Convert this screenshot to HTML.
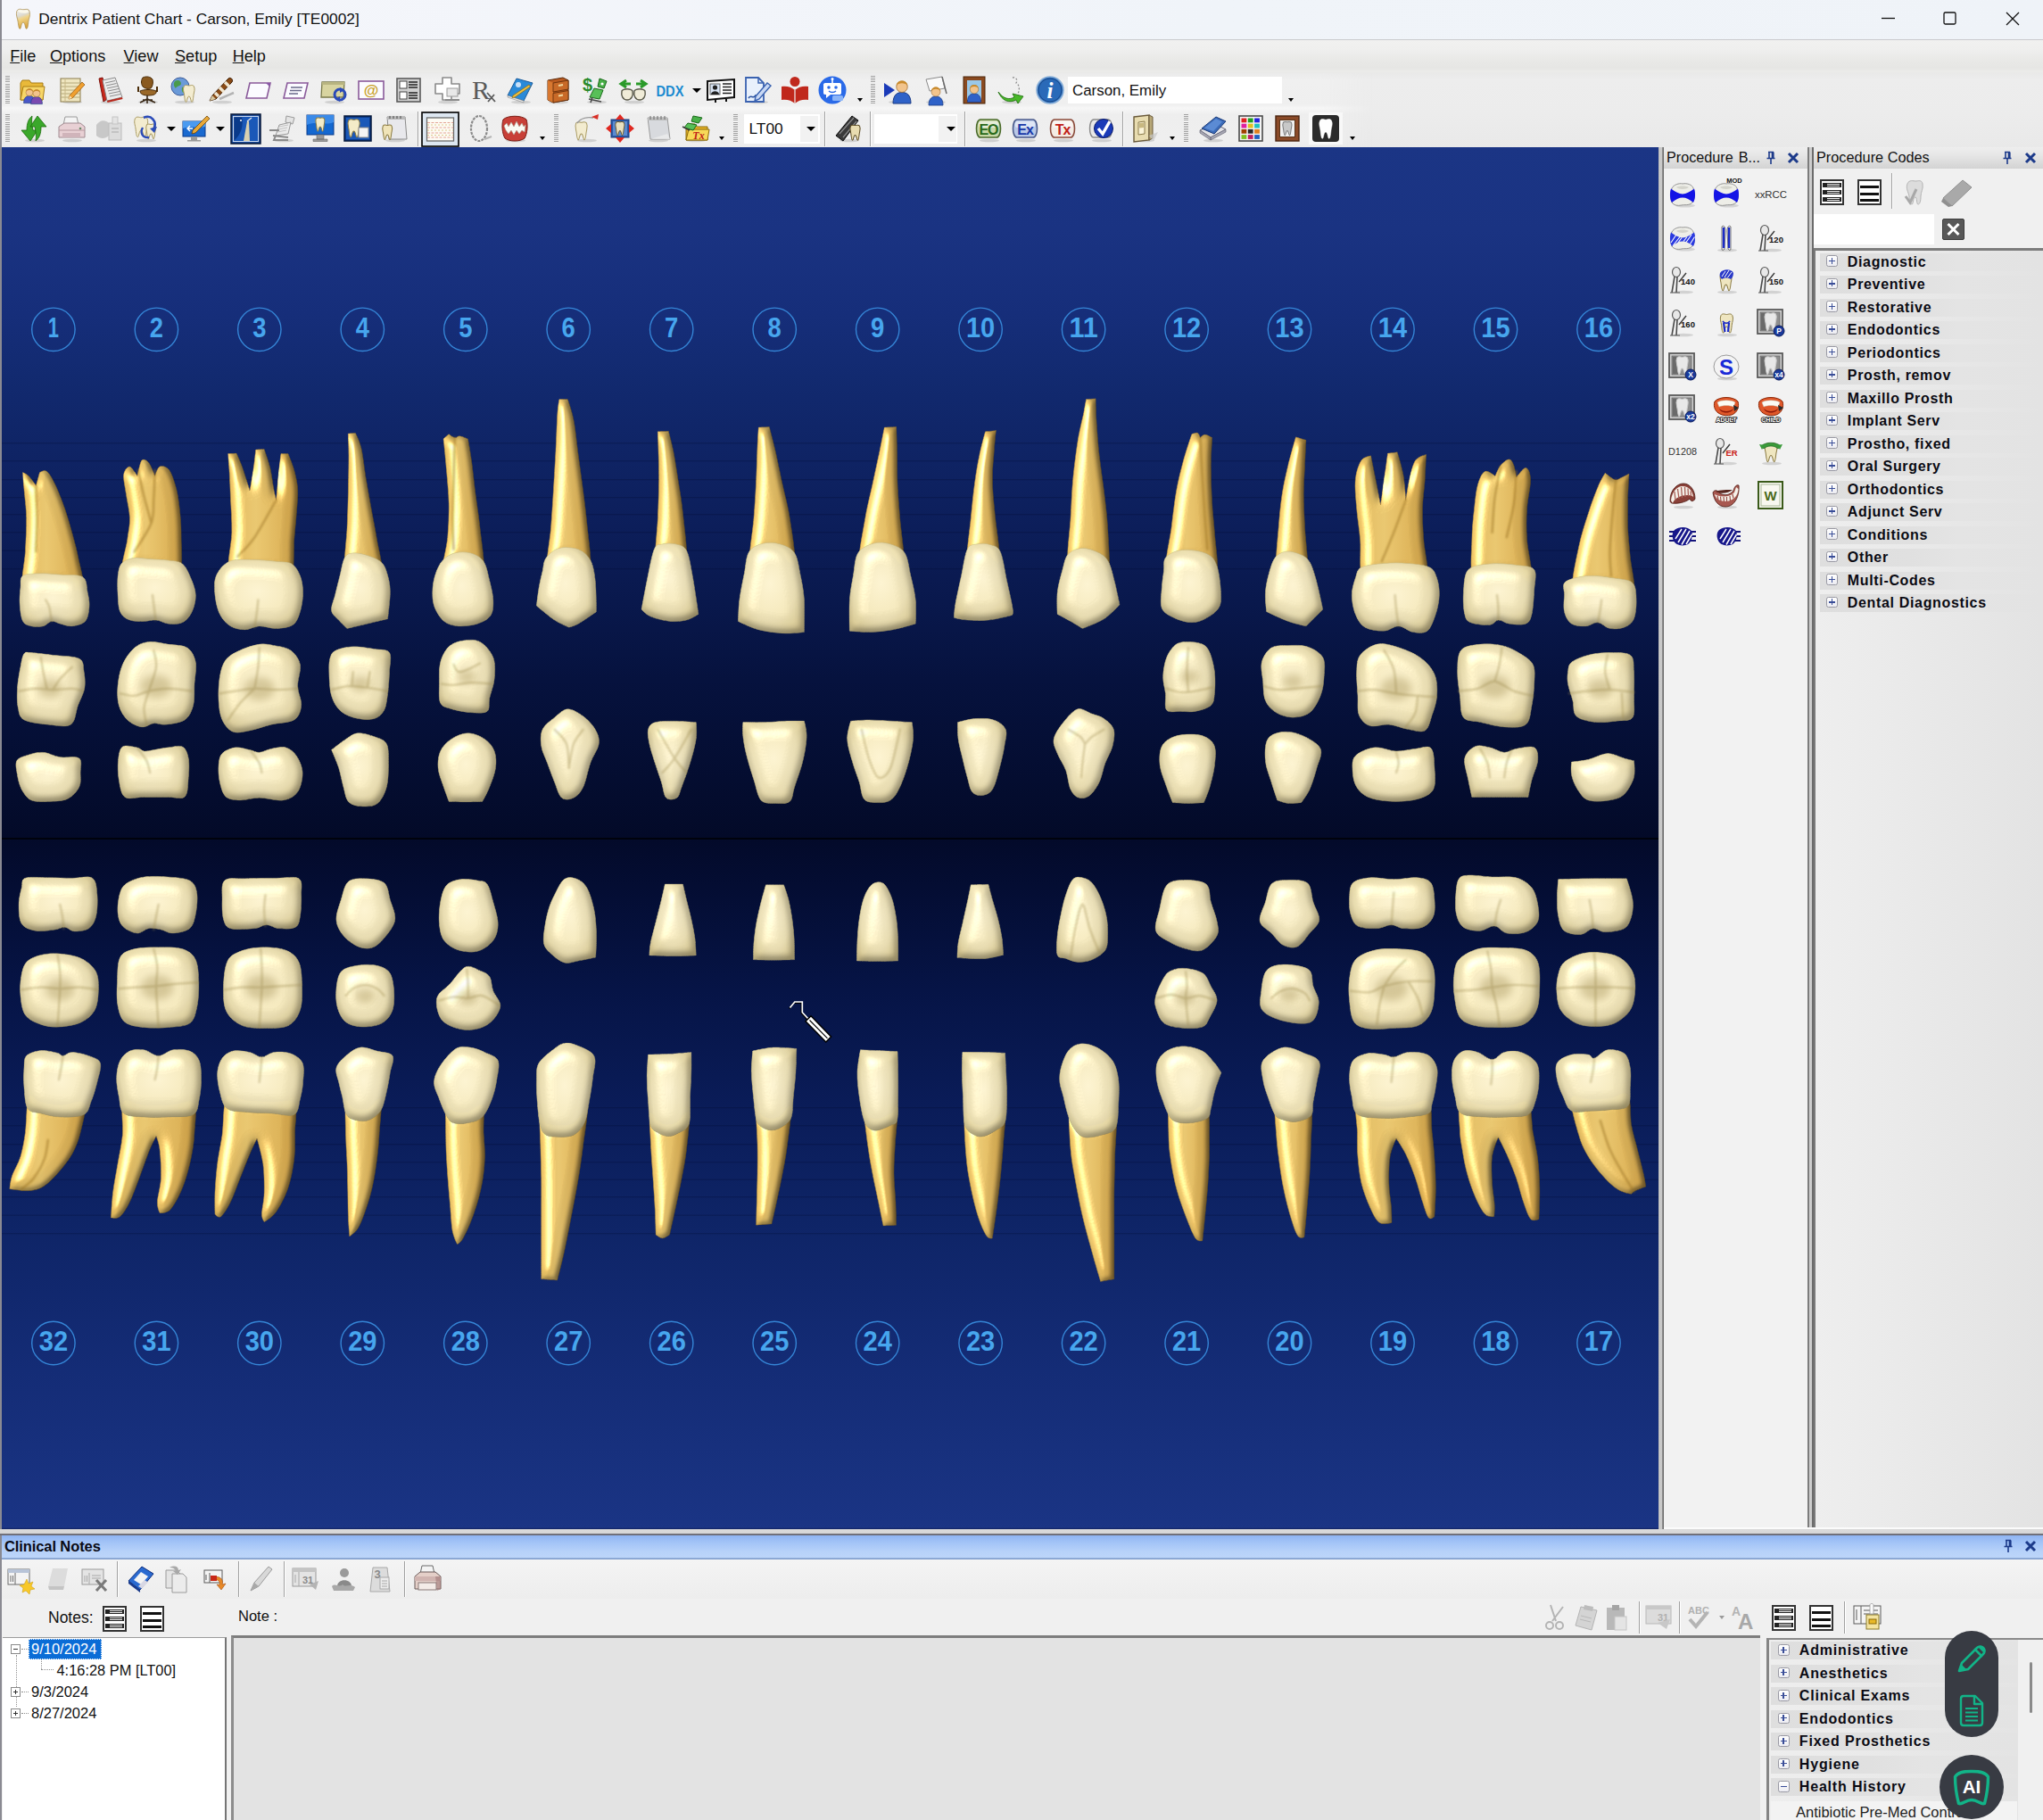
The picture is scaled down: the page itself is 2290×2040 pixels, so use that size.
<!DOCTYPE html><html><head><meta charset="utf-8"><title>Dentrix Patient Chart</title><style>
*{box-sizing:border-box;margin:0;padding:0}
html,body{width:2290px;height:2040px;overflow:hidden;background:#f0f0f0;font-family:"Liberation Sans",sans-serif;color:#000}
.abs{position:absolute}
.t{position:absolute;white-space:pre;line-height:1}
#title{left:0;top:0;width:2290px;height:44.8px;background:linear-gradient(90deg,#f5f6fb,#f0f4f9 60%,#eff3f8);border-bottom:1.2px solid #c9cacd}
#menu{left:0;top:44.8px;width:2290px;height:36.2px;background:linear-gradient(#f1f1f0,#efefee 30%,#e9e9e7 62%,#e6e6e4 86%,#ececea)}
#tb{left:0;top:81px;width:2290px;height:84px;background:linear-gradient(#e9e9e8,#ededed 10%,#ececec 55%,#e9e9e9)}
#chart{left:2px;top:165px;width:1857px;height:1549px;background:linear-gradient(#1b3585 0%,#1a3382 6%,#162e7a 12%,#122a70 16.5%,#0c1e5a 27.5%,#06123e 38.5%,#030a28 50%,#030a2a 50.1%,#061446 61%,#0a1c58 69.3%,#0e2466 77.5%,#142c76 88.5%,#1a3484 99.5%,#1b3585 100%);overflow:hidden}
.u{text-decoration:underline}
.hd{position:absolute;height:23.5px;background:linear-gradient(#eeeeee,#e7e7e7 35%,#d3d3d3);}
.tree b{font-weight:bold}
.pm{position:absolute;width:13.2px;height:12.6px;border:1px solid #9a9aa4;background:linear-gradient(#ffffff,#ececf2);border-radius:2.500px}
.pm:before{content:"";position:absolute;left:2.100px;top:4.600px;width:7px;height:1.300px;background:#3a4e98}
.pm.p:after{content:"";position:absolute;left:4.950px;top:1.800px;width:1.300px;height:7px;background:#3a4e98}
.row{position:absolute;height:24px;left:0;right:0;background:linear-gradient(90deg,#dedede,#e4e4e4)}
.grip{position:absolute;width:5px;height:32px;background:repeating-linear-gradient(#a2a2a2 0,#a2a2a2 1px,#f3f3f3 1.1px,#f3f3f3 2.13px)}
.sep{position:absolute;width:1px;background:#a0a0a0;box-shadow:1px 0 0 #fff}
.dd{position:absolute;width:0;height:0;border-left:5px solid transparent;border-right:5px solid transparent;border-top:5px solid #000}
.dds{position:absolute;width:0;height:0;border-left:3.5px solid transparent;border-right:3.5px solid transparent;border-top:4px solid #000}
</style></head><body><div id="title" class="abs"></div><svg class="abs" style="left:14.5px;top:7.500px" width="22" height="27" viewBox="0 0 24 30"><defs><linearGradient id="tg" x1="0" y1="0" x2=".25" y2="1"><stop offset="0" stop-color="#f2f2f0"/><stop offset=".38" stop-color="#dcdad2"/><stop offset=".55" stop-color="#f0d488"/><stop offset="1" stop-color="#d8a440"/></linearGradient></defs><path d="M4 5 C6 1,10 3,12 3 C15 3,19 1,20 6 C21 11,19 14,18.5 18 C18 23,17.5 27,16 27 C14.5 27,14.5 19,12 19 C9.5 19,9.5 27,8 27 C6.5 27,6 22,5.5 18 C5 14,2.5 10,4 5Z" fill="url(#tg)" stroke="#a98a45" stroke-width=".8"/><path d="M5 5 C7 2.5,10 4,12 4 C15 4,18 2.5,19 6 C17 8,8 8,5 5Z" fill="#fbf8ea"/></svg><div class="t" style="left:43.3px;top:12.5px;font-size:17.35px;color:#111">Dentrix Patient Chart - Carson, Emily [TE0002]</div><svg class="abs" style="left:2090px;top:0" width="200" height="44" viewBox="0 0 200 44"><g stroke="#111" stroke-width="1.3" fill="none"><path d="M19 20.5H34"/><rect x="89" y="14" width="13" height="13" rx="1.5"/><path d="M159 14L173 28M173 14L159 28"/></g></svg><div id="menu" class="abs"></div><div class="t" style="left:11.2px;top:53.6px;font-size:18.1px;width:27px;color:#111"><span class="u">F</span>ile</div><div class="t" style="left:55.9px;top:53.6px;font-size:18.1px;width:63.3px;color:#111"><span class="u">O</span>ptions</div><div class="t" style="left:138.6px;top:53.6px;font-size:18.1px;width:37.3px;color:#111"><span class="u">V</span>iew</div><div class="t" style="left:196px;top:53.6px;font-size:18.1px;width:44px;color:#111"><span class="u">S</span>etup</div><div class="t" style="left:260.7px;top:53.6px;font-size:18.1px;width:37.3px;color:#111"><span class="u">H</span>elp</div><div id="tb" class="abs"></div><div class="abs" style="left:2px;top:82px;width:1538px;height:83px;background:linear-gradient(#ebebeb,#f0f0f0 10%,#efefef 42%,#f6f6f6 47%,#f4f4f4 50%,#eeeeee 56%,#efefef 90%,#ececec);-webkit-mask-image:linear-gradient(90deg,#000 96%,transparent)"></div><div class="grip" style="left:6px;top:85px"></div><div class="grip" style="left:6px;top:128px"></div><svg class="abs" style="left:20.2px;top:85.2px;overflow:visible" width="32" height="32" viewBox="0 0 32 32"><ellipse cx="17" cy="29.5" rx="11" ry="1.8" fill="#000" opacity=".13"/><path d="M3 8L5 5H13L15 8H28V27H3Z" fill="#e9b93a" stroke="#a87c14"/><path d="M3 27L6 12H30L28 27Z" fill="#f7d668" stroke="#a87c14"/><g transform="translate(13,21) scale(0.8)"><path d="M-8 12C-8 4,-4 2,0 2C4 2,8 4,8 12Z" fill="#4a58c8" stroke="#1c3c86" stroke-width=".8"/><circle cx="0" cy="-3" r="5" fill="#f2c48c" stroke="#9a6a30" stroke-width=".6"/><path d="M-5 -4C-5 -10,5 -10,5 -4C3 -7,-3 -7,-5 -4Z" fill="#c98a2a"/></g><g transform="translate(21,22) scale(0.8)"><path d="M-8 12C-8 4,-4 2,0 2C4 2,8 4,8 12Z" fill="#7a4ab0" stroke="#1c3c86" stroke-width=".8"/><circle cx="0" cy="-3" r="5" fill="#f2c48c" stroke="#9a6a30" stroke-width=".6"/><path d="M-5 -4C-5 -10,5 -10,5 -4C3 -7,-3 -7,-5 -4Z" fill="#c98a2a"/></g></svg><svg class="abs" style="left:63.5px;top:85.2px;overflow:visible" width="32" height="32" viewBox="0 0 32 32"><ellipse cx="17" cy="29.5" rx="11" ry="1.8" fill="#000" opacity=".13"/><rect x="4" y="3" width="22" height="26" fill="#efe6c0" stroke="#8a7a4a"/><path d="M4 8H26M4 12H26M4 16H26M4 20H26M4 24H26" stroke="#b4a878" stroke-width="1"/><path d="M9 3V29" stroke="#c8b888"/><path d="M14 22L28 7L31 10L17 25L13 26Z" fill="#f0a030" stroke="#9a5c10" stroke-width=".8"/><path d="M13 26L14 22L17 25Z" fill="#f6e0b0"/></svg><svg class="abs" style="left:107.3px;top:85.2px;overflow:visible" width="32" height="32" viewBox="0 0 32 32"><ellipse cx="17" cy="29.5" rx="11" ry="1.8" fill="#000" opacity=".13"/><path d="M4 3L9 29L13 26L8 2Z" fill="#c8281c" stroke="#7a120c"/><path d="M8 5L22 2L30 24L13 28Z" fill="#ececec" stroke="#8a8a8a"/><path d="M11 8L22 5.5M12 11L23.5 8.5M13 14L25 11.5M14 17L26 14.5M15 20L27 17.5M16 23L28 20.5" stroke="#8c8c8c" stroke-width="1"/><path d="M13 28L30 24L30.5 26L13.5 30Z" fill="#b8281c"/></svg><svg class="abs" style="left:149.0px;top:85.2px;overflow:visible" width="32" height="32" viewBox="0 0 32 32"><ellipse cx="17" cy="29.5" rx="11" ry="1.8" fill="#000" opacity=".13"/><path d="M11 2C15 0,20 1,22 4C23 8,22 12,20 14C16 15,13 14,11 12C9 9,9 5,11 2Z" fill="#8a5a20" stroke="#4a2c08"/><path d="M8 17C12 15,22 15,26 17C27 20,24 22,17 22C11 22,8 20,8 17Z" fill="#9a6828" stroke="#4a2c08"/><path d="M16 22V26M8 30L16 26L25 30M16 26V31M11 27L22 27" stroke="#3a2a18" stroke-width="1.6" fill="none"/><path d="M6 12V18M27 12V18" stroke="#4a2c08" stroke-width="2"/></svg><svg class="abs" style="left:190.0px;top:85.2px;overflow:visible" width="32" height="32" viewBox="0 0 32 32"><ellipse cx="17" cy="29.5" rx="11" ry="1.8" fill="#000" opacity=".13"/><circle cx="12" cy="12" r="10" fill="#6a9ad8" stroke="#3a5a98"/><path d="M6 6C9 4,13 5,13 9C12 12,8 11,7 14C5 12,4 9,6 6ZM14 13C17 12,19 14,18 18C16 20,13 19,14 13Z" fill="#4a9a4a"/><path transform="translate(9,7) scale(0.8)" d="M9 6C11 3,14 5,16 5C18 5,21 3,23 6C25 10,23 14,22.5 18C22 23,21.5 28,20 28C18.5 28,18.5 20,16 20C13.5 20,13.5 28,12 28C10.5 28,10 23,9.5 18C9 14,7 10,9 6Z" fill="#f3ecd0" stroke="#a99a62" stroke-width="1.25"/></svg><svg class="abs" style="left:232.0px;top:85.2px;overflow:visible" width="32" height="32" viewBox="0 0 32 32"><ellipse cx="17" cy="29.5" rx="11" ry="1.8" fill="#000" opacity=".13"/><path d="M3 28L6 22L24 3C26 1,30 4,28 7L10 26Z" fill="#8a4a14" stroke="#3a1c04"/><path d="M9 19L13 23M14 13L19 18M20 7L25 12" stroke="#f0e6d0" stroke-width="3.4"/><path d="M3 28L6 22L10 26Z" fill="#d8c8a0"/><path d="M14 26L30 19" stroke="#9a9a9a" stroke-width="2.5" opacity=".7"/></svg><svg class="abs" style="left:273.5px;top:85.2px;overflow:visible" width="32" height="32" viewBox="0 0 32 32"><path d="M6 8H29L25 25H2Z" fill="#fbfbff" stroke="#8a5a9a" stroke-width="1.6"/><path d="M24 8H29L28 12Z" fill="#8a5aa8"/></svg><svg class="abs" style="left:315.5px;top:85.2px;overflow:visible" width="32" height="32" viewBox="0 0 32 32"><path d="M6 8H29L25 25H2Z" fill="#fbfbff" stroke="#8a5a9a" stroke-width="1.6"/><path d="M10 13H23M9 16.5H22M8 20H18" stroke="#6a6a8a" stroke-width="1.4"/></svg><svg class="abs" style="left:358.0px;top:85.2px;overflow:visible" width="32" height="32" viewBox="0 0 32 32"><ellipse cx="17" cy="29.5" rx="11" ry="1.8" fill="#000" opacity=".13"/><path d="M3 7H28L27 24H2Z" fill="#d8d4a0" stroke="#7a7a4a" stroke-width="1.3"/><path d="M3 7H28V10H3Z" fill="#b8b480"/><circle cx="23" cy="21" r="6" fill="none" stroke="#2a4ab8" stroke-width="3"/><path d="M23 13L28 16L23 19ZM23 29L18 26L23 23Z" fill="#2a4ab8"/></svg><svg class="abs" style="left:400.2px;top:85.2px;overflow:visible" width="32" height="32" viewBox="0 0 32 32"><rect x="2" y="6" width="28" height="20" fill="#fbfbff" stroke="#8a5a9a" stroke-width="1.6"/><text x="16" y="22" font-family="Liberation Sans" font-weight="bold" font-size="17" fill="#c8a028" text-anchor="middle">@</text></svg><svg class="abs" style="left:441.5px;top:85.2px;overflow:visible" width="32" height="32" viewBox="0 0 32 32"><rect x="3" y="3" width="26" height="26" fill="#d0d0d0" stroke="#5a5a5a" stroke-width="1.6"/><rect x="6" y="6" width="8" height="8" fill="#fff" stroke="#444"/><rect x="6" y="18" width="8" height="8" fill="#fff" stroke="#444"/><path d="M16 7H26M16 10H26M16 13H26M16 19H26M16 22H26M16 25H26" stroke="#222" stroke-width="1.5"/></svg><svg class="abs" style="left:484.8px;top:85.2px;overflow:visible" width="32" height="32" viewBox="0 0 32 32"><ellipse cx="17" cy="29.5" rx="11" ry="1.8" fill="#000" opacity=".13"/><path d="M11 2H21V9H30V20H21V27H11V20H3V9H11Z" fill="#fff" stroke="#8a8a8a" stroke-width="1.6" stroke-linejoin="round"/><rect x="16" y="14" width="12" height="9" fill="#e8e8e8" stroke="#9a9a9a"/><path d="M14 27H30" stroke="#8a8a8a" stroke-width="2"/></svg><svg class="abs" style="left:526.6px;top:85.2px;overflow:visible" width="32" height="32" viewBox="0 0 32 32"><text x="2" y="26" font-family="Liberation Serif" font-size="30" fill="#5a5a5a">R</text><path d="M19 19L28 29M27 21L20 29" stroke="#5a5a5a" stroke-width="1.8"/></svg><svg class="abs" style="left:567.3px;top:85.2px;overflow:visible" width="32" height="32" viewBox="0 0 32 32"><ellipse cx="17" cy="29.5" rx="11" ry="1.8" fill="#000" opacity=".13"/><path d="M12 3L30 8L20 28L2 22Z" fill="#2a8ad8" stroke="#1a5a9a"/><path d="M2 22L20 28L20 30L2 24Z" fill="#e8e8e8" stroke="#8a8a8a" stroke-width=".6"/><path d="M8 22L26 10L27.5 12L10 24L7 24.5Z" fill="#f0c040" stroke="#8a6a10" stroke-width=".7"/><circle cx="14" cy="10" r="3" fill="#c8e0f8"/></svg><svg class="abs" style="left:608.7px;top:85.2px;overflow:visible" width="32" height="32" viewBox="0 0 32 32"><ellipse cx="17" cy="29.5" rx="11" ry="1.8" fill="#000" opacity=".13"/><path d="M5 5L22 2L28 5V27L11 30L5 27Z" fill="#b85a20" stroke="#5a2808"/><path d="M5 5L11 8V30L5 27Z" fill="#d87830"/><path d="M11 8L28 5V15L11 18ZM11 19.5L28 16.5V27L11 30Z" fill="#c86a28" stroke="#5a2808" stroke-width=".8"/><path d="M17 11L22 10M17 22.5L22 21.5" stroke="#f0d8a0" stroke-width="2"/></svg><svg class="abs" style="left:652.0px;top:85.2px;overflow:visible" width="32" height="32" viewBox="0 0 32 32"><ellipse cx="17" cy="29.5" rx="11" ry="1.8" fill="#000" opacity=".13"/><text x="1" y="17" font-family="Liberation Sans" font-weight="bold" font-size="20" fill="#2a8a2a">$</text><path d="M20 3L28 6L25 14L18 12Z" fill="#48b048" stroke="#1a6a1a"/><path d="M14 14L24 16L20 26L9 24Z" fill="#58c058" stroke="#1a6a1a"/><path d="M8 26L22 29M12 24L10 30" stroke="#4a4a4a" stroke-width="1.6"/><circle cx="23" cy="9" r="1.6" fill="#fff"/></svg><svg class="abs" style="left:694.0px;top:85.2px;overflow:visible" width="32" height="32" viewBox="0 0 32 32"><ellipse cx="17" cy="29.5" rx="11" ry="1.8" fill="#000" opacity=".13"/><path d="M2 9H13M8 5L2 9L8 13M30 9H19M24 5L30 9L24 13" stroke="#2a9a2a" stroke-width="3" fill="none"/><path d="M3 17C5 14,13 14,15 17C16 22,14 27,9 27C4 27,2 22,3 17ZM17 17C19 14,27 14,29 17C30 22,28 27,23 27C18 27,16 22,17 17Z" fill="#f0ecd8" stroke="#5a5a4a" stroke-width="1.4"/></svg><svg class="abs" style="left:735.3px;top:85.2px;overflow:visible" width="32" height="32" viewBox="0 0 32 32"><text x="16" y="23" font-family="Liberation Sans" font-weight="bold" font-size="16.5" fill="#1a8ad0" text-anchor="middle" textLength="31" lengthAdjust="spacingAndGlyphs">DDX</text></svg><svg class="abs" style="left:792.0px;top:85.2px;overflow:visible" width="32" height="32" viewBox="0 0 32 32"><path d="M1 6L31 4V24L1 27Z" fill="#fff" stroke="#111" stroke-width="2"/><rect x="4" y="9" width="11" height="12" fill="#d8e4f4" stroke="#444" stroke-width=".8"/><circle cx="9.5" cy="13" r="2.6" fill="#222"/><path d="M5 21C5 16,14 16,14 21Z" fill="#222"/><path d="M18 9H28M18 12.5H28M18 16H28M18 19.5H28" stroke="#222" stroke-width="1.7"/><path d="M10 27V30M22 26V29" stroke="#111" stroke-width="2"/></svg><svg class="abs" style="left:833.0px;top:85.2px;overflow:visible" width="32" height="32" viewBox="0 0 32 32"><ellipse cx="17" cy="29.5" rx="11" ry="1.8" fill="#000" opacity=".13"/><path d="M3 2H17L23 8V29H3Z" fill="#e8f0fc" stroke="#3a62b0" stroke-width="1.8"/><path d="M17 2V8H23" fill="none" stroke="#3a62b0" stroke-width="1.5"/><path d="M6 25C9 20,11 27,14 22L17 24" stroke="#2a52a0" stroke-width="1.6" fill="none"/><path d="M14 23L27 8L31 11L18 26L13 28Z" fill="#c8d8f4" stroke="#3a62b0" stroke-width="1.4"/></svg><svg class="abs" style="left:875.0px;top:85.2px;overflow:visible" width="32" height="32" viewBox="0 0 32 32"><circle cx="16" cy="6.5" r="5.5" fill="#c0281c"/><path d="M1 12C6 11,12 12,16 16C20 12,26 11,31 12V27C26 26,20 27,16 31C12 27,6 26,1 27Z" fill="#c0281c"/><path d="M16 16V31" stroke="#f0f0f0" stroke-width="1.2"/></svg><svg class="abs" style="left:917.0px;top:85.2px;overflow:visible" width="32" height="32" viewBox="0 0 32 32"><circle cx="16" cy="16" r="15.5" fill="#2a6ae8"/><path d="M8 8H24C25.5 8,26 9,26 10V19C26 20.5,25 21,24 21H14L9 25V21H8C6.5 21,6 20,6 19V10C6 9,6.5 8,8 8Z" fill="#fff"/><circle cx="12" cy="13" r="1.8" fill="#2a6ae8"/><circle cx="20" cy="13" r="1.8" fill="#2a6ae8"/><path d="M12 17C14 19,18 19,20 17" stroke="#2a6ae8" stroke-width="1.4" fill="none"/><path d="M16 8V4" stroke="#fff" stroke-width="1.6"/><circle cx="16" cy="3.6" r="1.5" fill="#fff"/><rect x="16" y="22" width="12" height="6" rx="1.5" fill="#8ab4f8"/></svg><svg class="abs" style="left:989.5px;top:85.2px;overflow:visible" width="32" height="32" viewBox="0 0 32 32"><ellipse cx="17" cy="29.5" rx="11" ry="1.8" fill="#000" opacity=".13"/><path d="M1 8L13 16L1 24Z" fill="#1a3ab8"/><g transform="translate(21,16) scale(1.25)"><path d="M-8 12C-8 4,-4 2,0 2C4 2,8 4,8 12Z" fill="#2f62c8" stroke="#1c3c86" stroke-width=".8"/><circle cx="0" cy="-3" r="5" fill="#f2c48c" stroke="#9a6a30" stroke-width=".6"/><path d="M-5 -4C-5 -10,5 -10,5 -4C3 -7,-3 -7,-5 -4Z" fill="#c98a2a"/></g></svg><svg class="abs" style="left:1032.0px;top:85.2px;overflow:visible" width="32" height="32" viewBox="0 0 32 32"><ellipse cx="17" cy="29.5" rx="11" ry="1.8" fill="#000" opacity=".13"/><path d="M6 4L24 1L27 14L10 17Z" fill="#fafafa" stroke="#8a8a8a"/><path d="M24 1L29 20" stroke="#6a6a6a" stroke-width="1.5"/><g transform="translate(17,21) scale(1.0)"><path d="M-8 12C-8 4,-4 2,0 2C4 2,8 4,8 12Z" fill="#2f62c8" stroke="#1c3c86" stroke-width=".8"/><circle cx="0" cy="-3" r="5" fill="#f2c48c" stroke="#9a6a30" stroke-width=".6"/><path d="M-5 -4C-5 -10,5 -10,5 -4C3 -7,-3 -7,-5 -4Z" fill="#c98a2a"/></g></svg><svg class="abs" style="left:1076.0px;top:85.2px;overflow:visible" width="32" height="32" viewBox="0 0 32 32"><ellipse cx="17" cy="29.5" rx="11" ry="1.8" fill="#000" opacity=".13"/><rect x="4" y="1" width="24" height="30" fill="#8a4a20" stroke="#4a2408"/><rect x="8" y="5" width="16" height="22" fill="#9ac8e8"/><g transform="translate(16,18) scale(0.95)"><path d="M-8 12C-8 4,-4 2,0 2C4 2,8 4,8 12Z" fill="#2f62c8" stroke="#1c3c86" stroke-width=".8"/><circle cx="0" cy="-3" r="5" fill="#f2c48c" stroke="#9a6a30" stroke-width=".6"/><path d="M-5 -4C-5 -10,5 -10,5 -4C3 -7,-3 -7,-5 -4Z" fill="#c98a2a"/></g></svg><svg class="abs" style="left:1117.0px;top:85.2px;overflow:visible" width="32" height="32" viewBox="0 0 32 32"><ellipse cx="17" cy="29.5" rx="11" ry="1.8" fill="#000" opacity=".13"/><path d="M18 2C22 1,24 5,22 8C26 10,26 16,24 20C26 24,22 28,18 25" fill="none" stroke="#8a8a8a" stroke-width="1.3" stroke-dasharray="2 2"/><path d="M2 18C8 26,14 27,20 24L18 20L30 23L24 31L22 27C14 31,6 28,2 18Z" fill="#48b828" stroke="#1a6a0a" stroke-width=".8"/></svg><svg class="abs" style="left:1160.6px;top:85.2px;overflow:visible" width="32" height="32" viewBox="0 0 32 32"><circle cx="16" cy="16" r="15" fill="#2a6ab8" stroke="#8ab0d8" stroke-width="1.6"/><circle cx="16" cy="16" r="13" fill="none" stroke="#1a4a8a" stroke-width="1"/><text x="16" y="25" font-family="Liberation Serif" font-style="italic" font-weight="bold" font-size="25" fill="#fff" text-anchor="middle">i</text></svg><div class="dd" style="left:775.5px;top:99px"></div><div class="dds" style="left:960.5px;top:110px"></div><div class="grip" style="left:976px;top:85px"></div><div class="abs" style="left:1197px;top:86px;width:240px;height:30px;background:#fff"></div><div class="t" style="left:1202px;top:93.500px;font-size:16.9px;color:#111">Carson, Emily</div><div class="dds" style="left:1443.5px;top:110px"></div><svg class="abs" style="left:21.5px;top:128.3px;overflow:visible" width="32" height="32" viewBox="0 0 32 32"><ellipse cx="17" cy="29.5" rx="11" ry="1.8" fill="#000" opacity=".13"/><path d="M12 30L2 18H8C8 10,10 5,14 2C13 8,14 12,15 18H20Z" fill="#3aa82a" stroke="#1a6a0a" stroke-width=".8"/><path d="M20 2L30 14H24C24 22,22 27,18 30C19 24,18 20,17 14H12Z" fill="#3aa82a" stroke="#1a6a0a" stroke-width=".8"/></svg><svg class="abs" style="left:64.0px;top:128.3px;overflow:visible" width="32" height="32" viewBox="0 0 32 32"><ellipse cx="17" cy="29.5" rx="11" ry="1.8" fill="#000" opacity=".13"/><path d="M9 3H22L24 12H7Z" fill="#f4f4f4" stroke="#9a9a9a"/><path d="M2 14L8 10H26L31 14V26H2Z" fill="#e8d0d4" stroke="#a08a90"/><path d="M2 18H31" stroke="#b89aa0"/><rect x="6" y="21" width="20" height="5" fill="#d0b4ba"/><circle cx="26" cy="16" r="1.3" fill="#6a8a6a"/></svg><svg class="abs" style="left:106.0px;top:128.3px;overflow:visible" width="32" height="32" viewBox="0 0 32 32"><path d="M2 12C6 6,12 6,16 10V24C12 28,6 28,2 24Z" fill="#c8c8c8"/><rect x="16" y="10" width="14" height="19" fill="#dcdcdc" stroke="#bcbcbc"/><rect x="20" y="3" width="6" height="8" fill="#e4e4e4" stroke="#c4c4c4"/><path d="M19 16H27M19 20H27" stroke="#bababa" stroke-width="1.5"/></svg><svg class="abs" style="left:147.0px;top:128.3px;overflow:visible" width="32" height="32" viewBox="0 0 32 32"><ellipse cx="17" cy="29.5" rx="11" ry="1.8" fill="#000" opacity=".13"/><path transform="translate(-4,-1) scale(0.95)" d="M9 6C11 3,14 5,16 5C18 5,21 3,23 6C25 10,23 14,22.5 18C22 23,21.5 28,20 28C18.5 28,18.5 20,16 20C13.5 20,13.5 28,12 28C10.5 28,10 23,9.5 18C9 14,7 10,9 6Z" fill="#f3ecd0" stroke="#a99a62" stroke-width="1.05"/><path transform="translate(11,8) scale(0.7)" d="M9 6C11 3,14 5,16 5C18 5,21 3,23 6C25 10,23 14,22.5 18C22 23,21.5 28,20 28C18.5 28,18.5 20,16 20C13.5 20,13.5 28,12 28C10.5 28,10 23,9.5 18C9 14,7 10,9 6Z" fill="#f3ecd0" stroke="#a99a62" stroke-width="1.43"/><path d="M14 4C22 0,30 8,25 17" stroke="#2a4ab8" stroke-width="2.6" fill="none"/><path d="M21 16L26 21L29 14Z" fill="#2a4ab8"/><path d="M20 26C12 27,10 20,13 15" stroke="#2a4ab8" stroke-width="2.4" fill="none"/></svg><svg class="abs" style="left:204.0px;top:128.3px;overflow:visible" width="32" height="32" viewBox="0 0 32 32"><rect x="1" y="8" width="25" height="17" fill="#1a6ad0" stroke="#0a3a8a"/><path d="M1 8H26V14C18 16,8 12,1 16Z" fill="#4a9af0"/><path d="M10 25H17V29H10ZM6 29H21V30.5H6Z" fill="#9a9a9a"/><path d="M12 18L28 2L31 5L15 21L11 22Z" fill="#e8a838" stroke="#6a4408" stroke-width=".8"/><path d="M6 16H12M9 13L6 16L9 19" stroke="#fff" stroke-width="1.4" fill="none"/></svg><svg class="abs" style="left:301.0px;top:128.3px;overflow:visible" width="32" height="32" viewBox="0 0 32 32"><ellipse cx="17" cy="29.5" rx="11" ry="1.8" fill="#000" opacity=".13"/><path d="M20 2L29 4L27 11L19 9Z" fill="#e4e4e4" stroke="#9a9a9a"/><path d="M12 12L25 9L22 22L8 24Z" fill="#ececec" stroke="#9a9a9a"/><path d="M1 18H12M5 24L22 26M8 24L6 29H22" stroke="#8a8a8a" stroke-width="2" fill="none"/><path d="M12 14L22 12M11 17L21 15M10 20L20 18" stroke="#c4c4c4"/></svg><svg class="abs" style="left:343.0px;top:128.3px;overflow:visible" width="32" height="32" viewBox="0 0 32 32"><rect x="1" y="1" width="30" height="22" fill="#1468d0" stroke="#0a3a8a"/><path d="M1 1H31V9C22 13,10 7,1 12Z" fill="#3a8ae8"/><path d="M12 23H20V28H12ZM8 28H24V30.5H8Z" fill="#9a9a9a" stroke="#6a6a6a" stroke-width=".6"/><path transform="translate(5.5,1) scale(0.65)" d="M9 6C11 3,14 5,16 5C18 5,21 3,23 6C25 10,23 14,22.5 18C22 23,21.5 28,20 28C18.5 28,18.5 20,16 20C13.5 20,13.5 28,12 28C10.5 28,10 23,9.5 18C9 14,7 10,9 6Z" fill="#f4ecc8" stroke="#8a7a42" stroke-width="1.54"/></svg><svg class="abs" style="left:385.0px;top:128.3px;overflow:visible" width="32" height="32" viewBox="0 0 32 32"><rect x="1" y="2" width="30" height="28" fill="#0a3a8a" stroke="#06183a" stroke-width="1.5"/><rect x="3" y="4" width="26" height="24" fill="#1a58b8"/><path transform="translate(-2,2) scale(0.85)" d="M9 6C11 3,14 5,16 5C18 5,21 3,23 6C25 10,23 14,22.5 18C22 23,21.5 28,20 28C18.5 28,18.5 20,16 20C13.5 20,13.5 28,12 28C10.5 28,10 23,9.5 18C9 14,7 10,9 6Z" fill="#f4ecc8" stroke="#8a7a42" stroke-width="1.18"/><rect x="17" y="15" width="11" height="11" fill="#f4f4f4" stroke="#8a8a8a"/></svg><svg class="abs" style="left:426.0px;top:128.3px;overflow:visible" width="32" height="32" viewBox="0 0 32 32"><ellipse cx="17" cy="29.5" rx="11" ry="1.8" fill="#000" opacity=".13"/><path d="M8 3H28L30 28H10Z" fill="#e8e8ec" stroke="#8a8a8a"/><path d="M8 3H28V6H8Z" fill="#b8b8b8"/><path d="M11 2V5M15 2V5M19 2V5M23 2V5" stroke="#4a4a4a"/><path transform="translate(-3,9) scale(0.7)" d="M9 6C11 3,14 5,16 5C18 5,21 3,23 6C25 10,23 14,22.5 18C22 23,21.5 28,20 28C18.5 28,18.5 20,16 20C13.5 20,13.5 28,12 28C10.5 28,10 23,9.5 18C9 14,7 10,9 6Z" fill="#f0e4b8" stroke="#8a7a42" stroke-width="1.43"/></svg><svg class="abs" style="left:521.0px;top:128.3px;overflow:visible" width="32" height="32" viewBox="0 0 32 32"><ellipse cx="16" cy="16" rx="9" ry="14" fill="none" stroke="#8a8a8a" stroke-width="2.2" stroke-dasharray="3 1.2"/><path d="M22 28L30 25" stroke="#b4b4b4" stroke-width="2"/></svg><svg class="abs" style="left:561.0px;top:128.3px;overflow:visible" width="32" height="32" viewBox="0 0 32 32"><ellipse cx="17" cy="29.5" rx="11" ry="1.8" fill="#000" opacity=".13"/><path d="M3 6C8 1,24 1,29 6C31 12,30 22,27 27C22 31,10 31,5 27C2 22,1 12,3 6Z" fill="#c84038" stroke="#7a1c14"/><path d="M4 13L7 10L9 14L12 9L15 14L18 8L21 14L24 10L26 14L28 12L27 20L24 18L21 22L18 18L15 23L12 18L9 22L6 18Z" fill="#fbfbf4" stroke="#a8a898" stroke-width=".6"/></svg><svg class="abs" style="left:641.0px;top:128.3px;overflow:visible" width="32" height="32" viewBox="0 0 32 32"><ellipse cx="17" cy="29.5" rx="11" ry="1.8" fill="#000" opacity=".13"/><path transform="translate(-3,5) scale(0.85)" d="M9 6C11 3,14 5,16 5C18 5,21 3,23 6C25 10,23 14,22.5 18C22 23,21.5 28,20 28C18.5 28,18.5 20,16 20C13.5 20,13.5 28,12 28C10.5 28,10 23,9.5 18C9 14,7 10,9 6Z" fill="#f3ecd0" stroke="#a99a62" stroke-width="1.18"/><path d="M6 10C10 4,18 3,24 4" stroke="#9a9a9a" stroke-width="1.4" fill="none"/><path d="M22 3L30 0L29 6Z" fill="#d83028"/></svg><svg class="abs" style="left:679.0px;top:128.3px;overflow:visible" width="32" height="32" viewBox="0 0 32 32"><rect x="6" y="6" width="20" height="20" fill="#2a5aa8" stroke="#1a3a78"/><rect x="8" y="8" width="16" height="16" fill="#5a8ad0"/><path transform="translate(5.5,5.5) scale(0.65)" d="M9 6C11 3,14 5,16 5C18 5,21 3,23 6C25 10,23 14,22.5 18C22 23,21.5 28,20 28C18.5 28,18.5 20,16 20C13.5 20,13.5 28,12 28C10.5 28,10 23,9.5 18C9 14,7 10,9 6Z" fill="#e8e0c0" stroke="#6a5a32" stroke-width="1.54"/><path d="M16 0L21 6H11ZM16 32L21 26H11ZM0 16L6 11V21ZM32 16L26 11V21Z" fill="#e02820"/></svg><svg class="abs" style="left:721.0px;top:128.3px;overflow:visible" width="32" height="32" viewBox="0 0 32 32"><ellipse cx="17" cy="29.5" rx="11" ry="1.8" fill="#000" opacity=".13"/><path d="M5 4H27L30 28H8Z" fill="#d8dade" stroke="#9a9a9a"/><path d="M5 4H27V7H5Z" fill="#bcbcbc"/><path d="M8 2V6M12 2V6M16 2V6M20 2V6M24 2V6" stroke="#6a6a6a"/><path d="M8 28L30 28L27 22Z" fill="#f0f0f0" opacity=".7"/></svg><svg class="abs" style="left:763.0px;top:128.3px;overflow:visible" width="32" height="32" viewBox="0 0 32 32"><ellipse cx="17" cy="29.5" rx="11" ry="1.8" fill="#000" opacity=".13"/><path d="M6 14L8 11H16L18 14H30V29H6Z" fill="#e8b428" stroke="#8a6a0a"/><path d="M6 29L9 17H32L30 29Z" fill="#f8d858" stroke="#8a6a0a"/><text x="20" y="28" font-family="Liberation Serif" font-style="italic" font-weight="bold" font-size="12" fill="#c02018" text-anchor="middle">Tx</text><path d="M14 2L24 4L20 10L12 8Z" fill="#48b048" stroke="#1a6a1a"/><path d="M8 10L18 12L14 18L4 15Z" fill="#58c058" stroke="#1a6a1a"/><path d="M2 14L10 18" stroke="#3a3a3a" stroke-width="1.4"/></svg><svg class="abs" style="left:935.0px;top:128.3px;overflow:visible" width="32" height="32" viewBox="0 0 32 32"><ellipse cx="17" cy="29.5" rx="11" ry="1.8" fill="#000" opacity=".13"/><path d="M2 24L20 2L27 7L10 30Z" fill="#3a3a3a" stroke="#0a0a0a"/><path d="M6 22L22 4M10 26L25 8" stroke="#8a8a8a" stroke-width="1.2"/><path transform="translate(12,9) scale(0.72)" d="M9 6C11 3,14 5,16 5C18 5,21 3,23 6C25 10,23 14,22.5 18C22 23,21.5 28,20 28C18.5 28,18.5 20,16 20C13.5 20,13.5 28,12 28C10.5 28,10 23,9.5 18C9 14,7 10,9 6Z" fill="#e8dcb0" stroke="#5a4a22" stroke-width="1.39"/></svg><svg class="abs" style="left:1091.6px;top:128.3px;overflow:visible" width="32" height="32" viewBox="0 0 32 32"><ellipse cx="17" cy="29.5" rx="11" ry="1.8" fill="#000" opacity=".13"/><path d="M7 6H25C31 6,31 26,25 26H7C1 26,1 6,7 6Z" fill="#c8d8a8" stroke="#4a6a2a" stroke-width="1.6"/><path d="M7 8H25C28 8,28 15,25 15H7C4 15,4 8,7 8Z" fill="#fff" opacity=".55"/><text x="16" y="23" font-family="Liberation Sans" font-weight="bold" font-size="16" fill="#2a6a1a" text-anchor="middle" letter-spacing="-1">EO</text></svg><svg class="abs" style="left:1132.7px;top:128.3px;overflow:visible" width="32" height="32" viewBox="0 0 32 32"><ellipse cx="17" cy="29.5" rx="11" ry="1.8" fill="#000" opacity=".13"/><path d="M7 6H25C31 6,31 26,25 26H7C1 26,1 6,7 6Z" fill="#b8c8e8" stroke="#4a5a8a" stroke-width="1.6"/><path d="M7 8H25C28 8,28 15,25 15H7C4 15,4 8,7 8Z" fill="#fff" opacity=".55"/><text x="16" y="23" font-family="Liberation Sans" font-weight="bold" font-size="16" fill="#1a3aa8" text-anchor="middle" letter-spacing="-1">Ex</text></svg><svg class="abs" style="left:1175.0px;top:128.3px;overflow:visible" width="32" height="32" viewBox="0 0 32 32"><ellipse cx="17" cy="29.5" rx="11" ry="1.8" fill="#000" opacity=".13"/><path d="M7 6H25C31 6,31 26,25 26H7C1 26,1 6,7 6Z" fill="#f4ece4" stroke="#8a4a3a" stroke-width="1.6"/><path d="M7 8H25C28 8,28 15,25 15H7C4 15,4 8,7 8Z" fill="#fff" opacity=".55"/><text x="16" y="23" font-family="Liberation Sans" font-weight="bold" font-size="16" fill="#c02018" text-anchor="middle" letter-spacing="-1">Tx</text></svg><svg class="abs" style="left:1218.0px;top:128.3px;overflow:visible" width="32" height="32" viewBox="0 0 32 32"><ellipse cx="17" cy="29.5" rx="11" ry="1.8" fill="#000" opacity=".13"/><path d="M8 6H24C30 6,30 26,24 26H8C2 26,2 6,8 6Z" fill="#e8e8e8" stroke="#8a8a8a" stroke-width="1.4"/><circle cx="19" cy="16" r="10.5" fill="#1a3ab8" stroke="#0a1a6a"/><path d="M13 16L18 22L26 8" stroke="#fff" stroke-width="3.4" fill="none"/></svg><svg class="abs" style="left:1266.0px;top:128.3px;overflow:visible" width="32" height="32" viewBox="0 0 32 32"><ellipse cx="17" cy="29.5" rx="11" ry="1.8" fill="#000" opacity=".13"/><path d="M5 3L22 1V29L5 31Z" fill="#e8dcb0" stroke="#6a5a3a" stroke-width="1.4"/><path d="M22 1L26 3V27L22 29Z" fill="#b8a878" stroke="#6a5a3a"/><path d="M10 9L17 8V22L10 23Z" fill="#fbf4d8" stroke="#8a7a4a"/><path d="M11 10L16 9.5V15L11 15.5Z" fill="#c8b880"/><path d="M22 24L32 20L27 30Z" fill="#c8c8c8" opacity=".7"/></svg><svg class="abs" style="left:1342.7px;top:128.3px;overflow:visible" width="32" height="32" viewBox="0 0 32 32"><ellipse cx="17" cy="29.5" rx="11" ry="1.8" fill="#000" opacity=".13"/><path d="M2 18L14 26L31 17L19 11Z" fill="#e4e4e8" stroke="#6a6a7a"/><path d="M2 18V21L14 29V26ZM14 26V29L31 20V17Z" fill="#a8a8b4" stroke="#6a6a7a" stroke-width=".7"/><path d="M4 16L20 3L31 8L18 22Z" fill="#3a6ab8" stroke="#1a3a78"/><path d="M7 15.5L20 5L27 8.5L17 19Z" fill="#6a9ae0" opacity=".7"/></svg><svg class="abs" style="left:1386.0px;top:128.3px;overflow:visible" width="32" height="32" viewBox="0 0 32 32"><rect x="3" y="2" width="26" height="28" fill="#f4f4f4" stroke="#4a4a4a" stroke-width="1.6"/><rect x="5.5" y="4.5" width="5.8" height="4.8" fill="#e02020"/><rect x="12.8" y="4.5" width="5.8" height="4.8" fill="#20a020"/><rect x="20.1" y="4.5" width="5.8" height="4.8" fill="#2020e0"/><rect x="5.5" y="10.7" width="5.8" height="4.8" fill="#e020a0"/><rect x="12.8" y="10.7" width="5.8" height="4.8" fill="#e0c020"/><rect x="20.1" y="10.7" width="5.8" height="4.8" fill="#20c0c0"/><rect x="5.5" y="16.9" width="5.8" height="4.8" fill="#a04000"/><rect x="12.8" y="16.9" width="5.8" height="4.8" fill="#2a2a2a"/><rect x="20.1" y="16.9" width="5.8" height="4.8" fill="#e08020"/><rect x="5.5" y="23.1" width="5.8" height="4.8" fill="#80c020"/><rect x="12.8" y="23.1" width="5.8" height="4.8" fill="#c02060"/><rect x="20.1" y="23.1" width="5.8" height="4.8" fill="#2060c0"/></svg><svg class="abs" style="left:1427.0px;top:128.3px;overflow:visible" width="32" height="32" viewBox="0 0 32 32"><rect x="3" y="2" width="26" height="28" fill="#8a4a28" stroke="#4a2410" stroke-width="1.4"/><rect x="7.5" y="6.5" width="17" height="19" fill="#f0f0f0" stroke="#5a3418"/><path transform="translate(5.5,5.5) scale(0.65)" d="M9 6C11 3,14 5,16 5C18 5,21 3,23 6C25 10,23 14,22.5 18C22 23,21.5 28,20 28C18.5 28,18.5 20,16 20C13.5 20,13.5 28,12 28C10.5 28,10 23,9.5 18C9 14,7 10,9 6Z" fill="#c8c8c8" stroke="#7a7a7a" stroke-width="1.54"/></svg><svg class="abs" style="left:1469.7px;top:128.3px;overflow:visible" width="32" height="32" viewBox="0 0 32 32"><rect x="-3" y="-2" width="38" height="36" fill="#f8f8f8"/><rect x="1" y="1" width="30" height="30" rx="4" fill="#2a2a2a"/><path transform="translate(1.3,1.6) scale(0.92)" d="M9 6C11 3,14 5,16 5C18 5,21 3,23 6C25 10,23 14,22.5 18C22 23,21.5 28,20 28C18.5 28,18.5 20,16 20C13.5 20,13.5 28,12 28C10.5 28,10 23,9.5 18C9 14,7 10,9 6Z" fill="#fff" stroke="#fff" stroke-width="0.54"/></svg><svg class="abs" style="left:258.5px;top:127.8px;overflow:visible" width="33" height="33" viewBox="0 0 33 33"><rect x="0" y="0" width="33" height="33" fill="#0a3a8a" stroke="#0a1a3a" stroke-width="1.5"/><rect x="2.5" y="2.5" width="28" height="28" fill="none" stroke="#c8d8f0" stroke-width="1.2"/><path d="M3 30C12 22,14 12,12 3H30V30Z" fill="#1a58b8"/><path d="M14 30L18 8L20 8L21 30Z" fill="#d8d0b0"/><path d="M18 8L23 4" stroke="#e8e8e8" stroke-width="1.3"/><circle cx="11" cy="7" r="1" fill="#fff"/></svg><svg class="abs" style="left:473.2px;top:126.0px;overflow:visible" width="41" height="38" viewBox="0 0 41 38"><rect x="0" y="0" width="41" height="38" fill="#dde7f1" stroke="#0a0a0a" stroke-width="1.7"/><rect x="5.500" y="6" width="30" height="26" fill="#fdfbf4" stroke="#6a6a6a" stroke-width="1.3"/><path d="M6 11.500H35M6 17H35M6 23H35M6 28H35" stroke="#d0604a" stroke-width="1" stroke-dasharray="3 1.5" opacity=".55"/><path d="M6 14H35M6 20H35M6 25.500H35" stroke="#c8a84a" stroke-width="1" stroke-dasharray="2 2" opacity=".6"/></svg><div class="dd" style="left:187px;top:142px"></div><div class="dd" style="left:242px;top:142px"></div><div class="dds" style="left:605.2px;top:153px"></div><div class="dds" style="left:805.5px;top:153px"></div><div class="dds" style="left:1311.3px;top:153px"></div><div class="dds" style="left:1512.5px;top:153px"></div><div class="grip" style="left:621px;top:128px"></div><div class="grip" style="left:822px;top:128px"></div><div class="grip" style="left:1327px;top:128px"></div><div class="sep" style="left:467.5px;top:125px;height:39px"></div><div class="sep" style="left:923.5px;top:125px;height:39px"></div><div class="sep" style="left:974.5px;top:125px;height:39px"></div><div class="sep" style="left:1081px;top:125px;height:39px"></div><div class="sep" style="left:1258px;top:125px;height:39px"></div><div class="abs" style="left:833.5px;top:128px;width:85px;height:33px;background:#fff"></div><div class="abs" style="left:897px;top:130px;width:20px;height:29px;background:#f2f2f2"></div><div class="t" style="left:839.5px;top:136px;font-size:17.3px;color:#111">LT00</div><div class="dd" style="left:903.5px;top:142px"></div><div class="abs" style="left:980px;top:128px;width:93px;height:33px;background:#fff"></div><div class="abs" style="left:1052px;top:130px;width:20px;height:29px;background:#f2f2f2"></div><div class="dd" style="left:1060.5px;top:142px"></div><div id="chart" class="abs"><svg class="abs" style="left:0;top:0" width="1857" height="1549" viewBox="0 0 1857 1549"><defs>
<radialGradient id="cg" cx=".48" cy=".45" r=".65"><stop offset="0" stop-color="#f7eecb"/><stop offset=".6" stop-color="#efe3b6"/><stop offset="1" stop-color="#dccc94"/></radialGradient>
<linearGradient id="rg" x1="0" y1="0" x2="1" y2="0"><stop offset="0" stop-color="#e6bd5c"/><stop offset=".4" stop-color="#f0cb6e"/><stop offset="1" stop-color="#dcaa48"/></linearGradient>
<filter id="fc" filterUnits="userSpaceOnUse" x="0" y="0" width="1857" height="1549" color-interpolation-filters="sRGB"><feGaussianBlur in="SourceAlpha" stdDeviation="5" result="bl"/><feDiffuseLighting in="bl" surfaceScale="7" diffuseConstant="1.12" lighting-color="#ffffff" result="df"><feDistantLight azimuth="235" elevation="62"/></feDiffuseLighting><feComposite in="df" in2="SourceGraphic" operator="arithmetic" k1=".42" k2="0" k3=".56" k4="0" result="lit"/><feGaussianBlur in="SourceAlpha" stdDeviation="9" result="bl2"/><feSpecularLighting in="bl2" surfaceScale="10" specularConstant=".26" specularExponent="30" lighting-color="#ffffff" result="sp"><feDistantLight azimuth="235" elevation="52"/></feSpecularLighting><feComposite in="sp" in2="lit" operator="arithmetic" k1="0" k2="1" k3="1" k4="0" result="sum"/><feComposite in="sum" in2="SourceAlpha" operator="in"/></filter>
<filter id="fr" filterUnits="userSpaceOnUse" x="0" y="0" width="1857" height="1549" color-interpolation-filters="sRGB"><feGaussianBlur in="SourceAlpha" stdDeviation="3.2" result="bl"/><feDiffuseLighting in="bl" surfaceScale="6" diffuseConstant="1.1" lighting-color="#ffffff" result="df"><feDistantLight azimuth="200" elevation="58"/></feDiffuseLighting><feComposite in="df" in2="SourceGraphic" operator="arithmetic" k1=".5" k2="0" k3=".46" k4="0" result="lit"/><feGaussianBlur in="SourceAlpha" stdDeviation="6.5" result="bl2"/><feSpecularLighting in="bl2" surfaceScale="10" specularConstant=".62" specularExponent="22" lighting-color="#fff4d8" result="sp"><feDistantLight azimuth="200" elevation="36"/></feSpecularLighting><feComposite in="sp" in2="lit" operator="arithmetic" k1="0" k2="1" k3="1" k4="0" result="sum"/><feComposite in="sum" in2="SourceAlpha" operator="in"/></filter>
<filter id="b6" filterUnits="userSpaceOnUse" x="0" y="0" width="1857" height="1549"><feGaussianBlur stdDeviation="5"/></filter>
<filter id="b1" filterUnits="userSpaceOnUse" x="0" y="0" width="1857" height="1549"><feGaussianBlur stdDeviation="1.1"/></filter>
</defs><rect x="0" y="331.0" width="1857" height="1.3" fill="#020828" opacity=".24"/><rect x="0" y="351.0" width="1857" height="1.3" fill="#020828" opacity=".24"/><rect x="0" y="372.0" width="1857" height="1.3" fill="#020828" opacity=".24"/><rect x="0" y="392.0" width="1857" height="1.3" fill="#020828" opacity=".24"/><rect x="0" y="411.0" width="1857" height="1.3" fill="#020828" opacity=".24"/><rect x="0" y="431.0" width="1857" height="1.3" fill="#020828" opacity=".24"/><rect x="0" y="451.5" width="1857" height="1.3" fill="#020828" opacity=".24"/><rect x="0" y="472.0" width="1857" height="1.3" fill="#020828" opacity=".24"/><rect x="0" y="1076.0" width="1857" height="1.3" fill="#020828" opacity=".24"/><rect x="0" y="1096.0" width="1857" height="1.3" fill="#020828" opacity=".24"/><rect x="0" y="1117.0" width="1857" height="1.3" fill="#020828" opacity=".24"/><rect x="0" y="1137.0" width="1857" height="1.3" fill="#020828" opacity=".24"/><rect x="0" y="1156.5" width="1857" height="1.3" fill="#020828" opacity=".24"/><rect x="0" y="1176.0" width="1857" height="1.3" fill="#020828" opacity=".24"/><rect x="0" y="1196.5" width="1857" height="1.3" fill="#020828" opacity=".24"/><rect x="0" y="1217.0" width="1857" height="1.3" fill="#020828" opacity=".24"/><rect x="0" y="774" width="1857" height="2" fill="#00020c"/><circle cx="57.9" cy="204.3" r="24.2" fill="none" stroke="#3585d6" stroke-width="1.4"/><text x="57.9" y="212.8" font-family="Liberation Sans" font-weight="bold" font-size="32" fill="#47a6ee" text-anchor="middle" textLength="12.2" lengthAdjust="spacingAndGlyphs">1</text><circle cx="57.9" cy="1340.5" r="24.2" fill="none" stroke="#3585d6" stroke-width="1.4"/><text x="57.9" y="1349.0" font-family="Liberation Sans" font-weight="bold" font-size="32" fill="#47a6ee" text-anchor="middle" textLength="32.3" lengthAdjust="spacingAndGlyphs">32</text><circle cx="173.4" cy="204.3" r="24.2" fill="none" stroke="#3585d6" stroke-width="1.4"/><text x="173.4" y="212.8" font-family="Liberation Sans" font-weight="bold" font-size="32" fill="#47a6ee" text-anchor="middle" textLength="15.2" lengthAdjust="spacingAndGlyphs">2</text><circle cx="173.4" cy="1340.5" r="24.2" fill="none" stroke="#3585d6" stroke-width="1.4"/><text x="173.4" y="1349.0" font-family="Liberation Sans" font-weight="bold" font-size="32" fill="#47a6ee" text-anchor="middle" textLength="32.3" lengthAdjust="spacingAndGlyphs">31</text><circle cx="288.8" cy="204.3" r="24.2" fill="none" stroke="#3585d6" stroke-width="1.4"/><text x="288.8" y="212.8" font-family="Liberation Sans" font-weight="bold" font-size="32" fill="#47a6ee" text-anchor="middle" textLength="15.2" lengthAdjust="spacingAndGlyphs">3</text><circle cx="288.8" cy="1340.5" r="24.2" fill="none" stroke="#3585d6" stroke-width="1.4"/><text x="288.8" y="1349.0" font-family="Liberation Sans" font-weight="bold" font-size="32" fill="#47a6ee" text-anchor="middle" textLength="32.3" lengthAdjust="spacingAndGlyphs">30</text><circle cx="404.3" cy="204.3" r="24.2" fill="none" stroke="#3585d6" stroke-width="1.4"/><text x="404.3" y="212.8" font-family="Liberation Sans" font-weight="bold" font-size="32" fill="#47a6ee" text-anchor="middle" textLength="15.2" lengthAdjust="spacingAndGlyphs">4</text><circle cx="404.3" cy="1340.5" r="24.2" fill="none" stroke="#3585d6" stroke-width="1.4"/><text x="404.3" y="1349.0" font-family="Liberation Sans" font-weight="bold" font-size="32" fill="#47a6ee" text-anchor="middle" textLength="32.3" lengthAdjust="spacingAndGlyphs">29</text><circle cx="519.8" cy="204.3" r="24.2" fill="none" stroke="#3585d6" stroke-width="1.4"/><text x="519.8" y="212.8" font-family="Liberation Sans" font-weight="bold" font-size="32" fill="#47a6ee" text-anchor="middle" textLength="15.2" lengthAdjust="spacingAndGlyphs">5</text><circle cx="519.8" cy="1340.5" r="24.2" fill="none" stroke="#3585d6" stroke-width="1.4"/><text x="519.8" y="1349.0" font-family="Liberation Sans" font-weight="bold" font-size="32" fill="#47a6ee" text-anchor="middle" textLength="32.3" lengthAdjust="spacingAndGlyphs">28</text><circle cx="635.2" cy="204.3" r="24.2" fill="none" stroke="#3585d6" stroke-width="1.4"/><text x="635.2" y="212.8" font-family="Liberation Sans" font-weight="bold" font-size="32" fill="#47a6ee" text-anchor="middle" textLength="15.2" lengthAdjust="spacingAndGlyphs">6</text><circle cx="635.2" cy="1340.5" r="24.2" fill="none" stroke="#3585d6" stroke-width="1.4"/><text x="635.2" y="1349.0" font-family="Liberation Sans" font-weight="bold" font-size="32" fill="#47a6ee" text-anchor="middle" textLength="32.3" lengthAdjust="spacingAndGlyphs">27</text><circle cx="750.7" cy="204.3" r="24.2" fill="none" stroke="#3585d6" stroke-width="1.4"/><text x="750.7" y="212.8" font-family="Liberation Sans" font-weight="bold" font-size="32" fill="#47a6ee" text-anchor="middle" textLength="15.2" lengthAdjust="spacingAndGlyphs">7</text><circle cx="750.7" cy="1340.5" r="24.2" fill="none" stroke="#3585d6" stroke-width="1.4"/><text x="750.7" y="1349.0" font-family="Liberation Sans" font-weight="bold" font-size="32" fill="#47a6ee" text-anchor="middle" textLength="32.3" lengthAdjust="spacingAndGlyphs">26</text><circle cx="866.2" cy="204.3" r="24.2" fill="none" stroke="#3585d6" stroke-width="1.4"/><text x="866.2" y="212.8" font-family="Liberation Sans" font-weight="bold" font-size="32" fill="#47a6ee" text-anchor="middle" textLength="15.2" lengthAdjust="spacingAndGlyphs">8</text><circle cx="866.2" cy="1340.5" r="24.2" fill="none" stroke="#3585d6" stroke-width="1.4"/><text x="866.2" y="1349.0" font-family="Liberation Sans" font-weight="bold" font-size="32" fill="#47a6ee" text-anchor="middle" textLength="32.3" lengthAdjust="spacingAndGlyphs">25</text><circle cx="981.7" cy="204.3" r="24.2" fill="none" stroke="#3585d6" stroke-width="1.4"/><text x="981.7" y="212.8" font-family="Liberation Sans" font-weight="bold" font-size="32" fill="#47a6ee" text-anchor="middle" textLength="15.2" lengthAdjust="spacingAndGlyphs">9</text><circle cx="981.7" cy="1340.5" r="24.2" fill="none" stroke="#3585d6" stroke-width="1.4"/><text x="981.7" y="1349.0" font-family="Liberation Sans" font-weight="bold" font-size="32" fill="#47a6ee" text-anchor="middle" textLength="32.3" lengthAdjust="spacingAndGlyphs">24</text><circle cx="1097.1" cy="204.3" r="24.2" fill="none" stroke="#3585d6" stroke-width="1.4"/><text x="1097.1" y="212.8" font-family="Liberation Sans" font-weight="bold" font-size="32" fill="#47a6ee" text-anchor="middle" textLength="32.3" lengthAdjust="spacingAndGlyphs">10</text><circle cx="1097.1" cy="1340.5" r="24.2" fill="none" stroke="#3585d6" stroke-width="1.4"/><text x="1097.1" y="1349.0" font-family="Liberation Sans" font-weight="bold" font-size="32" fill="#47a6ee" text-anchor="middle" textLength="32.3" lengthAdjust="spacingAndGlyphs">23</text><circle cx="1212.6" cy="204.3" r="24.2" fill="none" stroke="#3585d6" stroke-width="1.4"/><text x="1212.6" y="212.8" font-family="Liberation Sans" font-weight="bold" font-size="32" fill="#47a6ee" text-anchor="middle" textLength="32.3" lengthAdjust="spacingAndGlyphs">11</text><circle cx="1212.6" cy="1340.5" r="24.2" fill="none" stroke="#3585d6" stroke-width="1.4"/><text x="1212.6" y="1349.0" font-family="Liberation Sans" font-weight="bold" font-size="32" fill="#47a6ee" text-anchor="middle" textLength="32.3" lengthAdjust="spacingAndGlyphs">22</text><circle cx="1328.1" cy="204.3" r="24.2" fill="none" stroke="#3585d6" stroke-width="1.4"/><text x="1328.1" y="212.8" font-family="Liberation Sans" font-weight="bold" font-size="32" fill="#47a6ee" text-anchor="middle" textLength="32.3" lengthAdjust="spacingAndGlyphs">12</text><circle cx="1328.1" cy="1340.5" r="24.2" fill="none" stroke="#3585d6" stroke-width="1.4"/><text x="1328.1" y="1349.0" font-family="Liberation Sans" font-weight="bold" font-size="32" fill="#47a6ee" text-anchor="middle" textLength="32.3" lengthAdjust="spacingAndGlyphs">21</text><circle cx="1443.5" cy="204.3" r="24.2" fill="none" stroke="#3585d6" stroke-width="1.4"/><text x="1443.5" y="212.8" font-family="Liberation Sans" font-weight="bold" font-size="32" fill="#47a6ee" text-anchor="middle" textLength="32.3" lengthAdjust="spacingAndGlyphs">13</text><circle cx="1443.5" cy="1340.5" r="24.2" fill="none" stroke="#3585d6" stroke-width="1.4"/><text x="1443.5" y="1349.0" font-family="Liberation Sans" font-weight="bold" font-size="32" fill="#47a6ee" text-anchor="middle" textLength="32.3" lengthAdjust="spacingAndGlyphs">20</text><circle cx="1559.0" cy="204.3" r="24.2" fill="none" stroke="#3585d6" stroke-width="1.4"/><text x="1559.0" y="212.8" font-family="Liberation Sans" font-weight="bold" font-size="32" fill="#47a6ee" text-anchor="middle" textLength="32.3" lengthAdjust="spacingAndGlyphs">14</text><circle cx="1559.0" cy="1340.5" r="24.2" fill="none" stroke="#3585d6" stroke-width="1.4"/><text x="1559.0" y="1349.0" font-family="Liberation Sans" font-weight="bold" font-size="32" fill="#47a6ee" text-anchor="middle" textLength="32.3" lengthAdjust="spacingAndGlyphs">19</text><circle cx="1674.5" cy="204.3" r="24.2" fill="none" stroke="#3585d6" stroke-width="1.4"/><text x="1674.5" y="212.8" font-family="Liberation Sans" font-weight="bold" font-size="32" fill="#47a6ee" text-anchor="middle" textLength="32.3" lengthAdjust="spacingAndGlyphs">15</text><circle cx="1674.5" cy="1340.5" r="24.2" fill="none" stroke="#3585d6" stroke-width="1.4"/><text x="1674.5" y="1349.0" font-family="Liberation Sans" font-weight="bold" font-size="32" fill="#47a6ee" text-anchor="middle" textLength="32.3" lengthAdjust="spacingAndGlyphs">18</text><circle cx="1790.0" cy="204.3" r="24.2" fill="none" stroke="#3585d6" stroke-width="1.4"/><text x="1790.0" y="212.8" font-family="Liberation Sans" font-weight="bold" font-size="32" fill="#47a6ee" text-anchor="middle" textLength="32.3" lengthAdjust="spacingAndGlyphs">16</text><circle cx="1790.0" cy="1340.5" r="24.2" fill="none" stroke="#3585d6" stroke-width="1.4"/><text x="1790.0" y="1349.0" font-family="Liberation Sans" font-weight="bold" font-size="32" fill="#47a6ee" text-anchor="middle" textLength="32.3" lengthAdjust="spacingAndGlyphs">17</text><g filter="url(#fr)" fill="url(#rg)" stroke="#b58c3a" stroke-width=".8"><path d="M23.6 493.3C20.7 487.1 25.6 466.4 26.3 453.4C26.9 440.5 27.8 427.4 27.6 415.7C27.4 404.1 25.6 392.0 24.9 383.4C24.2 374.9 23.6 364.6 23.6 364.6C23.6 364.6 27.8 366.2 30.3 368.6C32.8 371.1 38.4 379.4 38.4 379.4C38.4 379.4 42.4 364.6 42.4 364.6C42.4 364.6 47.6 361.0 50.5 363.3C53.4 365.5 56.5 371.1 59.9 378.1C63.3 385.0 67.5 396.0 70.7 405.0C73.8 413.9 76.3 422.9 78.8 431.9C81.2 440.9 83.5 448.1 85.5 458.8C87.5 469.5 94.2 490.7 90.9 496.0C87.5 501.3 73.1 491.5 65.3 490.6C57.4 489.7 50.7 490.1 43.8 490.6C36.8 491.0 26.5 499.5 23.6 493.3Z"/><path d="M135.3 477.1C132.1 471.8 139.3 450.2 140.7 440.0C142.0 429.7 143.6 424.3 143.4 415.7C143.1 407.2 140.4 396.9 139.3 388.8C138.2 380.8 136.0 372.5 136.6 367.3C137.3 362.1 140.8 357.6 143.4 357.9C145.9 358.1 152.0 368.6 152.0 368.6C152.0 368.6 154.7 353.6 156.8 351.1C159.0 348.7 162.4 350.9 164.9 353.8C167.4 356.7 171.6 368.6 171.6 368.6C171.6 368.6 174.3 359.0 177.0 357.9C179.7 356.7 184.6 357.6 187.8 361.9C190.9 366.2 193.8 375.4 195.9 383.4C197.9 391.5 199.0 401.4 199.9 410.4C200.8 419.3 201.2 426.2 201.2 437.3C201.2 448.4 203.3 470.7 199.9 477.1C196.5 483.5 187.8 476.7 181.0 475.8C174.3 474.9 167.1 471.5 159.5 471.7C151.9 472.0 138.4 482.4 135.3 477.1Z"/><path d="M255.1 477.1C251.3 469.8 257.5 445.7 257.8 431.9C258.0 418.1 256.9 405.4 256.4 394.2C256.0 383.0 255.5 373.0 255.1 364.6C254.6 356.2 253.7 343.6 253.7 343.6C253.7 343.6 263.1 343.1 263.1 343.1C263.1 343.1 267.4 352.3 269.9 359.2C272.3 366.2 278.0 384.8 278.0 384.8C278.0 384.8 280.9 369.5 282.0 361.9C283.1 354.3 284.7 339.0 284.7 339.0C284.7 339.0 294.1 338.2 294.1 338.2C294.1 338.2 299.0 351.7 300.8 359.2C302.6 366.8 303.8 377.4 304.9 383.4C306.0 389.5 307.6 395.6 307.6 395.6C307.6 395.6 309.4 375.9 310.3 367.3C311.2 358.6 312.9 343.6 312.9 343.6C312.9 343.6 321.0 343.6 321.0 343.6C321.0 343.6 326.0 355.3 327.8 361.9C329.5 368.5 331.3 375.4 331.8 383.4C332.2 391.5 331.1 400.9 330.4 410.4C329.8 419.8 328.7 428.4 327.8 440.0C326.9 451.5 328.4 473.6 325.1 479.8C321.7 486.0 315.0 477.8 307.6 477.1C300.2 476.4 289.4 475.8 280.6 475.8C271.9 475.8 258.9 484.4 255.1 477.1Z"/><path d="M384.3 471.7C383.2 464.9 386.3 440.8 387.0 426.5C387.6 412.2 388.0 399.6 388.3 386.1C388.6 372.7 388.9 356.6 388.9 345.8C388.9 334.9 388.3 321.0 388.3 321.0C388.3 321.0 396.4 320.2 396.4 320.2C396.4 320.2 401.1 328.9 403.1 337.7C405.1 346.4 406.5 360.6 408.5 372.7C410.5 384.8 413.2 399.1 415.2 410.4C417.3 421.6 418.8 428.8 420.6 440.0C422.4 451.1 428.2 472.0 426.0 477.1C423.8 482.2 412.5 472.0 407.2 470.4C401.8 468.8 397.5 467.5 393.7 467.7C389.9 467.9 385.4 478.6 384.3 471.7Z"/><path d="M494.3 474.4C492.8 469.6 498.6 449.8 499.7 437.3C500.8 424.8 501.3 412.2 501.1 399.6C500.8 387.0 499.4 374.0 498.4 361.9C497.4 349.8 495.1 326.9 495.1 326.9C495.1 326.9 501.1 321.5 501.1 321.5C501.1 321.5 505.8 325.2 507.8 325.6C509.8 325.9 510.7 323.5 513.2 323.7C515.7 323.9 522.6 326.9 522.6 326.9C522.6 326.9 525.3 341.3 526.6 351.1C528.0 361.0 529.1 373.6 530.7 386.1C532.3 398.7 534.5 411.8 536.1 426.5C537.6 441.2 541.9 467.8 540.1 474.4C538.3 481.1 530.5 467.7 525.3 466.4C520.1 465.0 514.3 465.0 509.1 466.4C504.0 467.7 495.9 479.3 494.3 474.4Z"/><path d="M611.4 471.7C609.4 466.0 614.4 440.8 615.5 426.5C616.6 412.2 617.3 400.5 618.2 386.1C619.1 371.8 620.1 354.7 620.9 340.4C621.6 326.0 622.1 309.6 622.7 300.0C623.4 290.3 624.9 282.5 624.9 282.5C624.9 282.5 634.3 282.5 634.3 282.5C634.3 282.5 639.0 294.8 641.0 305.4C643.1 315.9 644.6 332.3 646.4 345.8C648.2 359.2 650.2 373.6 651.8 386.1C653.4 398.7 654.5 406.9 655.9 421.1C657.2 435.4 661.5 464.6 659.9 471.7C658.3 478.8 651.8 465.5 646.4 463.7C641.0 461.9 633.4 459.6 627.6 461.0C621.8 462.3 613.5 477.5 611.4 471.7Z"/><path d="M732.6 461.0C731.7 454.1 734.6 430.5 735.3 415.7C735.9 401.0 736.5 386.1 736.6 372.7C736.7 359.2 736.0 344.0 735.8 335.0C735.6 326.0 735.3 318.8 735.3 318.8C735.3 318.8 747.4 318.3 747.4 318.3C747.4 318.3 751.0 331.3 752.8 340.4C754.6 349.4 756.3 361.0 758.1 372.7C759.9 384.3 762.0 395.2 763.5 410.4C765.1 425.5 769.1 455.9 767.6 463.7C766.0 471.4 758.6 458.1 754.1 456.9C749.6 455.8 744.2 456.3 740.6 456.9C737.1 457.6 733.5 467.8 732.6 461.0Z"/><path d="M838.9 463.7C836.7 457.0 841.8 430.9 842.9 415.7C844.1 400.6 845.0 386.1 845.6 372.7C846.3 359.2 846.5 344.8 847.0 335.0C847.4 325.2 848.3 314.0 848.3 314.0C848.3 314.0 860.4 313.5 860.4 313.5C860.4 313.5 864.7 329.6 867.2 340.4C869.6 351.1 872.5 365.5 875.2 378.1C877.9 390.6 881.1 401.0 883.3 415.7C885.6 430.5 890.5 459.5 888.7 466.4C886.9 473.2 877.9 458.7 872.5 456.9C867.2 455.1 862.0 454.5 856.4 455.6C850.8 456.7 841.1 470.3 838.9 463.7Z"/><path d="M961.1 466.4C959.3 459.7 965.3 430.5 967.8 415.7C970.3 401.0 973.2 390.6 975.9 378.1C978.6 365.5 981.7 351.0 984.0 340.4C986.2 329.7 989.3 314.0 989.3 314.0C989.3 314.0 1002.8 313.5 1002.8 313.5C1002.8 313.5 1003.4 329.6 1003.6 340.4C1003.8 351.1 1003.6 365.5 1004.1 378.1C1004.7 390.6 1005.7 401.0 1006.8 415.7C1008.0 430.5 1012.7 459.5 1010.9 466.4C1009.1 473.2 1001.4 458.7 996.1 456.9C990.7 455.1 984.4 454.0 978.6 455.6C972.7 457.2 962.9 473.0 961.1 466.4Z"/><path d="M1082.2 461.0C1081.1 454.1 1084.9 429.6 1086.2 415.7C1087.6 401.9 1088.7 389.7 1090.3 378.1C1091.8 366.4 1093.6 355.6 1095.7 345.8C1097.7 335.9 1102.4 318.8 1102.4 318.8C1102.4 318.8 1114.5 317.5 1114.5 317.5C1114.5 317.5 1113.0 331.2 1112.4 340.4C1111.7 349.6 1110.3 361.0 1110.5 372.7C1110.6 384.3 1111.8 395.2 1113.2 410.4C1114.5 425.5 1119.7 455.8 1118.5 463.7C1117.4 471.6 1110.7 458.9 1106.4 457.7C1102.2 456.6 1097.0 456.4 1093.0 456.9C1088.9 457.5 1083.3 467.8 1082.2 461.0Z"/><path d="M1195.3 466.4C1193.0 458.8 1197.1 431.4 1198.0 415.7C1198.9 400.1 1199.3 387.0 1200.6 372.7C1202.0 358.3 1204.0 342.2 1206.0 329.6C1208.0 317.0 1211.2 305.2 1212.8 297.3C1214.3 289.5 1215.5 282.5 1215.5 282.5C1215.5 282.5 1226.2 281.7 1226.2 281.7C1226.2 281.7 1226.4 294.7 1227.0 305.4C1227.7 316.1 1228.8 332.3 1230.3 345.8C1231.7 359.2 1234.1 372.7 1235.6 386.1C1237.2 399.6 1238.8 411.3 1239.7 426.5C1240.6 441.7 1242.6 470.5 1241.0 477.1C1239.5 483.8 1235.2 469.0 1230.3 466.4C1225.3 463.7 1217.2 461.0 1211.4 461.0C1205.6 461.0 1197.5 473.9 1195.3 466.4Z"/><path d="M1305.6 471.7C1302.9 465.5 1309.2 440.8 1311.0 426.5C1312.8 412.2 1314.2 398.7 1316.4 386.1C1318.6 373.6 1321.6 361.9 1324.5 351.1C1327.4 340.4 1333.9 321.5 1333.9 321.5C1333.9 321.5 1339.1 319.5 1340.6 320.2C1342.2 320.9 1343.3 325.6 1343.3 325.6C1343.3 325.6 1346.5 322.1 1348.7 322.1C1350.9 322.1 1356.8 325.6 1356.8 325.6C1356.8 325.6 1355.4 346.9 1355.4 359.2C1355.4 371.6 1356.1 387.5 1356.8 399.6C1357.4 411.7 1358.6 419.0 1359.5 431.9C1360.4 444.8 1364.4 471.4 1362.2 477.1C1359.9 482.9 1351.8 468.6 1346.0 466.4C1340.2 464.1 1333.9 462.8 1327.2 463.7C1320.4 464.6 1308.3 477.9 1305.6 471.7Z"/><path d="M1428.4 471.7C1427.5 465.1 1429.9 440.3 1431.1 426.5C1432.2 412.7 1433.3 400.5 1435.1 388.8C1436.9 377.2 1439.3 367.2 1441.8 356.5C1444.4 345.8 1450.5 324.8 1450.5 324.8C1450.5 324.8 1462.0 328.3 1462.0 328.3C1462.0 328.3 1461.1 346.4 1460.7 356.5C1460.2 366.6 1459.3 377.2 1459.3 388.8C1459.3 400.5 1460.0 412.2 1460.7 426.5C1461.4 440.8 1465.2 467.8 1463.4 474.4C1461.6 481.1 1454.4 467.7 1449.9 466.4C1445.4 465.0 1440.0 465.5 1436.5 466.4C1432.9 467.2 1429.3 478.4 1428.4 471.7Z"/><path d="M1525.3 482.5C1520.8 476.1 1523.7 452.9 1522.6 440.0C1521.5 427.1 1519.5 416.2 1518.6 405.0C1517.7 393.8 1516.3 381.6 1517.2 372.7C1518.1 363.7 1521.0 355.6 1523.9 351.1C1526.9 346.7 1534.7 345.8 1534.7 345.8C1534.7 345.8 1538.3 363.5 1540.1 372.7C1541.9 381.9 1545.5 400.9 1545.5 400.9C1545.5 400.9 1548.2 382.3 1549.5 372.7C1550.9 363.0 1553.5 343.1 1553.5 343.1C1553.5 343.1 1564.3 341.7 1564.3 341.7C1564.3 341.7 1569.5 358.3 1571.0 367.3C1572.6 376.3 1573.7 395.6 1573.7 395.6C1573.7 395.6 1576.0 380.1 1577.8 372.7C1579.6 365.3 1581.4 355.9 1584.5 351.1C1587.6 346.4 1596.6 344.4 1596.6 344.4C1596.6 344.4 1595.9 362.6 1595.3 372.7C1594.6 382.8 1592.8 393.8 1592.6 405.0C1592.4 416.2 1593.0 426.6 1593.9 440.0C1594.8 453.3 1600.9 478.8 1598.0 485.2C1595.0 491.6 1584.5 479.6 1576.4 478.5C1568.4 477.3 1558.0 477.8 1549.5 478.5C1541.0 479.1 1529.8 488.9 1525.3 482.5Z"/><path d="M1649.1 482.5C1645.3 476.1 1647.5 452.9 1647.8 440.0C1648.0 427.1 1649.3 415.3 1650.5 405.0C1651.6 394.7 1652.5 385.0 1654.5 378.1C1656.5 371.1 1659.3 364.8 1662.6 363.3C1665.8 361.7 1673.9 368.6 1673.9 368.6C1673.9 368.6 1677.5 359.7 1680.1 356.5C1682.7 353.4 1687.0 349.8 1689.5 349.8C1692.0 349.8 1693.5 353.2 1694.9 356.5C1696.2 359.9 1697.6 370.0 1697.6 370.0C1697.6 370.0 1705.6 358.8 1708.3 359.2C1711.0 359.7 1713.5 365.0 1713.7 372.7C1713.9 380.3 1710.4 393.8 1709.7 405.0C1709.0 416.2 1708.8 426.6 1709.7 440.0C1710.6 453.3 1717.1 478.6 1715.1 485.2C1713.0 491.8 1705.0 480.9 1697.6 479.8C1690.2 478.7 1678.7 478.0 1670.6 478.5C1662.6 478.9 1652.9 488.9 1649.1 482.5Z"/><path d="M1760.8 496.0C1758.6 488.4 1764.6 462.3 1767.6 448.0C1770.5 433.8 1774.7 421.6 1778.3 410.4C1781.9 399.1 1785.9 388.3 1789.1 380.8C1792.2 373.2 1797.2 365.1 1797.2 365.1C1797.2 365.1 1805.2 371.6 1807.9 372.7C1810.6 373.7 1813.3 371.3 1813.3 371.3C1813.3 371.3 1824.1 365.9 1824.1 365.9C1824.1 365.9 1823.0 384.1 1822.7 394.2C1822.5 404.3 1822.3 415.7 1822.7 426.5C1823.2 437.3 1824.3 446.3 1825.4 458.8C1826.5 471.3 1832.4 495.4 1829.5 501.3C1826.5 507.3 1816.0 496.0 1807.9 494.6C1799.9 493.3 1788.9 493.0 1781.0 493.3C1773.2 493.5 1763.1 503.5 1760.8 496.0Z"/><path d="M30.3 1064.7C33.2 1059.0 37.9 1068.5 43.8 1070.1C49.6 1071.7 57.2 1073.9 65.3 1074.1C73.4 1074.4 88.4 1066.4 92.2 1071.5C96.0 1076.5 90.4 1095.0 88.2 1104.6C85.9 1114.1 83.0 1121.2 78.8 1128.8C74.5 1136.4 68.0 1144.3 62.6 1150.3C57.2 1156.4 51.8 1161.9 46.5 1165.1C41.1 1168.4 36.6 1169.3 30.3 1169.7C24.0 1170.2 8.8 1167.8 8.8 1167.8C8.8 1167.8 9.4 1159.1 11.5 1153.0C13.5 1147.0 18.4 1139.6 20.9 1131.5C23.3 1123.4 24.7 1115.7 26.3 1104.6C27.8 1093.4 27.4 1070.5 30.3 1064.7Z"/><path d="M136.6 1070.1C140.7 1064.6 151.2 1073.5 159.5 1074.1C167.8 1074.8 177.2 1074.6 186.4 1074.1C195.6 1073.7 209.8 1066.4 214.7 1071.5C219.6 1076.5 216.5 1094.1 216.0 1104.6C215.6 1115.0 214.2 1123.9 212.0 1134.2C209.8 1144.5 206.4 1157.1 202.6 1166.5C198.8 1175.9 193.4 1186.0 189.1 1190.7C184.9 1195.4 177.0 1194.7 177.0 1194.7C177.0 1194.7 174.1 1189.1 174.3 1182.6C174.5 1176.1 177.9 1165.6 178.4 1155.7C178.8 1145.8 177.9 1131.3 177.0 1123.4C176.1 1115.6 173.0 1108.6 173.0 1108.6C173.0 1108.6 168.0 1118.2 164.9 1126.1C161.8 1134.0 157.7 1146.3 154.1 1155.7C150.5 1165.1 146.9 1175.4 143.4 1182.6C139.8 1189.8 136.1 1195.9 132.6 1198.8C129.1 1201.7 122.4 1200.1 122.4 1200.1C122.4 1200.1 123.3 1182.0 124.5 1171.9C125.8 1161.8 128.1 1150.3 129.9 1139.6C131.7 1128.8 134.2 1118.8 135.3 1107.3C136.4 1095.7 132.6 1075.6 136.6 1070.1Z"/><path d="M252.4 1064.7C257.1 1058.3 267.0 1067.9 275.3 1068.8C283.6 1069.7 293.4 1069.7 302.2 1070.1C310.9 1070.6 323.4 1065.7 327.8 1071.5C332.1 1077.2 328.6 1094.1 328.6 1104.6C328.6 1115.0 329.0 1123.9 327.8 1134.2C326.5 1144.5 324.4 1156.6 321.0 1166.5C317.7 1176.3 312.1 1187.0 307.6 1193.4C303.1 1199.8 294.1 1204.7 294.1 1204.7C294.1 1204.7 291.4 1201.6 291.4 1196.1C291.4 1190.6 293.9 1181.3 294.1 1171.9C294.3 1162.4 294.1 1149.7 292.8 1139.6C291.4 1129.5 286.0 1111.3 286.0 1111.3C286.0 1111.3 281.1 1121.4 278.0 1128.8C274.8 1136.2 270.8 1146.7 267.2 1155.7C263.6 1164.7 260.0 1175.4 256.4 1182.6C252.8 1189.8 248.6 1196.5 245.7 1198.8C242.7 1201.0 238.9 1196.1 238.9 1196.1C238.9 1196.1 238.5 1181.3 238.9 1171.9C239.4 1162.4 240.3 1150.3 241.6 1139.6C243.0 1128.8 245.2 1119.7 247.0 1107.3C248.8 1094.8 247.7 1071.1 252.4 1064.7Z"/><path d="M385.6 1070.1C387.0 1064.6 389.7 1075.5 393.7 1076.8C397.7 1078.2 404.7 1079.8 409.9 1078.2C415.0 1076.6 422.4 1063.0 424.7 1067.4C426.9 1071.8 424.0 1093.4 423.3 1104.6C422.6 1115.7 422.0 1123.9 420.6 1134.2C419.3 1144.5 417.5 1156.6 415.2 1166.5C413.0 1176.3 409.9 1185.8 407.2 1193.4C404.5 1201.0 402.0 1207.7 399.1 1212.2C396.2 1216.8 389.7 1220.9 389.7 1220.9C389.7 1220.9 388.6 1206.9 388.3 1198.8C388.0 1190.6 388.0 1181.7 387.8 1171.9C387.6 1162.0 387.3 1149.9 387.0 1139.6C386.6 1129.2 385.9 1121.5 385.6 1109.9C385.4 1098.4 384.3 1075.6 385.6 1070.1Z"/><path d="M498.4 1072.8C499.8 1066.6 502.4 1079.4 506.5 1080.9C510.5 1082.3 517.2 1082.5 522.6 1081.4C528.0 1080.3 535.8 1070.3 538.8 1074.1C541.7 1078.0 539.7 1094.6 540.1 1104.6C540.6 1114.6 541.9 1123.9 541.4 1134.2C541.0 1144.5 539.7 1155.7 537.4 1166.5C535.2 1177.2 531.4 1189.4 528.0 1198.8C524.6 1208.2 520.1 1217.8 517.2 1223.0C514.3 1228.2 510.5 1229.7 510.5 1229.7C510.5 1229.7 506.5 1222.3 505.1 1214.9C503.8 1207.5 503.3 1195.6 502.4 1185.3C501.5 1175.0 500.5 1164.2 499.7 1153.0C499.0 1141.8 498.1 1131.4 497.8 1118.0C497.6 1104.7 496.9 1079.0 498.4 1072.8Z"/><path d="M603.4 1084.9C604.4 1080.1 606.5 1092.4 610.1 1094.3C613.7 1096.3 619.7 1096.5 624.9 1096.5C630.1 1096.5 635.9 1097.4 641.0 1094.3C646.2 1091.3 654.1 1074.2 655.9 1078.2C657.6 1082.1 653.4 1105.1 651.8 1118.0C650.2 1130.9 648.7 1142.3 646.4 1155.7C644.2 1169.2 641.0 1184.9 638.4 1198.8C635.7 1212.7 632.9 1227.3 630.3 1239.2C627.7 1251.0 622.7 1270.1 622.7 1270.1C622.7 1270.1 604.7 1268.8 604.7 1268.8C604.7 1268.8 604.7 1250.8 604.7 1239.2C604.7 1227.5 604.7 1212.7 604.7 1198.8C604.7 1184.9 604.8 1168.3 604.7 1155.7C604.6 1143.1 604.1 1135.2 603.9 1123.4C603.7 1111.6 602.3 1089.8 603.4 1084.9Z"/><path d="M726.6 1083.6C727.9 1078.3 732.0 1089.6 735.3 1091.6C738.5 1093.7 742.4 1095.5 746.0 1095.7C749.6 1095.9 752.8 1095.2 756.8 1093.0C760.8 1090.7 768.5 1077.2 770.3 1082.2C772.1 1087.3 768.9 1111.2 767.6 1123.4C766.2 1135.7 764.2 1144.9 762.2 1155.7C760.2 1166.5 757.7 1177.5 755.5 1188.0C753.2 1198.6 748.7 1219.0 748.7 1219.0C748.7 1219.0 743.2 1223.0 740.6 1223.0C738.0 1223.0 733.1 1219.0 733.1 1219.0C733.1 1219.0 732.6 1198.6 732.0 1188.0C731.5 1177.5 730.6 1166.5 729.9 1155.7C729.2 1144.9 728.3 1135.4 727.7 1123.4C727.2 1111.4 725.4 1088.9 726.6 1083.6Z"/><path d="M845.6 1078.2C846.3 1072.7 848.3 1083.1 851.0 1084.9C853.7 1086.7 858.2 1088.7 861.8 1089.0C865.4 1089.2 868.7 1088.5 872.5 1086.3C876.4 1084.0 883.3 1070.2 884.7 1075.5C886.0 1080.8 882.2 1105.6 880.6 1118.0C879.1 1130.5 877.3 1139.6 875.2 1150.3C873.2 1161.1 870.5 1173.2 868.5 1182.6C866.5 1192.0 863.1 1206.9 863.1 1206.9C863.1 1206.9 845.6 1208.2 845.6 1208.2C845.6 1208.2 845.9 1192.3 846.2 1182.6C846.4 1173.0 846.8 1161.1 847.0 1150.3C847.1 1139.6 847.2 1130.0 847.0 1118.0C846.7 1106.0 845.0 1083.7 845.6 1078.2Z"/><path d="M966.5 1078.2C966.9 1073.1 970.5 1085.8 973.2 1087.6C975.9 1089.4 978.8 1089.6 982.6 1089.0C986.4 1088.3 992.5 1085.6 996.1 1083.6C999.7 1081.5 1003.2 1071.1 1004.1 1076.8C1005.0 1082.6 1002.1 1105.8 1001.4 1118.0C1000.8 1130.3 1000.0 1139.6 1000.1 1150.3C1000.2 1161.1 1001.5 1173.0 1002.0 1182.6C1002.4 1192.3 1002.8 1208.2 1002.8 1208.2C1002.8 1208.2 988.0 1209.0 988.0 1209.0C988.0 1209.0 984.6 1192.4 982.6 1182.6C980.6 1172.8 977.9 1161.1 975.9 1150.3C973.9 1139.6 972.1 1130.0 970.5 1118.0C968.9 1106.0 966.0 1083.3 966.5 1078.2Z"/><path d="M1079.5 1083.6C1081.1 1077.4 1086.7 1092.3 1090.3 1094.3C1093.9 1096.4 1097.0 1096.6 1101.0 1095.7C1105.1 1094.8 1110.6 1091.6 1114.5 1089.0C1118.5 1086.3 1123.4 1074.7 1124.7 1079.5C1126.1 1084.4 1123.4 1106.2 1122.6 1118.0C1121.8 1129.8 1121.0 1139.1 1119.9 1150.3C1118.8 1161.5 1117.4 1173.2 1115.9 1185.3C1114.3 1197.4 1110.5 1223.0 1110.5 1223.0C1110.5 1223.0 1106.4 1224.4 1103.7 1220.3C1101.0 1216.3 1097.2 1207.8 1094.3 1198.8C1091.4 1189.8 1088.5 1177.7 1086.2 1166.5C1084.0 1155.3 1082.0 1145.3 1080.9 1131.5C1079.7 1117.7 1077.9 1089.8 1079.5 1083.6Z"/><path d="M1196.6 1078.2C1197.5 1072.4 1200.4 1085.8 1203.3 1089.0C1206.3 1092.1 1209.2 1096.1 1214.1 1097.0C1219.0 1097.9 1227.2 1096.1 1232.9 1094.3C1238.7 1092.5 1246.1 1080.1 1248.6 1086.3C1251.0 1092.5 1248.0 1117.2 1247.8 1131.5C1247.5 1145.7 1247.1 1158.4 1246.9 1171.9C1246.8 1185.3 1246.9 1196.1 1246.9 1212.2C1246.9 1228.4 1246.9 1268.8 1246.9 1268.8C1246.9 1268.8 1231.6 1271.5 1231.6 1271.5C1231.6 1271.5 1225.5 1251.3 1222.2 1239.2C1218.8 1227.0 1214.6 1212.2 1211.4 1198.8C1208.3 1185.3 1205.6 1171.0 1203.3 1158.4C1201.1 1145.8 1199.1 1136.8 1198.0 1123.4C1196.8 1110.0 1195.7 1083.9 1196.6 1078.2Z"/><path d="M1308.3 1072.8C1309.8 1068.6 1312.4 1078.2 1316.4 1079.5C1320.4 1080.9 1326.7 1081.5 1332.5 1080.9C1338.4 1080.2 1347.9 1069.3 1351.4 1075.5C1354.9 1081.7 1353.3 1105.6 1353.5 1118.0C1353.8 1130.5 1353.3 1139.1 1352.7 1150.3C1352.2 1161.5 1351.2 1172.8 1350.0 1185.3C1348.9 1197.9 1346.0 1225.7 1346.0 1225.7C1346.0 1225.7 1341.1 1227.5 1337.9 1223.0C1334.8 1218.5 1330.8 1208.2 1327.2 1198.8C1323.6 1189.4 1319.3 1177.7 1316.4 1166.5C1313.5 1155.3 1311.1 1141.8 1309.7 1131.5C1308.2 1121.2 1308.0 1114.3 1307.8 1104.6C1307.6 1094.8 1306.9 1077.0 1308.3 1072.8Z"/><path d="M1427.0 1071.5C1428.2 1066.8 1431.3 1075.5 1435.1 1076.8C1438.9 1078.2 1444.5 1080.2 1449.9 1079.5C1455.3 1078.9 1464.5 1066.4 1467.4 1072.8C1470.3 1079.2 1467.6 1105.1 1467.4 1118.0C1467.2 1130.9 1466.7 1139.1 1466.1 1150.3C1465.4 1161.5 1464.4 1173.4 1463.4 1185.3C1462.4 1197.2 1460.1 1221.7 1460.1 1221.7C1460.1 1221.7 1455.2 1224.1 1452.6 1220.3C1450.0 1216.5 1447.2 1207.8 1444.5 1198.8C1441.8 1189.8 1438.7 1177.7 1436.5 1166.5C1434.2 1155.3 1432.4 1141.8 1431.1 1131.5C1429.7 1121.2 1429.1 1114.6 1428.4 1104.6C1427.7 1094.6 1425.9 1076.1 1427.0 1071.5Z"/><path d="M1519.9 1071.5C1524.9 1066.6 1540.1 1075.0 1549.5 1075.5C1558.9 1075.9 1568.1 1075.0 1576.4 1074.1C1584.7 1073.2 1594.8 1065.0 1599.3 1070.1C1603.8 1075.2 1602.2 1093.9 1603.3 1104.6C1604.5 1115.2 1605.4 1123.9 1606.0 1134.2C1606.7 1144.5 1607.4 1155.7 1607.4 1166.5C1607.4 1177.2 1606.0 1198.8 1606.0 1198.8C1606.0 1198.8 1601.6 1202.8 1599.3 1200.1C1597.1 1197.4 1595.0 1190.0 1592.6 1182.6C1590.1 1175.2 1587.6 1164.7 1584.5 1155.7C1581.4 1146.7 1577.3 1136.2 1573.7 1128.8C1570.1 1121.4 1563.0 1111.3 1563.0 1111.3C1563.0 1111.3 1557.6 1123.2 1556.2 1131.5C1554.9 1139.8 1554.7 1151.7 1554.9 1161.1C1555.1 1170.5 1557.0 1180.6 1557.6 1188.0C1558.1 1195.4 1558.1 1205.5 1558.1 1205.5C1558.1 1205.5 1548.3 1208.4 1544.1 1205.5C1540.0 1202.6 1536.7 1195.4 1533.4 1188.0C1530.0 1180.6 1526.2 1170.5 1523.9 1161.1C1521.7 1151.7 1520.7 1140.9 1519.9 1131.5C1519.1 1122.1 1519.4 1114.6 1519.4 1104.6C1519.4 1094.6 1514.9 1076.3 1519.9 1071.5Z"/><path d="M1635.7 1070.1C1640.4 1065.5 1653.6 1073.5 1662.6 1074.1C1671.5 1074.8 1681.4 1074.6 1689.5 1074.1C1697.6 1073.7 1706.5 1066.4 1711.0 1071.5C1715.5 1076.5 1714.6 1094.1 1716.4 1104.6C1718.2 1115.0 1720.5 1123.9 1721.8 1134.2C1723.0 1144.5 1723.7 1155.3 1723.9 1166.5C1724.2 1177.7 1723.1 1201.5 1723.1 1201.5C1723.1 1201.5 1716.6 1204.6 1713.7 1201.5C1710.8 1198.3 1708.3 1190.3 1705.6 1182.6C1702.9 1175.0 1700.7 1164.7 1697.6 1155.7C1694.4 1146.7 1690.2 1136.4 1686.8 1128.8C1683.4 1121.2 1677.4 1109.9 1677.4 1109.9C1677.4 1109.9 1671.8 1123.0 1670.6 1131.5C1669.5 1140.0 1670.2 1152.1 1670.6 1161.1C1671.1 1170.1 1673.0 1179.0 1673.3 1185.3C1673.7 1191.6 1672.8 1198.8 1672.8 1198.8C1672.8 1198.8 1666.1 1199.7 1662.6 1196.1C1659.1 1192.5 1655.2 1184.9 1651.8 1177.2C1648.4 1169.6 1644.8 1159.3 1642.4 1150.3C1639.9 1141.4 1638.3 1131.5 1637.0 1123.4C1635.7 1115.3 1634.5 1110.8 1634.3 1101.9C1634.1 1093.0 1630.9 1074.7 1635.7 1070.1Z"/><path d="M1759.5 1066.1C1761.7 1059.4 1773.8 1067.4 1781.0 1067.4C1788.2 1067.4 1795.6 1067.0 1802.5 1066.1C1809.5 1065.2 1818.7 1057.0 1822.7 1062.0C1826.8 1067.1 1825.0 1086.3 1826.8 1096.5C1828.6 1106.7 1831.3 1114.4 1833.5 1123.4C1835.7 1132.4 1838.7 1143.4 1840.2 1150.3C1841.8 1157.3 1842.9 1165.1 1842.9 1165.1C1842.9 1165.1 1832.4 1169.2 1829.5 1170.5C1826.5 1171.9 1828.6 1173.7 1825.4 1173.2C1822.3 1172.8 1815.8 1171.2 1810.6 1167.8C1805.5 1164.5 1799.9 1159.1 1794.5 1153.0C1789.1 1147.0 1782.8 1139.1 1778.3 1131.5C1773.8 1123.9 1770.7 1118.2 1767.6 1107.3C1764.4 1096.4 1757.2 1072.7 1759.5 1066.1Z"/></g><g filter="url(#fc)" fill="url(#cg)" stroke="#cdbf88" stroke-width=".8"><path d="M23.6 480.3C27.4 477.7 36.8 477.9 43.8 477.7C50.7 477.4 57.4 478.3 65.3 479.0C73.1 479.7 85.7 478.3 90.9 481.7C96.0 485.1 95.0 493.6 96.3 499.2C97.5 504.8 98.6 510.0 98.1 515.3C97.7 520.7 96.8 527.9 93.6 531.5C90.3 535.1 83.5 536.4 78.8 536.9C74.0 537.3 69.1 535.1 65.3 534.2C61.5 533.3 59.0 531.0 55.9 531.5C52.7 531.9 50.3 536.0 46.5 536.9C42.6 537.8 36.8 537.8 33.0 536.9C29.2 536.0 25.7 535.5 23.6 531.5C21.4 527.5 20.5 518.9 20.1 512.7C19.6 506.4 20.3 499.2 20.9 493.8C21.5 488.4 19.8 483.0 23.6 480.3Z"/><path d="M135.3 465.5C138.3 462.6 143.8 460.8 148.7 460.2C153.7 459.5 158.6 461.1 164.9 461.5C171.2 462.0 180.1 462.0 186.4 462.9C192.7 463.7 198.3 463.5 202.6 466.9C206.8 470.3 209.5 477.2 212.0 483.0C214.5 488.9 217.2 495.6 217.4 501.9C217.6 508.2 215.8 515.6 213.3 520.7C210.9 525.9 207.1 530.6 202.6 532.8C198.1 535.1 191.4 534.6 186.4 534.2C181.5 533.7 177.5 530.6 173.0 530.1C168.5 529.7 164.4 531.5 159.5 531.5C154.6 531.5 147.8 531.9 143.4 530.1C138.9 528.4 134.8 525.9 132.6 520.7C130.3 515.6 130.3 506.4 129.9 499.2C129.5 492.0 129.5 483.3 130.4 477.7C131.3 472.0 132.2 468.5 135.3 465.5Z"/><path d="M255.1 464.2C261.8 461.2 271.9 462.3 280.6 462.3C289.4 462.3 300.2 463.4 307.6 464.2C315.0 465.0 320.6 464.2 325.1 466.9C329.5 469.6 332.4 475.0 334.5 480.3C336.6 485.7 337.7 492.5 337.7 499.2C337.7 505.9 336.4 514.7 334.5 520.7C332.6 526.8 330.9 532.4 326.4 535.5C321.9 538.7 313.8 539.3 307.6 539.6C301.3 539.8 294.6 536.7 288.7 536.9C282.9 537.1 278.0 540.9 272.6 540.9C267.2 540.9 261.1 539.8 256.4 536.9C251.7 534.0 247.2 529.3 244.3 523.4C241.4 517.6 239.6 509.1 238.9 501.9C238.2 494.7 237.6 486.6 240.3 480.3C243.0 474.1 248.3 467.2 255.1 464.2Z"/><path d="M384.3 460.2C386.7 455.9 389.4 455.2 393.7 454.8C398.0 454.3 404.5 455.7 409.9 457.5C415.2 459.3 422.2 461.7 426.0 465.5C429.8 469.4 431.2 474.7 432.7 480.3C434.3 486.0 435.4 491.1 435.4 499.2C435.4 507.3 432.7 528.8 432.7 528.8C432.7 528.8 417.5 532.4 409.9 534.2C402.2 536.0 387.0 539.6 387.0 539.6C387.0 539.6 380.5 533.5 377.6 530.1C374.6 526.8 370.1 524.1 369.5 519.4C368.8 514.7 371.9 508.4 373.5 501.9C375.1 495.4 377.1 487.3 378.9 480.3C380.7 473.4 381.8 464.4 384.3 460.2Z"/><path d="M24.9 567.8C26.9 565.1 27.6 566.3 33.0 566.5C38.4 566.7 48.2 568.1 57.2 569.2C66.2 570.3 81.0 570.1 86.8 573.2C92.7 576.4 91.2 582.4 92.2 588.0C93.2 593.6 93.9 600.6 92.8 606.9C91.6 613.1 88.0 619.0 85.5 625.7C82.9 632.4 83.0 643.7 77.4 647.2C71.8 650.8 60.6 648.1 51.8 647.2C43.1 646.3 30.5 645.0 24.9 641.9C19.3 638.7 19.4 634.2 18.2 628.4C16.9 622.6 16.9 614.5 17.4 606.9C17.8 599.2 19.6 589.1 20.9 582.6C22.1 576.1 22.9 570.5 24.9 567.8Z"/><path d="M148.7 561.1C153.7 556.8 158.6 555.0 164.9 554.4C171.2 553.7 179.3 555.9 186.4 557.1C193.6 558.2 202.8 557.7 208.0 561.1C213.1 564.5 216.0 570.5 217.4 577.3C218.7 584.0 216.5 593.4 216.0 601.5C215.6 609.6 216.5 619.0 214.7 625.7C212.9 632.4 210.4 638.3 205.3 641.9C200.1 645.4 189.6 646.6 183.7 647.2C177.9 647.9 174.8 645.4 170.3 645.9C165.8 646.3 161.8 650.6 156.8 649.9C151.9 649.3 144.9 645.9 140.7 641.9C136.4 637.8 133.0 632.0 131.2 625.7C129.5 619.4 129.2 611.8 129.9 604.2C130.6 596.5 132.1 587.1 135.3 579.9C138.4 572.8 143.8 565.4 148.7 561.1Z"/><path d="M267.2 563.8C273.5 560.9 282.4 558.0 288.7 557.1C295.0 556.2 299.0 557.3 304.9 558.4C310.7 559.5 318.8 560.2 323.7 563.8C328.7 567.4 333.1 573.2 334.5 579.9C335.8 586.7 331.6 596.5 331.8 604.2C332.0 611.8 336.5 619.4 335.8 625.7C335.2 632.0 333.4 638.3 327.8 641.9C322.1 645.4 310.5 645.2 302.2 647.2C293.9 649.3 285.1 652.6 278.0 654.0C270.8 655.3 264.3 657.3 259.1 655.3C254.0 653.3 249.7 647.7 247.0 641.9C244.3 636.0 243.4 628.4 243.0 620.3C242.5 612.3 243.0 601.0 244.3 593.4C245.7 585.8 247.2 579.5 251.0 574.6C254.8 569.6 260.9 566.7 267.2 563.8Z"/><path d="M374.9 563.8C379.1 561.8 386.5 560.0 393.7 559.8C400.9 559.5 411.1 561.3 417.9 562.5C424.7 563.6 431.8 562.2 434.6 566.5C437.4 570.8 434.9 580.4 434.6 588.0C434.3 595.7 433.7 605.1 432.7 612.3C431.7 619.4 431.2 626.4 428.7 631.1C426.2 635.8 422.9 638.9 417.9 640.5C413.0 642.1 405.4 641.9 399.1 640.5C392.8 639.2 385.2 636.7 380.2 632.4C375.3 628.2 371.7 622.3 369.5 614.9C367.2 607.5 367.0 595.2 366.8 588.0C366.6 580.8 366.8 575.9 368.1 571.9C369.5 567.8 370.6 565.8 374.9 563.8Z"/><path d="M16.8 687.6C19.0 683.8 25.4 682.5 30.3 680.9C35.2 679.3 40.6 677.8 46.5 678.2C52.3 678.6 58.6 682.5 65.3 683.6C72.0 684.7 83.0 682.0 86.8 684.9C90.6 687.8 88.2 695.7 88.2 701.1C88.2 706.5 89.3 712.3 86.8 717.2C84.4 722.2 79.2 728.0 73.4 730.7C67.5 733.4 58.6 733.2 51.8 733.4C45.1 733.6 37.9 734.3 33.0 732.0C28.1 729.8 24.8 724.6 22.2 719.9C19.6 715.2 18.3 709.2 17.4 703.8C16.5 698.4 14.7 691.4 16.8 687.6Z"/><path d="M135.3 672.0C138.8 669.5 147.4 672.0 151.4 672.8C155.5 673.6 156.4 676.4 159.5 676.9C162.7 677.3 165.8 676.2 170.3 675.5C174.8 674.8 181.0 673.4 186.4 672.8C191.8 672.2 198.8 670.0 202.6 672.0C206.4 674.0 208.2 679.2 209.3 684.9C210.4 690.7 210.0 699.3 209.3 706.5C208.6 713.6 209.1 724.3 205.3 728.0C201.5 731.7 194.1 728.4 186.4 728.5C178.8 728.6 167.6 728.5 159.5 728.5C151.4 728.5 142.7 731.8 138.0 728.5C133.3 725.3 132.5 716.0 131.2 709.2C130.0 702.3 129.8 693.8 130.4 687.6C131.1 681.4 131.8 674.5 135.3 672.0Z"/><path d="M247.0 679.5C250.1 676.2 256.6 673.5 261.8 672.8C267.0 672.1 273.5 674.6 278.0 675.5C282.4 676.4 284.7 678.4 288.7 678.2C292.8 678.0 297.2 675.1 302.2 674.2C307.1 673.3 313.6 671.5 318.3 672.8C323.0 674.2 327.3 677.5 330.4 682.2C333.6 686.9 337.0 694.4 337.2 701.1C337.4 707.8 335.4 717.5 331.8 722.6C328.2 727.8 322.8 730.9 315.6 732.0C308.5 733.2 296.8 729.3 288.7 729.3C280.6 729.3 273.5 732.3 267.2 732.0C260.9 731.8 254.8 731.4 251.0 728.0C247.2 724.6 245.7 717.7 244.3 711.8C243.0 706.0 242.5 698.4 243.0 693.0C243.4 687.6 243.9 682.9 247.0 679.5Z"/><path d="M369.5 675.5C369.5 675.5 380.7 666.5 385.6 663.4C390.6 660.3 393.7 657.1 399.1 656.7C404.5 656.2 412.5 658.7 417.9 660.7C423.3 662.7 428.8 663.8 431.4 668.8C434.0 673.7 433.5 682.2 433.5 690.3C433.5 698.4 433.5 709.6 431.4 717.2C429.2 724.9 425.6 732.5 420.6 736.1C415.7 739.7 407.2 739.2 401.8 738.8C396.4 738.3 391.5 737.0 388.3 733.4C385.2 729.8 384.7 723.5 382.9 717.2C381.1 711.0 379.8 702.7 377.6 695.7C375.3 688.7 369.5 675.5 369.5 675.5Z"/><path d="M494.3 462.9C497.9 459.0 502.6 456.1 507.8 454.8C513.0 453.4 519.9 453.2 525.3 454.8C530.7 456.3 536.5 459.0 540.1 464.2C543.7 469.4 545.0 478.6 546.8 485.7C548.6 492.9 550.6 500.8 550.9 507.3C551.1 513.8 551.1 520.3 548.2 524.8C545.3 529.3 539.4 532.2 533.4 534.2C527.3 536.2 518.1 537.3 511.8 536.9C505.6 536.4 500.2 535.1 495.7 531.5C491.2 527.9 487.1 521.2 484.9 515.3C482.8 509.5 482.5 502.8 482.8 496.5C483.0 490.2 484.3 483.3 486.3 477.7C488.2 472.0 490.8 466.7 494.3 462.9Z"/><path d="M610.1 460.2C613.2 455.9 618.8 451.0 624.9 449.4C631.0 447.8 640.6 448.5 646.4 450.7C652.3 453.0 656.7 457.0 659.9 462.9C663.0 468.7 664.2 476.1 665.3 485.7C666.4 495.4 666.6 520.7 666.6 520.7C666.6 520.7 651.6 531.3 646.4 534.2C641.3 537.1 635.7 538.2 635.7 538.2C635.7 538.2 625.6 534.2 619.5 530.1C613.5 526.1 599.3 514.0 599.3 514.0C599.3 514.0 600.9 500.3 602.0 493.8C603.1 487.3 604.7 480.6 606.1 475.0C607.4 469.4 606.9 464.4 610.1 460.2Z"/><path d="M731.2 450.7C734.1 443.9 736.6 445.8 740.6 444.8C744.7 443.8 751.0 443.6 755.5 444.8C759.9 446.0 764.4 446.2 767.6 452.1C770.7 458.0 772.1 468.5 774.3 480.3C776.5 492.2 781.0 523.4 781.0 523.4C781.0 523.4 772.9 528.8 767.6 530.1C762.2 531.5 755.5 532.2 748.7 531.5C742.0 530.8 732.5 528.4 727.2 526.1C721.9 523.9 717.0 518.0 717.0 518.0C717.0 518.0 720.8 496.9 723.1 485.7C725.5 474.5 728.3 457.6 731.2 450.7Z"/><path d="M837.6 453.4C841.1 447.8 847.9 445.4 853.7 444.0C859.5 442.6 866.7 443.0 872.5 444.8C878.4 446.6 884.9 448.9 888.7 454.8C892.5 460.7 893.6 471.6 895.4 480.3C897.2 489.1 898.8 496.7 899.5 507.3C900.1 517.8 899.5 543.6 899.5 543.6C899.5 543.6 886.5 545.4 877.9 545.0C869.4 544.5 857.1 543.2 848.3 540.9C839.6 538.7 825.4 531.5 825.4 531.5C825.4 531.5 825.7 516.2 826.8 507.3C827.9 498.3 830.4 486.6 832.2 477.7C834.0 468.7 834.0 459.0 837.6 453.4Z"/><path d="M501.1 559.8C505.3 555.7 511.4 553.9 517.2 553.0C523.1 552.1 530.5 551.2 536.1 554.4C541.7 557.5 548.2 564.9 550.9 571.9C553.6 578.8 552.9 588.5 552.2 596.1C551.5 603.7 548.2 611.6 546.8 617.6C545.5 623.7 547.7 629.7 544.1 632.4C540.6 635.1 532.0 634.2 525.3 633.8C518.6 633.3 509.4 631.5 503.8 629.7C498.2 628.0 493.9 627.7 491.6 623.0C489.4 618.3 490.3 609.1 490.3 601.5C490.3 593.9 489.9 584.2 491.6 577.3C493.4 570.3 496.8 563.8 501.1 559.8Z"/><path d="M491.6 676.9C494.1 671.5 498.6 666.8 503.8 663.4C508.9 660.0 516.3 656.7 522.6 656.7C528.9 656.7 536.5 660.0 541.4 663.4C546.4 666.8 550.2 671.5 552.2 676.9C554.2 682.2 554.5 689.0 553.6 695.7C552.7 702.4 549.3 711.0 546.8 717.2C544.4 723.5 538.8 733.4 538.8 733.4C538.8 733.4 526.2 733.9 519.9 733.9C513.6 733.9 501.1 733.4 501.1 733.4C501.1 733.4 496.4 720.8 494.3 714.5C492.3 708.3 489.4 702.0 489.0 695.7C488.5 689.4 489.2 682.2 491.6 676.9Z"/><path d="M606.1 652.6C608.5 647.2 614.8 643.0 619.5 639.2C624.2 635.4 628.9 630.0 634.3 629.7C639.7 629.5 646.7 634.0 651.8 637.8C657.0 641.6 662.4 647.5 665.3 652.6C668.2 657.8 670.2 662.5 669.3 668.8C668.4 675.1 662.8 682.2 659.9 690.3C657.0 698.4 655.0 710.7 651.8 717.2C648.7 723.7 645.1 727.3 641.0 729.3C637.0 731.4 631.2 732.3 627.6 729.3C624.0 726.4 622.2 718.4 619.5 711.8C616.8 705.3 613.9 697.0 611.4 690.3C609.0 683.6 605.6 677.8 604.7 671.5C603.8 665.2 603.6 658.0 606.1 652.6Z"/><path d="M724.5 652.6C725.6 648.6 727.6 646.1 732.6 644.6C737.5 643.0 746.5 643.2 754.1 643.2C761.7 643.2 778.3 644.6 778.3 644.6C778.3 644.6 779.5 655.8 778.3 663.4C777.2 671.0 774.3 681.3 771.6 690.3C768.9 699.3 764.6 710.7 762.2 717.2C759.7 723.7 759.7 727.3 756.8 729.3C753.9 731.4 747.6 732.3 744.7 729.3C741.8 726.4 741.5 718.8 739.3 711.8C737.1 704.9 733.5 694.8 731.2 687.6C729.0 680.4 727.0 674.6 725.8 668.8C724.7 662.9 723.4 656.7 724.5 652.6Z"/><path d="M830.8 644.6C830.8 644.6 848.5 644.8 856.4 644.6C864.2 644.3 870.8 643.4 877.9 643.2C885.1 643.0 899.5 643.2 899.5 643.2C899.5 643.2 902.4 653.3 902.2 660.7C901.9 668.1 900.4 678.2 898.1 687.6C895.9 697.0 891.2 709.6 888.7 717.2C886.2 724.9 886.9 730.3 883.3 733.4C879.7 736.4 872.5 735.8 867.2 735.5C861.8 735.3 855.0 736.4 851.0 732.0C847.0 727.6 845.6 717.5 842.9 709.2C840.2 700.9 836.9 690.3 834.9 682.2C832.8 674.2 831.5 667.0 830.8 660.7C830.1 654.4 830.8 644.6 830.8 644.6Z"/><path d="M959.7 454.8C963.5 448.7 971.2 445.7 977.2 444.0C983.3 442.3 990.2 443.0 996.1 444.8C1001.9 446.6 1008.4 448.9 1012.2 454.8C1016.0 460.7 1016.9 471.6 1018.9 480.3C1021.0 489.1 1023.4 498.3 1024.3 507.3C1025.2 516.2 1024.3 534.2 1024.3 534.2C1024.3 534.2 1007.5 539.3 998.8 540.9C990.0 542.5 979.9 543.4 971.8 543.6C963.8 543.8 950.3 542.3 950.3 542.3C950.3 542.3 949.6 517.6 950.3 507.3C951.0 496.9 952.8 489.1 954.3 480.3C955.9 471.6 955.9 460.8 959.7 454.8Z"/><path d="M1082.2 450.7C1085.1 444.8 1088.7 445.7 1093.0 444.8C1097.2 443.9 1103.4 443.9 1107.8 445.4C1112.2 446.8 1116.2 446.7 1119.4 453.4C1122.5 460.2 1124.3 475.0 1126.6 485.7C1129.0 496.5 1132.5 511.5 1133.3 518.0C1134.2 524.5 1132.0 524.8 1132.0 524.8C1132.0 524.8 1114.7 529.3 1106.4 530.1C1098.1 531.0 1088.7 530.6 1082.2 530.1C1075.7 529.7 1067.4 527.5 1067.4 527.5C1067.4 527.5 1067.4 520.5 1068.7 512.7C1070.1 504.8 1073.2 490.7 1075.5 480.3C1077.7 470.0 1079.3 456.7 1082.2 450.7Z"/><path d="M1195.3 456.1C1199.1 451.9 1205.6 449.6 1211.4 449.4C1217.2 449.2 1225.3 452.1 1230.3 454.8C1235.2 457.5 1238.1 459.9 1241.0 465.5C1243.9 471.2 1245.7 480.6 1247.8 488.4C1249.8 496.3 1253.1 512.7 1253.1 512.7C1253.1 512.7 1242.6 524.3 1235.6 528.8C1228.7 533.3 1211.4 539.6 1211.4 539.6C1211.4 539.6 1202.7 534.2 1198.0 531.5C1193.2 528.8 1183.1 523.4 1183.1 523.4C1183.1 523.4 1182.3 507.3 1183.1 499.2C1184.0 491.1 1186.5 482.1 1188.5 475.0C1190.6 467.8 1191.4 460.4 1195.3 456.1Z"/><path d="M1304.3 460.2C1307.1 456.3 1313.5 453.4 1319.1 452.1C1324.7 450.7 1332.1 451.2 1337.9 452.1C1343.8 453.0 1350.0 454.6 1354.1 457.5C1358.1 460.4 1360.1 463.5 1362.2 469.6C1364.2 475.6 1365.7 486.2 1366.2 493.8C1366.6 501.4 1367.8 509.5 1364.8 515.3C1361.9 521.2 1354.1 525.9 1348.7 528.8C1343.3 531.7 1338.4 533.1 1332.5 532.8C1326.7 532.6 1319.1 530.1 1313.7 527.5C1308.3 524.8 1302.5 522.3 1300.2 516.7C1298.0 511.1 1299.9 500.8 1300.2 493.8C1300.6 486.9 1301.7 480.6 1302.4 475.0C1303.1 469.4 1301.5 464.0 1304.3 460.2Z"/><path d="M1316.4 557.1C1320.4 554.2 1324.9 554.4 1329.9 554.4C1334.8 554.4 1342.0 555.0 1346.0 557.1C1350.0 559.1 1351.8 561.3 1354.1 566.5C1356.3 571.6 1358.6 580.4 1359.5 588.0C1360.4 595.7 1360.1 606.0 1359.5 612.3C1358.8 618.5 1359.0 622.3 1355.4 625.7C1351.8 629.1 1343.5 631.3 1337.9 632.4C1332.3 633.6 1327.2 632.7 1321.8 632.4C1316.4 632.2 1308.5 634.5 1305.6 631.1C1302.7 627.7 1305.0 618.5 1304.3 612.3C1303.6 606.0 1301.4 600.1 1301.6 593.4C1301.8 586.7 1303.2 577.9 1305.6 571.9C1308.1 565.8 1312.4 560.0 1316.4 557.1Z"/><path d="M951.6 643.2C951.6 643.2 964.0 641.9 971.8 641.9C979.7 641.9 990.7 642.8 998.8 643.2C1006.8 643.7 1020.3 644.6 1020.3 644.6C1020.3 644.6 1022.3 655.8 1021.6 663.4C1021.0 671.0 1018.7 681.3 1016.3 690.3C1013.8 699.3 1010.2 710.3 1006.8 717.2C1003.5 724.2 1000.6 729.1 996.1 732.0C991.6 735.0 984.8 735.0 979.9 734.7C975.0 734.5 969.6 734.5 966.5 730.7C963.3 726.9 963.3 719.0 961.1 711.8C958.8 704.7 955.2 695.7 953.0 687.6C950.8 679.5 947.8 670.8 947.6 663.4C947.4 656.0 951.6 643.2 951.6 643.2Z"/><path d="M1071.4 644.6C1071.4 644.6 1083.5 641.0 1090.3 640.5C1097.0 640.1 1106.0 639.8 1111.8 641.9C1117.6 643.9 1123.3 647.7 1125.3 652.6C1127.3 657.6 1125.0 664.3 1123.9 671.5C1122.8 678.6 1120.8 687.6 1118.5 695.7C1116.3 703.8 1113.8 714.8 1110.5 719.9C1107.1 725.1 1102.2 726.2 1098.4 726.7C1094.5 727.1 1090.3 726.0 1087.6 722.6C1084.9 719.3 1084.0 712.7 1082.2 706.5C1080.4 700.2 1078.5 692.1 1076.8 684.9C1075.1 677.8 1072.9 670.1 1072.0 663.4C1071.1 656.7 1071.4 644.6 1071.4 644.6Z"/><path d="M1189.9 644.6C1194.4 638.9 1200.6 631.3 1206.0 629.7C1211.4 628.2 1217.2 633.3 1222.2 635.1C1227.1 636.9 1231.6 637.6 1235.6 640.5C1239.7 643.4 1244.8 647.5 1246.4 652.6C1248.0 657.8 1246.6 665.2 1245.1 671.5C1243.5 677.8 1239.5 683.6 1237.0 690.3C1234.5 697.0 1233.2 705.8 1230.3 711.8C1227.3 717.9 1223.3 723.7 1219.5 726.7C1215.7 729.6 1211.0 730.5 1207.4 729.3C1203.8 728.2 1200.4 725.1 1198.0 719.9C1195.5 714.8 1195.0 705.1 1192.6 698.4C1190.1 691.7 1185.4 685.4 1183.1 679.5C1180.9 673.7 1178.0 669.2 1179.1 663.4C1180.2 657.6 1185.4 650.2 1189.9 644.6Z"/><path d="M1300.2 671.5C1302.8 666.1 1308.3 662.9 1313.7 660.7C1319.1 658.5 1326.7 658.0 1332.5 658.0C1338.4 658.0 1344.2 658.5 1348.7 660.7C1353.2 662.9 1357.7 666.1 1359.5 671.5C1361.3 676.9 1360.4 685.4 1359.5 693.0C1358.6 700.6 1356.1 710.3 1354.1 717.2C1352.1 724.2 1347.4 734.7 1347.4 734.7C1347.4 734.7 1335.7 735.5 1329.9 735.5C1324.0 735.5 1312.4 734.7 1312.4 734.7C1312.4 734.7 1308.0 724.2 1305.6 717.2C1303.3 710.3 1299.0 700.6 1298.1 693.0C1297.2 685.4 1297.6 676.9 1300.2 671.5Z"/><path d="M1427.0 460.2C1429.9 456.1 1433.8 454.3 1437.8 453.4C1441.8 452.5 1446.8 453.2 1451.3 454.8C1455.7 456.3 1461.1 458.1 1464.7 462.9C1468.3 467.6 1470.1 473.8 1472.8 483.0C1475.5 492.2 1480.9 518.0 1480.9 518.0C1480.9 518.0 1462.0 536.9 1462.0 536.9C1462.0 536.9 1449.2 534.2 1441.8 531.5C1434.4 528.8 1417.6 520.7 1417.6 520.7C1417.6 520.7 1415.8 506.4 1416.3 499.2C1416.7 492.0 1418.5 484.2 1420.3 477.7C1422.1 471.2 1424.1 464.2 1427.0 460.2Z"/><path d="M1523.9 470.9C1529.3 468.1 1540.8 467.1 1549.5 466.4C1558.3 465.6 1567.9 465.6 1576.4 466.4C1585.0 467.1 1595.3 468.1 1600.7 470.9C1606.0 473.7 1606.9 477.9 1608.7 483.0C1610.5 488.2 1611.6 495.2 1611.4 501.9C1611.2 508.6 1609.6 516.7 1607.4 523.4C1605.1 530.1 1602.2 538.9 1598.0 542.3C1593.7 545.6 1587.2 544.5 1581.8 543.6C1576.4 542.7 1571.0 537.1 1565.7 536.9C1560.3 536.7 1555.8 542.0 1549.5 542.3C1543.2 542.5 1533.4 541.4 1528.0 538.2C1522.6 535.1 1519.7 529.5 1517.2 523.4C1514.7 517.4 1513.2 508.6 1513.2 501.9C1513.2 495.2 1515.4 488.2 1517.2 483.0C1519.0 477.9 1518.6 473.7 1523.9 470.9Z"/><path d="M1643.7 473.6C1648.7 468.2 1659.0 467.8 1668.0 466.9C1676.9 466.0 1689.3 467.1 1697.6 468.2C1705.9 469.4 1714.4 468.9 1717.8 473.6C1721.1 478.3 1718.2 488.2 1717.8 496.5C1717.3 504.8 1716.6 517.1 1715.1 523.4C1713.5 529.7 1712.6 532.4 1708.3 534.2C1704.1 536.0 1694.6 534.9 1689.5 534.2C1684.3 533.5 1681.0 529.9 1677.4 530.1C1673.8 530.4 1673.1 535.1 1668.0 535.5C1662.8 536.0 1651.1 534.9 1646.4 532.8C1641.7 530.8 1641.0 529.0 1639.7 523.4C1638.3 517.8 1637.7 507.5 1638.3 499.2C1639.0 490.9 1638.8 479.0 1643.7 473.6Z"/><path d="M1752.7 487.1C1757.2 483.5 1769.1 481.0 1778.3 480.3C1787.5 479.7 1799.6 481.7 1807.9 483.0C1816.2 484.4 1824.1 484.4 1828.1 488.4C1832.2 492.5 1831.9 500.5 1832.2 507.3C1832.4 514.0 1831.7 523.6 1829.5 528.8C1827.2 534.0 1823.2 536.4 1818.7 538.2C1814.2 540.0 1807.5 540.5 1802.5 539.6C1797.6 538.7 1793.6 533.3 1789.1 532.8C1784.6 532.4 1780.6 536.7 1775.6 536.9C1770.7 537.1 1763.5 536.9 1759.5 534.2C1755.4 531.5 1752.7 526.1 1751.4 520.7C1750.1 515.3 1751.2 507.5 1751.4 501.9C1751.6 496.3 1748.3 490.7 1752.7 487.1Z"/><path d="M1423.0 561.1C1427.9 558.0 1435.1 558.6 1441.8 558.4C1448.6 558.2 1456.9 557.5 1463.4 559.8C1469.9 562.0 1477.7 566.3 1480.9 571.9C1484.0 577.5 1482.7 586.2 1482.2 593.4C1481.8 600.6 1480.9 608.2 1478.2 614.9C1475.5 621.7 1471.2 629.7 1466.1 633.8C1460.9 637.8 1453.5 639.2 1447.2 639.2C1440.9 639.2 1433.5 636.9 1428.4 633.8C1423.2 630.6 1418.7 626.2 1416.3 620.3C1413.8 614.5 1414.2 606.0 1413.6 598.8C1412.9 591.6 1410.7 583.5 1412.2 577.3C1413.8 571.0 1418.1 564.2 1423.0 561.1Z"/><path d="M1522.6 569.2C1526.4 564.0 1534.7 558.6 1541.4 557.1C1548.2 555.5 1554.9 557.3 1563.0 559.8C1571.0 562.2 1582.7 566.7 1589.9 571.9C1597.1 577.0 1602.9 583.5 1606.0 590.7C1609.2 597.9 1609.2 607.3 1608.7 614.9C1608.3 622.6 1605.6 630.0 1603.3 636.5C1601.1 643.0 1599.8 651.3 1595.3 654.0C1590.8 656.7 1583.2 653.7 1576.4 652.6C1569.7 651.5 1562.1 647.9 1554.9 647.2C1547.7 646.6 1539.0 650.4 1533.4 648.6C1527.8 646.8 1523.5 642.1 1521.2 636.5C1519.0 630.9 1520.3 623.0 1519.9 614.9C1519.5 606.9 1518.1 595.7 1518.6 588.0C1519.0 580.4 1518.8 574.3 1522.6 569.2Z"/><path d="M1635.7 563.8C1639.9 558.6 1649.6 558.0 1657.2 557.1C1664.8 556.2 1674.2 556.8 1681.4 558.4C1688.6 560.0 1694.4 562.9 1700.3 566.5C1706.1 570.1 1713.5 574.1 1716.4 579.9C1719.3 585.8 1718.0 593.9 1717.8 601.5C1717.5 609.1 1716.6 618.1 1715.1 625.7C1713.5 633.3 1713.5 643.2 1708.3 647.2C1703.2 651.3 1692.6 650.4 1684.1 649.9C1675.6 649.5 1664.8 646.3 1657.2 644.6C1649.6 642.8 1642.2 644.1 1638.3 639.2C1634.5 634.2 1635.4 623.5 1634.3 614.9C1633.2 606.4 1631.4 596.5 1631.6 588.0C1631.8 579.5 1631.4 569.0 1635.7 563.8Z"/><path d="M1759.5 577.3C1763.3 574.1 1771.6 571.0 1778.3 569.2C1785.0 567.4 1792.0 566.5 1799.9 566.5C1807.7 566.5 1820.5 565.6 1825.4 569.2C1830.4 572.8 1828.8 580.4 1829.5 588.0C1830.1 595.7 1829.7 606.4 1829.5 614.9C1829.2 623.5 1831.3 634.5 1828.1 639.2C1825.0 643.9 1817.6 642.3 1810.6 643.2C1803.7 644.1 1794.0 645.4 1786.4 644.6C1778.8 643.7 1769.1 641.9 1764.9 637.8C1760.6 633.8 1762.4 626.4 1760.8 620.3C1759.3 614.3 1756.3 606.9 1755.4 601.5C1754.5 596.1 1754.8 592.1 1755.4 588.0C1756.1 584.0 1755.7 580.4 1759.5 577.3Z"/><path d="M1419.0 663.4C1422.3 658.0 1429.9 656.0 1436.5 655.3C1443.0 654.6 1451.0 656.2 1458.0 659.4C1464.9 662.5 1475.5 668.1 1478.2 674.2C1480.9 680.2 1476.2 688.1 1474.1 695.7C1472.1 703.3 1469.0 713.4 1466.1 719.9C1463.1 726.4 1456.6 734.7 1456.6 734.7C1456.6 734.7 1446.3 736.0 1441.8 735.5C1437.4 735.1 1429.7 732.0 1429.7 732.0C1429.7 732.0 1425.2 719.3 1423.0 711.8C1420.8 704.4 1416.9 695.7 1416.3 687.6C1415.6 679.5 1415.6 668.8 1419.0 663.4Z"/><path d="M1517.2 682.2C1521.3 678.0 1531.1 673.7 1538.7 672.8C1546.4 671.9 1555.3 676.6 1563.0 676.9C1570.6 677.1 1578.0 674.7 1584.5 674.2C1591.0 673.6 1598.4 670.0 1602.0 673.6C1605.6 677.2 1605.6 688.0 1606.0 695.7C1606.5 703.4 1607.8 714.1 1604.7 719.9C1601.6 725.8 1594.6 728.4 1587.2 730.7C1579.8 732.9 1569.3 733.6 1560.3 733.4C1551.3 733.2 1540.3 732.0 1533.4 729.3C1526.4 726.7 1521.8 722.4 1518.6 717.2C1515.3 712.1 1514.2 704.2 1514.0 698.4C1513.8 692.6 1513.1 686.5 1517.2 682.2Z"/><path d="M1639.7 684.9C1641.0 678.6 1647.1 673.5 1651.8 671.5C1656.5 669.5 1662.6 671.7 1668.0 672.8C1673.3 673.9 1679.2 678.0 1684.1 678.2C1689.0 678.4 1692.0 675.1 1697.6 674.2C1703.2 673.3 1713.7 670.6 1717.8 672.8C1721.8 675.1 1722.2 681.6 1721.8 687.6C1721.3 693.7 1716.9 702.3 1715.1 709.2C1713.3 716.0 1711.0 728.5 1711.0 728.5C1711.0 728.5 1689.3 728.5 1678.7 728.5C1668.2 728.5 1647.8 728.5 1647.8 728.5C1647.8 728.5 1645.1 716.4 1643.7 709.2C1642.4 701.9 1638.3 691.2 1639.7 684.9Z"/><path d="M1759.5 689.0C1759.5 689.0 1771.6 687.8 1778.3 686.3C1785.0 684.7 1793.1 679.8 1799.9 679.5C1806.6 679.3 1813.8 683.6 1818.7 684.9C1823.6 686.3 1829.5 687.6 1829.5 687.6C1829.5 687.6 1831.3 700.2 1829.5 706.5C1827.7 712.7 1823.2 721.0 1818.7 725.3C1814.2 729.6 1809.3 730.9 1802.5 732.0C1795.8 733.2 1784.4 734.1 1778.3 732.0C1772.3 730.0 1769.3 724.6 1766.2 719.9C1763.1 715.2 1760.6 708.9 1759.5 703.8C1758.4 698.6 1759.5 689.0 1759.5 689.0Z"/><path d="M26.3 819.2C31.2 817.3 43.1 818.7 51.8 818.7C60.6 818.7 70.5 819.1 78.8 819.2C87.1 819.3 96.9 816.1 101.6 819.2C106.3 822.4 106.3 830.9 107.0 838.1C107.7 845.2 107.2 856.0 105.7 862.3C104.1 868.6 101.6 873.0 97.6 875.8C93.6 878.5 85.9 879.2 81.4 879.0C77.0 878.8 74.3 874.7 70.7 874.4C67.1 874.1 65.3 876.4 59.9 877.1C54.5 877.8 44.7 879.6 38.4 878.4C32.1 877.3 25.5 875.3 22.2 870.4C19.0 865.4 19.0 855.6 19.0 848.8C19.0 842.1 21.0 834.9 22.2 830.0C23.4 825.1 21.3 821.1 26.3 819.2Z"/><path d="M140.7 824.6C145.2 821.7 151.9 819.0 159.5 817.9C167.1 816.8 177.9 817.2 186.4 817.9C195.0 818.6 205.3 819.0 210.7 821.9C216.0 824.8 217.6 829.1 218.7 835.4C219.9 841.7 218.7 852.9 217.4 859.6C216.0 866.3 214.9 872.2 210.7 875.8C206.4 879.3 197.2 880.9 191.8 881.1C186.4 881.4 182.8 878.0 178.4 877.1C173.9 876.2 169.4 875.1 164.9 875.8C160.4 876.4 156.4 881.6 151.4 881.1C146.5 880.7 138.9 877.1 135.3 873.1C131.7 869.0 130.3 863.2 129.9 856.9C129.5 850.6 130.8 840.8 132.6 835.4C134.4 830.0 136.2 827.5 140.7 824.6Z"/><path d="M249.7 821.9C254.0 818.0 262.9 820.2 272.6 819.8C282.2 819.3 297.5 819.2 307.6 819.2C317.7 819.2 328.4 816.6 333.1 819.8C337.8 822.9 335.6 831.0 335.8 838.1C336.1 845.2 335.6 856.2 334.5 862.3C333.4 868.4 333.1 872.2 329.1 874.4C325.1 876.7 315.6 876.2 310.3 875.8C304.9 875.3 301.3 871.7 296.8 871.7C292.3 871.7 290.1 875.1 283.3 875.8C276.6 876.4 262.3 877.6 256.4 875.8C250.6 874.0 249.9 870.4 248.3 865.0C246.8 859.6 246.8 850.6 247.0 843.5C247.2 836.3 245.4 825.9 249.7 821.9Z"/><path d="M388.3 823.3C392.8 819.3 400.4 819.5 407.2 819.8C413.9 820.0 424.0 820.7 428.7 824.6C433.4 828.6 433.4 836.5 435.4 843.5C437.4 850.4 441.9 859.2 440.8 866.3C439.7 873.5 433.0 881.4 428.7 886.5C424.4 891.7 420.2 895.7 415.2 897.3C410.3 898.9 404.5 898.2 399.1 895.9C393.7 893.7 387.0 888.8 382.9 883.8C378.9 878.9 375.3 873.1 374.9 866.3C374.4 859.6 378.0 850.6 380.2 843.5C382.5 836.3 383.8 827.2 388.3 823.3Z"/><path d="M27.6 913.4C31.3 909.4 37.5 906.9 43.8 905.4C50.0 903.8 57.7 903.3 65.3 904.0C72.9 904.7 82.8 906.0 89.5 909.4C96.3 912.8 102.5 918.2 105.7 924.2C108.8 930.3 108.6 938.6 108.4 945.7C108.1 952.9 107.5 961.4 104.3 967.3C101.2 973.1 96.0 977.6 89.5 980.7C83.0 983.9 72.9 985.7 65.3 986.1C57.7 986.6 50.3 985.7 43.8 983.4C37.3 981.2 30.1 978.0 26.3 972.7C22.5 967.3 21.6 958.3 20.9 951.1C20.1 943.9 20.6 935.9 21.7 929.6C22.8 923.3 23.9 917.5 27.6 913.4Z"/><path d="M132.6 908.1C135.8 902.0 141.6 900.5 148.7 898.6C155.9 896.8 166.7 896.8 175.7 896.8C184.6 896.8 195.6 896.3 202.6 898.6C209.5 901.0 214.3 904.2 217.4 910.8C220.4 917.3 220.7 928.7 220.9 937.7C221.1 946.6 220.4 957.2 218.7 964.6C217.0 972.0 216.0 978.4 210.7 982.1C205.3 985.8 195.0 985.9 186.4 986.7C177.9 987.4 167.6 987.6 159.5 986.7C151.4 985.7 142.9 984.9 138.0 980.7C133.0 976.6 131.3 969.5 129.9 961.9C128.5 954.3 128.9 943.9 129.4 935.0C129.8 926.0 129.4 914.1 132.6 908.1Z"/><path d="M252.4 913.4C255.5 906.0 260.7 904.1 267.2 901.3C273.7 898.5 282.9 897.0 291.4 896.8C299.9 896.5 311.4 897.2 318.3 900.0C325.3 902.8 330.1 906.7 333.1 913.4C336.2 920.2 336.4 931.4 336.6 940.4C336.9 949.3 337.1 959.9 334.5 967.3C331.9 974.7 327.8 981.4 321.0 984.8C314.3 988.1 302.6 987.5 294.1 987.5C285.6 987.5 276.8 987.7 269.9 984.8C262.9 981.9 256.0 976.5 252.4 970.0C248.8 963.5 248.3 955.2 248.3 945.7C248.3 936.3 249.2 920.8 252.4 913.4Z"/><path d="M380.2 924.2C383.8 919.9 390.1 918.7 396.4 917.5C402.7 916.2 411.6 915.6 417.9 916.7C424.2 917.8 430.5 919.8 434.1 924.2C437.7 928.6 438.8 935.9 439.5 943.1C440.1 950.2 440.4 960.8 438.1 967.3C435.9 973.8 431.6 978.9 426.0 982.1C420.4 985.2 411.2 986.3 404.5 986.1C397.7 985.9 390.3 984.3 385.6 980.7C380.9 977.1 378.0 970.9 376.2 964.6C374.4 958.3 374.2 949.8 374.9 943.1C375.5 936.3 376.7 928.5 380.2 924.2Z"/><path d="M27.6 1018.4C30.8 1015.2 37.9 1013.0 43.8 1012.5C49.6 1012.0 58.5 1014.2 62.6 1015.2C66.7 1016.2 65.8 1018.6 68.5 1018.4C71.2 1018.3 73.9 1014.4 78.8 1014.4C83.6 1014.4 92.3 1016.4 97.6 1018.4C102.9 1020.4 108.9 1021.6 110.5 1026.5C112.1 1031.4 108.7 1040.9 107.0 1048.0C105.3 1055.2 102.8 1063.5 100.3 1069.6C97.8 1075.6 98.0 1081.5 92.2 1084.4C86.4 1087.3 73.4 1087.3 65.3 1087.1C57.2 1086.8 49.8 1084.6 43.8 1083.0C37.7 1081.5 32.1 1082.6 29.0 1077.6C25.8 1072.7 25.6 1061.0 24.9 1053.4C24.2 1045.8 24.5 1037.7 24.9 1031.9C25.4 1026.1 24.5 1021.7 27.6 1018.4Z"/><path d="M132.6 1023.8C135.1 1018.9 138.9 1015.1 143.4 1013.0C147.8 1011.0 154.1 1010.8 159.5 1011.7C164.9 1012.6 170.3 1018.4 175.7 1018.4C181.0 1018.4 186.0 1012.6 191.8 1011.7C197.6 1010.8 205.7 1011.0 210.7 1013.0C215.6 1015.1 219.3 1018.4 221.4 1023.8C223.6 1029.2 223.6 1038.2 223.6 1045.3C223.6 1052.5 222.9 1060.4 221.4 1066.9C219.9 1073.4 220.5 1081.0 214.7 1084.4C208.9 1087.7 195.6 1086.6 186.4 1087.1C177.2 1087.5 167.8 1087.7 159.5 1087.1C151.2 1086.4 141.3 1086.8 136.6 1083.0C131.9 1079.2 132.6 1070.9 131.2 1064.2C129.9 1057.5 128.3 1049.4 128.6 1042.7C128.8 1035.9 130.1 1028.7 132.6 1023.8Z"/><path d="M247.0 1021.1C249.9 1017.1 254.0 1014.2 259.1 1013.0C264.3 1011.9 272.6 1013.3 278.0 1014.4C283.3 1015.5 286.9 1019.8 291.4 1019.8C295.9 1019.8 299.5 1015.1 304.9 1014.4C310.3 1013.7 318.3 1013.7 323.7 1015.7C329.1 1017.8 334.8 1021.1 337.2 1026.5C339.5 1031.9 338.2 1041.3 337.7 1048.0C337.3 1054.8 336.1 1060.8 334.5 1066.9C332.8 1072.9 333.1 1081.7 327.8 1084.4C322.4 1087.1 310.9 1083.5 302.2 1083.0C293.4 1082.6 283.6 1082.6 275.3 1081.7C267.0 1080.8 257.5 1081.5 252.4 1077.6C247.2 1073.8 246.1 1065.5 244.3 1058.8C242.5 1052.1 241.2 1043.5 241.6 1037.3C242.1 1031.0 244.1 1025.2 247.0 1021.1Z"/><path d="M374.9 1031.9C376.2 1026.9 381.1 1022.2 385.6 1018.4C390.1 1014.6 395.9 1009.9 401.8 1009.0C407.6 1008.1 414.6 1011.5 420.6 1013.0C426.7 1014.6 435.7 1014.4 438.1 1018.4C440.6 1022.5 436.5 1030.5 435.4 1037.3C434.3 1044.0 433.2 1051.6 431.4 1058.8C429.6 1066.0 428.2 1075.0 424.7 1080.3C421.1 1085.7 415.0 1089.5 409.9 1091.1C404.7 1092.7 397.7 1091.1 393.7 1089.8C389.7 1088.4 387.6 1087.3 385.6 1083.0C383.6 1078.8 382.9 1070.0 381.6 1064.2C380.2 1058.4 378.7 1053.4 377.6 1048.0C376.4 1042.7 373.5 1036.8 374.9 1031.9Z"/><path d="M498.4 827.3C502.2 823.0 508.7 821.5 514.5 820.6C520.4 819.7 528.4 821.0 533.4 821.9C538.3 822.8 541.2 821.9 544.1 826.0C547.1 830.0 548.9 838.7 550.9 846.1C552.9 853.5 556.3 863.2 556.3 870.4C556.3 877.6 554.7 884.1 550.9 889.2C547.1 894.4 539.9 899.5 533.4 901.3C526.9 903.1 518.1 902.0 511.8 900.0C505.6 898.0 499.3 894.2 495.7 889.2C492.1 884.3 491.0 877.6 490.3 870.4C489.6 863.2 490.3 853.3 491.6 846.1C493.0 839.0 494.6 831.6 498.4 827.3Z"/><path d="M619.5 838.1C622.4 832.5 626.2 823.6 630.3 820.6C634.3 817.5 639.5 818.2 643.7 819.8C648.0 821.3 652.5 824.3 655.9 830.0C659.2 835.7 662.1 845.7 663.9 854.2C665.7 862.7 666.3 872.2 666.6 881.1C666.9 890.1 665.8 908.1 665.8 908.1C665.8 908.1 652.4 911.1 646.4 912.1C640.5 913.1 635.7 915.6 630.3 914.0C624.9 912.4 617.9 906.4 614.1 902.7C610.3 899.0 608.3 896.8 607.4 891.9C606.5 887.0 607.8 879.3 608.7 873.1C609.6 866.8 611.0 860.1 612.8 854.2C614.6 848.4 616.6 843.7 619.5 838.1Z"/><path d="M743.3 826.0C743.3 826.0 763.5 826.0 763.5 826.0C763.5 826.0 766.0 836.9 767.6 843.5C769.1 850.0 771.4 857.8 772.9 865.0C774.5 872.2 776.1 879.7 777.0 886.5C777.9 893.3 778.3 905.9 778.3 905.9C778.3 905.9 762.9 906.7 754.1 906.7C745.4 906.7 725.8 905.9 725.8 905.9C725.8 905.9 725.8 898.7 727.2 891.9C728.5 885.1 731.9 873.1 733.9 865.0C735.9 856.9 737.7 850.0 739.3 843.5C740.9 836.9 743.3 826.0 743.3 826.0Z"/><path d="M856.4 826.8C856.4 826.8 876.6 826.8 876.6 826.8C876.6 826.8 880.4 837.1 882.0 843.5C883.5 849.8 885.0 857.8 886.0 865.0C887.0 872.2 887.7 878.9 888.2 886.5C888.6 894.2 888.7 910.8 888.7 910.8C888.7 910.8 872.2 911.3 864.5 911.3C856.8 911.3 842.4 910.8 842.4 910.8C842.4 910.8 842.4 898.6 842.9 891.9C843.5 885.2 844.3 878.0 845.6 870.4C847.0 862.7 849.2 853.4 851.0 846.1C852.8 838.9 856.4 826.8 856.4 826.8Z"/><path d="M502.4 937.7C507.8 931.8 514.3 921.3 519.9 918.8C525.5 916.4 531.6 921.1 536.1 922.9C540.6 924.7 544.4 925.8 546.8 929.6C549.3 933.4 548.9 940.4 550.9 945.7C552.9 951.1 558.9 956.5 558.9 961.9C558.9 967.3 554.7 973.8 550.9 978.0C547.1 982.3 542.1 985.7 536.1 987.5C530.0 989.3 521.7 990.4 514.5 988.8C507.4 987.2 497.5 983.9 493.0 978.0C488.5 972.2 486.0 960.5 487.6 953.8C489.2 947.1 497.0 943.5 502.4 937.7Z"/><path d="M491.6 1029.2C495.8 1022.9 503.5 1013.7 509.1 1010.3C514.8 1007.0 519.9 1008.3 525.3 1009.0C530.7 1009.7 536.3 1011.9 541.4 1014.4C546.6 1016.9 554.0 1018.6 556.3 1023.8C558.5 1029.0 556.0 1038.2 554.9 1045.3C553.8 1052.5 552.2 1059.9 549.5 1066.9C546.8 1073.8 543.2 1082.6 538.8 1087.1C534.3 1091.6 528.0 1092.7 522.6 1093.8C517.2 1094.9 510.5 1095.1 506.5 1093.8C502.4 1092.5 501.1 1090.2 498.4 1085.7C495.7 1081.2 492.6 1073.2 490.3 1066.9C488.0 1060.6 484.2 1054.3 484.4 1048.0C484.6 1041.8 487.5 1035.5 491.6 1029.2Z"/><path d="M602.0 1026.5C605.4 1020.7 614.8 1014.0 619.5 1010.3C624.2 1006.7 626.2 1005.1 630.3 1004.4C634.3 1003.8 638.1 1004.0 643.7 1006.3C649.3 1008.6 660.8 1012.4 663.9 1018.4C667.1 1024.5 663.5 1034.1 662.6 1042.7C661.7 1051.2 660.1 1061.0 658.5 1069.6C657.0 1078.1 656.1 1087.5 653.2 1093.8C650.2 1100.1 645.8 1104.7 641.0 1107.3C636.3 1109.9 630.1 1109.4 624.9 1109.4C619.7 1109.4 613.7 1109.4 610.1 1107.3C606.5 1105.1 605.0 1102.8 603.4 1096.5C601.7 1090.2 600.8 1078.1 600.1 1069.6C599.5 1061.0 599.0 1052.5 599.3 1045.3C599.6 1038.2 598.6 1032.3 602.0 1026.5Z"/><path d="M724.5 1017.1C724.5 1017.1 740.6 1016.7 748.7 1016.3C756.8 1015.8 772.9 1014.4 772.9 1014.4C772.9 1014.4 773.2 1029.0 772.9 1037.3C772.7 1045.6 772.1 1054.5 771.6 1064.2C771.2 1073.8 772.7 1088.2 770.3 1095.1C767.8 1102.1 760.8 1103.7 756.8 1105.9C752.8 1108.2 749.6 1108.8 746.0 1108.6C742.4 1108.4 738.4 1106.6 735.3 1104.6C732.1 1102.5 729.0 1102.3 727.2 1096.5C725.4 1090.7 725.2 1078.5 724.5 1069.6C723.8 1060.6 723.1 1051.4 723.1 1042.7C723.1 1033.9 724.5 1017.1 724.5 1017.1Z"/><path d="M841.6 1013.0C841.6 1013.0 856.3 1009.5 864.5 1009.0C872.7 1008.6 890.9 1010.3 890.9 1010.3C890.9 1010.3 890.6 1028.3 890.0 1037.3C889.5 1046.2 888.2 1055.7 887.4 1064.2C886.5 1072.7 887.1 1082.6 884.7 1088.4C882.2 1094.2 876.4 1096.9 872.5 1099.2C868.7 1101.4 865.4 1102.1 861.8 1101.9C858.2 1101.6 853.7 1099.9 851.0 1097.8C848.3 1095.8 847.1 1095.4 845.6 1089.8C844.2 1084.2 843.3 1072.9 842.4 1064.2C841.5 1055.4 840.4 1045.8 840.2 1037.3C840.1 1028.7 841.6 1013.0 841.6 1013.0Z"/><path d="M966.5 840.8C968.9 834.3 972.3 828.6 975.9 826.0C979.5 823.4 984.4 822.7 988.0 825.1C991.6 827.6 994.9 834.1 997.4 840.8C999.9 847.4 1001.6 856.9 1002.8 865.0C1004.0 873.1 1004.4 881.4 1004.7 889.2C1005.0 897.1 1004.7 912.1 1004.7 912.1C1004.7 912.1 989.0 912.6 981.3 912.6C973.5 912.6 958.4 912.1 958.4 912.1C958.4 912.1 958.5 897.1 958.9 889.2C959.4 881.4 959.8 873.1 961.1 865.0C962.3 856.9 964.0 847.3 966.5 840.8Z"/><path d="M1086.2 826.8C1086.2 826.8 1105.9 826.2 1105.9 826.2C1105.9 826.2 1108.7 837.0 1110.5 843.5C1112.3 849.9 1114.9 857.8 1116.7 865.0C1118.5 872.2 1120.2 879.8 1121.2 886.5C1122.2 893.3 1122.6 905.4 1122.6 905.4C1122.6 905.4 1110.0 908.7 1103.7 909.4C1097.5 910.1 1090.4 909.5 1084.9 909.4C1079.4 909.3 1070.9 908.6 1070.9 908.6C1070.9 908.6 1071.0 898.3 1072.0 891.9C1073.0 885.5 1075.1 878.0 1076.8 870.4C1078.5 862.7 1080.6 853.4 1082.2 846.1C1083.8 838.9 1086.2 826.8 1086.2 826.8Z"/><path d="M1192.6 838.1C1194.8 831.6 1197.5 823.8 1200.6 820.6C1203.8 817.3 1207.8 818.0 1211.4 818.7C1215.0 819.4 1218.8 820.9 1222.2 824.6C1225.5 828.3 1228.9 834.5 1231.6 840.8C1234.3 847.0 1237.0 855.1 1238.3 862.3C1239.7 869.5 1239.9 877.6 1239.7 883.8C1239.5 890.1 1239.9 895.5 1237.0 900.0C1234.1 904.5 1227.3 908.5 1222.2 910.8C1217.0 913.0 1211.0 913.7 1206.0 913.4C1201.1 913.2 1196.4 910.8 1192.6 909.4C1188.8 908.1 1184.7 909.6 1183.1 905.4C1181.6 901.1 1182.5 891.5 1183.1 883.8C1183.8 876.2 1185.6 867.2 1187.2 859.6C1188.8 852.0 1190.3 844.6 1192.6 838.1Z"/><path d="M1305.6 827.3C1310.1 821.8 1317.1 821.6 1324.5 821.4C1331.9 821.2 1344.9 821.8 1350.0 826.0C1355.2 830.1 1353.4 839.2 1355.4 846.1C1357.4 853.1 1361.0 861.4 1362.2 867.7C1363.3 874.0 1364.8 878.4 1362.2 883.8C1359.5 889.2 1351.8 897.5 1346.0 900.0C1340.2 902.5 1333.4 900.2 1327.2 898.6C1320.9 897.1 1313.9 893.9 1308.3 890.6C1302.7 887.2 1295.3 884.5 1293.5 878.4C1291.7 872.4 1295.5 862.7 1297.6 854.2C1299.6 845.7 1301.1 832.8 1305.6 827.3Z"/><path d="M1308.3 924.2C1312.4 921.7 1318.2 919.9 1324.5 920.2C1330.8 920.4 1340.8 922.2 1346.0 925.6C1351.2 928.9 1352.7 935.2 1355.4 940.4C1358.1 945.5 1362.4 950.7 1362.2 956.5C1361.9 962.3 1356.8 970.4 1354.1 975.4C1351.4 980.3 1350.9 984.1 1346.0 986.1C1341.1 988.1 1331.6 988.1 1324.5 987.5C1317.3 986.8 1308.1 985.9 1302.9 982.1C1297.8 978.3 1295.1 969.7 1293.5 964.6C1291.9 959.4 1292.4 956.1 1293.5 951.1C1294.6 946.2 1297.8 939.5 1300.2 935.0C1302.7 930.5 1304.3 926.7 1308.3 924.2Z"/><path d="M962.4 1011.7C962.4 1011.7 975.7 1012.2 982.6 1012.5C989.6 1012.8 1004.1 1013.6 1004.1 1013.6C1004.1 1013.6 1004.6 1028.8 1004.7 1037.3C1004.8 1045.7 1004.9 1055.2 1004.7 1064.2C1004.5 1073.2 1005.0 1085.7 1003.6 1091.1C1002.2 1096.5 999.6 1094.7 996.1 1096.5C992.6 1098.3 986.4 1101.2 982.6 1101.9C978.8 1102.5 975.9 1102.3 973.2 1100.5C970.5 1098.7 968.5 1097.2 966.5 1091.1C964.4 1085.0 962.3 1073.2 961.1 1064.2C959.8 1055.2 958.7 1046.0 958.9 1037.3C959.1 1028.5 962.4 1011.7 962.4 1011.7Z"/><path d="M1076.8 1014.4C1076.8 1014.4 1093.1 1014.3 1101.0 1014.4C1109.0 1014.5 1124.7 1015.2 1124.7 1015.2C1124.7 1015.2 1125.5 1029.1 1125.8 1037.3C1126.1 1045.4 1126.8 1055.0 1126.6 1064.2C1126.4 1073.4 1126.8 1086.2 1124.7 1092.5C1122.7 1098.7 1118.5 1099.2 1114.5 1101.9C1110.6 1104.6 1105.1 1107.7 1101.0 1108.6C1097.0 1109.5 1093.9 1109.3 1090.3 1107.3C1086.7 1105.2 1081.7 1103.7 1079.5 1096.5C1077.4 1089.3 1077.9 1074.1 1077.4 1064.2C1076.8 1054.3 1076.4 1045.6 1076.3 1037.3C1076.2 1029.0 1076.8 1014.4 1076.8 1014.4Z"/><path d="M1187.2 1031.9C1188.8 1026.1 1191.7 1017.5 1195.3 1013.0C1198.9 1008.6 1203.3 1005.6 1208.7 1005.0C1214.1 1004.3 1221.5 1005.9 1227.6 1009.0C1233.6 1012.1 1241.0 1017.8 1245.1 1023.8C1249.1 1029.9 1250.7 1037.3 1251.8 1045.3C1252.9 1053.4 1252.3 1063.3 1251.8 1072.3C1251.3 1081.2 1251.7 1093.3 1248.6 1099.2C1245.4 1105.0 1238.7 1105.5 1232.9 1107.3C1227.2 1109.1 1219.0 1110.8 1214.1 1109.9C1209.2 1109.1 1206.5 1105.9 1203.3 1101.9C1200.2 1097.8 1197.5 1092.0 1195.3 1085.7C1193.0 1079.4 1191.4 1070.5 1189.9 1064.2C1188.3 1057.9 1186.3 1053.4 1185.8 1048.0C1185.4 1042.7 1185.6 1037.7 1187.2 1031.9Z"/><path d="M1294.9 1026.5C1296.7 1020.7 1300.7 1016.2 1305.6 1013.0C1310.6 1009.9 1317.7 1007.7 1324.5 1007.7C1331.2 1007.7 1340.2 1009.9 1346.0 1013.0C1351.8 1016.2 1356.0 1022.5 1359.5 1026.5C1363.0 1030.5 1367.0 1037.3 1367.0 1037.3C1367.0 1037.3 1361.4 1052.1 1359.5 1058.8C1357.5 1065.5 1356.8 1072.7 1355.4 1077.6C1354.1 1082.6 1355.2 1085.7 1351.4 1088.4C1347.6 1091.1 1338.4 1093.1 1332.5 1093.8C1326.7 1094.5 1320.4 1093.8 1316.4 1092.5C1312.4 1091.1 1310.8 1089.5 1308.3 1085.7C1305.9 1081.9 1303.8 1075.9 1301.6 1069.6C1299.3 1063.3 1296.0 1055.2 1294.9 1048.0C1293.7 1040.9 1293.1 1032.3 1294.9 1026.5Z"/><path d="M1423.0 826.0C1426.8 821.8 1432.4 821.6 1439.1 821.4C1445.9 821.2 1458.2 820.5 1463.4 824.6C1468.5 828.7 1467.9 839.2 1470.1 846.1C1472.3 853.1 1477.5 860.5 1476.8 866.3C1476.2 872.2 1470.1 876.2 1466.1 881.1C1462.0 886.1 1457.5 893.7 1452.6 895.9C1447.7 898.2 1441.4 897.1 1436.5 894.6C1431.5 892.1 1427.4 885.6 1423.0 881.1C1418.6 876.7 1411.2 873.5 1410.1 867.7C1409.0 861.8 1414.1 853.1 1416.3 846.1C1418.4 839.2 1419.2 830.1 1423.0 826.0Z"/><path d="M1514.5 824.6C1518.3 820.9 1525.7 819.4 1533.4 818.7C1541.0 818.0 1551.3 820.6 1560.3 820.6C1569.3 820.6 1580.2 818.0 1587.2 818.7C1594.2 819.4 1598.9 820.5 1602.0 824.6C1605.1 828.7 1605.6 837.2 1606.0 843.5C1606.5 849.7 1606.9 857.1 1604.7 862.3C1602.5 867.5 1598.2 872.2 1592.6 874.4C1587.0 876.7 1576.9 876.2 1571.0 875.8C1565.2 875.3 1562.5 871.7 1557.6 871.7C1552.7 871.7 1547.7 875.5 1541.4 875.8C1535.2 876.0 1524.8 875.8 1519.9 873.1C1515.0 870.4 1513.4 865.0 1511.8 859.6C1510.3 854.2 1510.0 846.6 1510.5 840.8C1510.9 834.9 1510.7 828.3 1514.5 824.6Z"/><path d="M1633.0 820.6C1635.3 816.9 1637.4 816.4 1643.7 816.0C1650.0 815.5 1661.7 817.4 1670.6 817.9C1679.6 818.3 1690.2 816.7 1697.6 818.7C1705.0 820.7 1711.0 825.0 1715.1 830.0C1719.1 835.0 1720.7 842.6 1721.8 848.8C1722.9 855.1 1724.0 862.5 1721.8 867.7C1719.5 872.8 1714.2 877.6 1708.3 879.8C1702.5 882.0 1692.6 882.3 1686.8 881.1C1681.0 880.0 1678.3 873.5 1673.3 873.1C1668.4 872.6 1663.0 878.2 1657.2 878.4C1651.4 878.7 1642.8 877.6 1638.3 874.4C1633.9 871.3 1631.7 865.7 1630.3 859.6C1628.8 853.5 1629.3 844.6 1629.7 838.1C1630.2 831.6 1630.6 824.3 1633.0 820.6Z"/><path d="M1744.7 820.6C1744.7 820.6 1765.5 819.9 1778.3 819.8C1791.1 819.6 1821.4 819.8 1821.4 819.8C1821.4 819.8 1827.2 836.4 1828.1 843.5C1829.0 850.5 1828.3 856.9 1826.8 862.3C1825.2 867.7 1823.6 872.8 1818.7 875.8C1813.8 878.7 1803.0 879.8 1797.2 879.8C1791.3 879.8 1788.2 875.3 1783.7 875.8C1779.2 876.2 1775.6 882.0 1770.2 882.5C1764.9 882.9 1755.7 881.8 1751.4 878.4C1747.1 875.1 1746.0 868.6 1744.7 862.3C1743.3 856.0 1743.3 847.7 1743.3 840.8C1743.3 833.8 1744.7 820.6 1744.7 820.6Z"/><path d="M1417.6 922.9C1421.7 917.9 1428.6 916.4 1436.5 916.1C1444.3 915.9 1459.1 917.5 1464.7 921.5C1470.3 925.6 1468.2 934.1 1470.1 940.4C1472.0 946.6 1476.7 952.5 1476.3 959.2C1475.8 965.9 1474.0 977.4 1467.4 980.7C1460.8 984.1 1445.6 981.6 1436.5 979.4C1427.3 977.1 1416.9 972.9 1412.8 967.3C1408.6 961.7 1410.9 953.1 1411.7 945.7C1412.5 938.3 1413.5 927.8 1417.6 922.9Z"/><path d="M1517.2 910.8C1521.9 905.4 1530.7 902.0 1538.7 900.0C1546.8 898.0 1556.7 898.2 1565.7 898.6C1574.6 899.1 1586.1 899.3 1592.6 902.7C1599.1 906.0 1602.5 911.6 1604.7 918.8C1606.9 926.0 1606.5 937.2 1606.0 945.7C1605.6 954.3 1605.1 963.5 1602.0 970.0C1598.9 976.5 1594.2 981.9 1587.2 984.8C1580.2 987.7 1569.3 986.9 1560.3 987.5C1551.3 988.1 1540.8 989.4 1533.4 988.3C1526.0 987.2 1519.7 986.0 1515.9 980.7C1512.0 975.4 1511.4 964.6 1510.5 956.5C1509.6 948.4 1509.4 939.9 1510.5 932.3C1511.6 924.7 1512.5 916.1 1517.2 910.8Z"/><path d="M1633.0 910.8C1637.4 905.6 1646.4 900.9 1654.5 898.6C1662.6 896.4 1672.4 897.1 1681.4 897.3C1690.4 897.5 1701.6 897.3 1708.3 900.0C1715.1 902.7 1719.2 906.7 1721.8 913.4C1724.4 920.2 1724.2 931.4 1723.9 940.4C1723.7 949.3 1723.5 960.1 1720.4 967.3C1717.4 974.5 1712.6 980.2 1705.6 983.4C1698.7 986.7 1687.7 986.4 1678.7 986.7C1669.7 986.9 1659.2 986.7 1651.8 984.8C1644.4 982.9 1638.3 981.0 1634.3 975.4C1630.4 969.7 1629.2 958.8 1628.1 951.1C1627.0 943.5 1626.8 936.3 1627.6 929.6C1628.4 922.9 1628.5 915.9 1633.0 910.8Z"/><path d="M1751.4 913.4C1755.7 909.6 1763.5 905.8 1770.2 904.0C1777.0 902.2 1784.6 902.0 1791.8 902.7C1799.0 903.3 1807.3 904.5 1813.3 908.1C1819.4 911.6 1825.2 917.9 1828.1 924.2C1831.0 930.5 1831.3 938.6 1830.8 945.7C1830.4 952.9 1829.2 961.2 1825.4 967.3C1821.6 973.3 1814.4 979.0 1807.9 982.1C1801.4 985.1 1793.6 985.6 1786.4 985.6C1779.2 985.6 1771.4 985.1 1764.9 982.1C1758.4 979.0 1751.0 973.3 1747.4 967.3C1743.7 961.2 1743.2 952.5 1742.8 945.7C1742.3 939.0 1743.2 932.3 1744.7 926.9C1746.1 921.5 1747.1 917.3 1751.4 913.4Z"/><path d="M1413.6 1023.8C1417.4 1017.8 1428.6 1010.3 1436.5 1009.0C1444.3 1007.7 1454.0 1013.0 1460.7 1015.7C1467.4 1018.4 1474.6 1019.8 1476.8 1025.2C1479.1 1030.5 1475.3 1040.6 1474.1 1048.0C1473.0 1055.4 1471.2 1063.3 1470.1 1069.6C1469.0 1075.9 1470.8 1081.9 1467.4 1085.7C1464.0 1089.5 1455.3 1091.8 1449.9 1092.5C1444.5 1093.1 1438.9 1091.1 1435.1 1089.8C1431.3 1088.4 1429.7 1088.6 1427.0 1084.4C1424.3 1080.1 1421.2 1070.7 1419.0 1064.2C1416.7 1057.7 1414.5 1052.1 1413.6 1045.3C1412.7 1038.6 1409.8 1029.9 1413.6 1023.8Z"/><path d="M1514.5 1023.8C1517.9 1019.3 1524.8 1016.9 1530.7 1015.7C1536.5 1014.6 1544.6 1016.4 1549.5 1017.1C1554.4 1017.8 1555.8 1020.2 1560.3 1019.8C1564.8 1019.3 1570.1 1014.8 1576.4 1014.4C1582.7 1013.9 1592.6 1014.2 1598.0 1017.1C1603.3 1020.0 1607.2 1025.8 1608.7 1031.9C1610.3 1037.9 1608.3 1046.7 1607.4 1053.4C1606.5 1060.1 1604.7 1067.3 1603.3 1072.3C1602.0 1077.2 1603.8 1080.6 1599.3 1083.0C1594.8 1085.5 1584.7 1086.2 1576.4 1087.1C1568.1 1088.0 1558.9 1088.9 1549.5 1088.4C1540.1 1088.0 1526.0 1088.4 1519.9 1084.4C1513.8 1080.3 1514.7 1071.1 1513.2 1064.2C1511.6 1057.2 1510.3 1049.4 1510.5 1042.7C1510.7 1035.9 1511.2 1028.3 1514.5 1023.8Z"/><path d="M1627.6 1023.8C1629.7 1018.9 1633.9 1014.6 1638.3 1013.0C1642.8 1011.5 1649.1 1012.8 1654.5 1014.4C1659.9 1016.0 1665.7 1022.5 1670.6 1022.5C1675.6 1022.5 1678.7 1015.7 1684.1 1014.4C1689.5 1013.0 1696.9 1012.4 1702.9 1014.4C1709.0 1016.4 1717.1 1020.9 1720.4 1026.5C1723.8 1032.1 1723.4 1040.9 1723.1 1048.0C1722.9 1055.2 1721.1 1063.5 1719.1 1069.6C1717.1 1075.6 1716.0 1081.5 1711.0 1084.4C1706.1 1087.3 1697.6 1086.6 1689.5 1087.1C1681.4 1087.5 1671.5 1087.7 1662.6 1087.1C1653.6 1086.4 1641.3 1086.8 1635.7 1083.0C1630.0 1079.2 1630.6 1070.9 1628.9 1064.2C1627.2 1057.5 1625.6 1049.4 1625.4 1042.7C1625.2 1035.9 1625.4 1028.7 1627.6 1023.8Z"/><path d="M1743.3 1026.5C1746.0 1021.8 1753.6 1018.6 1759.5 1017.1C1765.3 1015.5 1774.1 1016.4 1778.3 1017.1C1782.6 1017.8 1781.5 1022.0 1785.0 1021.1C1788.6 1020.2 1794.2 1012.6 1799.9 1011.7C1805.5 1010.8 1814.4 1012.4 1818.7 1015.7C1823.0 1019.1 1824.3 1025.6 1825.4 1031.9C1826.5 1038.2 1825.9 1046.2 1825.4 1053.4C1825.0 1060.6 1826.5 1070.7 1822.7 1075.0C1818.9 1079.2 1809.5 1078.1 1802.5 1079.0C1795.6 1079.9 1788.2 1080.1 1781.0 1080.3C1773.8 1080.6 1764.6 1083.0 1759.5 1080.3C1754.3 1077.6 1752.7 1070.0 1750.1 1064.2C1747.4 1058.4 1744.4 1051.6 1743.3 1045.3C1742.2 1039.1 1740.6 1031.2 1743.3 1026.5Z"/></g><g fill="#a08c50" opacity=".42" filter="url(#b6)"><ellipse cx="54.5" cy="606.9" rx="13.6" ry="10.4"/><ellipse cx="173.0" cy="604.2" rx="17.4" ry="13.3"/><ellipse cx="288.7" cy="606.9" rx="17.4" ry="13.3"/><ellipse cx="401.8" cy="601.5" rx="11.6" ry="8.9"/><ellipse cx="521.3" cy="593.4" rx="10.7" ry="8.1"/><ellipse cx="1331.2" cy="593.4" rx="10.7" ry="8.1"/><ellipse cx="1447.2" cy="598.8" rx="11.6" ry="8.9"/><ellipse cx="1563.0" cy="606.9" rx="17.4" ry="13.3"/><ellipse cx="1673.3" cy="604.2" rx="17.4" ry="13.3"/><ellipse cx="1791.8" cy="606.9" rx="14.5" ry="11.1"/><ellipse cx="65.3" cy="944.4" rx="16.5" ry="12.6"/><ellipse cx="174.3" cy="941.7" rx="18.4" ry="14.1"/><ellipse cx="291.4" cy="941.7" rx="18.4" ry="14.1"/><ellipse cx="407.2" cy="951.1" rx="11.6" ry="8.9"/><ellipse cx="522.6" cy="953.8" rx="11.6" ry="8.9"/><ellipse cx="1327.2" cy="953.8" rx="11.6" ry="8.9"/><ellipse cx="1443.2" cy="949.8" rx="11.6" ry="8.9"/><ellipse cx="1557.6" cy="943.1" rx="18.4" ry="14.1"/><ellipse cx="1674.7" cy="941.7" rx="18.4" ry="14.1"/><ellipse cx="1786.4" cy="943.1" rx="17.4" ry="13.3"/></g><g fill="none" stroke="#9c8a4e" stroke-width="2.2" stroke-linecap="round" opacity=".42" filter="url(#b1)"><path d="M55.9 531.5C55.4 528.8 54.3 519.4 53.2 515.3C52.1 511.3 49.8 508.6 49.1 507.3"/><path d="M172.4 530.1C172.1 527.2 170.9 517.4 170.3 512.7C169.7 507.9 169.2 503.7 168.9 501.9"/><path d="M283.3 538.2C283.8 535.3 285.4 525.9 286.0 520.7C286.7 515.6 287.2 509.5 287.4 507.3"/><path d="M19.5 609.6C22.7 609.1 32.1 607.1 38.4 606.9C44.7 606.6 50.5 608.2 57.2 608.2C64.0 608.2 73.1 606.6 78.8 606.9C84.4 607.1 88.9 609.1 90.9 609.6"/><path d="M43.8 571.9C44.2 574.6 45.3 582.2 46.5 588.0C47.6 593.9 49.8 603.7 50.5 606.9"/><path d="M78.8 582.6C76.5 584.9 68.9 591.8 65.3 596.1C61.7 600.4 58.6 606.2 57.2 608.2"/><path d="M132.6 612.3C135.3 612.7 143.4 615.4 148.7 614.9C154.1 614.5 158.6 610.9 164.9 609.6C171.2 608.2 178.4 606.9 186.4 606.9C194.5 606.9 208.9 609.1 213.3 609.6"/><path d="M170.3 563.8C170.7 566.9 173.9 575.0 173.0 582.6C172.1 590.3 166.2 605.1 164.9 609.6"/><path d="M164.9 609.6C164.0 612.7 160.0 622.1 159.5 628.4C159.1 634.7 161.8 644.1 162.2 647.2"/><path d="M244.3 612.3C247.2 611.8 255.3 610.5 261.8 609.6C268.3 608.7 275.7 607.1 283.3 606.9C291.0 606.6 299.5 608.2 307.6 608.2C315.6 608.2 327.8 607.1 331.8 606.9"/><path d="M288.7 561.1C288.5 564.7 288.3 575.0 287.4 582.6C286.5 590.3 284.0 602.8 283.3 606.9"/><path d="M283.3 606.9C280.6 609.6 272.1 617.2 267.2 623.0C262.3 628.9 256.0 638.7 253.7 641.9"/><path d="M369.5 608.2C372.6 607.5 382.0 604.6 388.3 604.2C394.6 603.7 399.8 604.6 407.2 605.5C414.6 606.4 428.5 608.9 432.7 609.6"/><path d="M393.7 588.0C393.5 590.7 392.6 601.5 392.4 604.2"/><path d="M412.5 588.0C412.1 590.8 410.3 601.9 409.9 604.7"/><path d="M152.8 674.2C154.4 676.4 160.0 683.1 162.2 687.6C164.4 692.1 165.6 698.8 166.2 701.1"/><path d="M279.3 676.9C280.9 679.1 286.7 686.3 288.7 690.3C290.7 694.4 291.0 699.3 291.4 701.1"/><path d="M493.0 601.5C495.2 601.7 501.1 603.1 506.5 602.8C511.8 602.6 518.1 600.4 525.3 600.1C532.5 599.9 545.5 601.3 549.5 601.5"/><path d="M506.5 579.9C507.4 581.3 509.1 587.1 511.8 588.0C514.5 588.9 518.6 586.9 522.6 585.3C526.6 583.8 533.8 579.7 536.1 578.6"/><path d="M735.3 652.6C738.4 658.0 748.7 676.9 754.1 684.9C759.5 693.0 765.3 698.4 767.6 701.1"/><path d="M772.9 652.6C769.8 658.0 759.5 676.9 754.1 684.9C748.7 693.0 742.9 698.4 740.6 701.1"/><path d="M619.5 652.6C621.8 655.3 630.3 661.6 633.0 668.8C635.7 676.0 635.2 691.2 635.7 695.7"/><path d="M651.8 652.6C650.0 655.3 643.7 661.6 641.0 668.8C638.4 676.0 636.6 691.2 635.7 695.7"/><path d="M1305.6 606.9C1308.3 607.5 1316.4 610.5 1321.8 610.9C1327.2 611.4 1332.1 610.5 1337.9 609.6C1343.8 608.7 1353.6 606.2 1356.8 605.5"/><path d="M1329.9 561.1C1329.6 565.6 1328.5 579.9 1328.5 588.0C1328.5 596.1 1329.6 606.0 1329.9 609.6"/><path d="M1195.3 652.6C1197.5 654.0 1205.6 658.0 1208.7 660.7C1211.9 663.4 1213.2 667.4 1214.1 668.8"/><path d="M1235.6 652.6C1233.4 654.0 1225.8 658.0 1222.2 660.7C1218.6 663.4 1215.5 667.4 1214.1 668.8"/><path d="M1214.1 668.8C1213.7 672.4 1212.1 684.0 1211.4 690.3C1210.7 696.6 1210.3 703.8 1210.1 706.5"/><path d="M963.8 652.6C965.1 658.0 968.7 676.0 971.8 684.9C975.0 693.9 978.6 704.7 982.6 706.5C986.6 708.3 992.0 704.7 996.1 695.7C1000.1 686.7 1005.0 659.8 1006.8 652.6"/><path d="M1565.7 536.9C1565.2 533.7 1563.6 523.9 1563.0 518.0C1562.3 512.2 1561.8 504.6 1561.6 501.9"/><path d="M1677.4 530.1C1677.4 527.7 1677.6 520.1 1677.4 515.3C1677.2 510.6 1676.3 504.1 1676.0 501.9"/><path d="M1789.1 532.8C1789.5 530.4 1791.1 522.3 1791.8 518.0C1792.5 513.8 1792.9 509.1 1793.1 507.3"/><path d="M1414.9 604.2C1417.6 604.8 1425.2 607.8 1431.1 608.2C1436.9 608.7 1441.8 607.5 1449.9 606.9C1458.0 606.2 1474.6 604.6 1479.5 604.2"/><path d="M1519.9 609.6C1523.0 609.3 1531.6 607.8 1538.7 608.2C1545.9 608.7 1554.9 611.1 1563.0 612.3C1571.0 613.4 1579.8 614.3 1587.2 614.9C1594.6 615.6 1604.0 616.1 1607.4 616.3"/><path d="M1549.5 563.8C1551.3 567.4 1558.0 577.3 1560.3 585.3C1562.5 593.4 1562.5 607.8 1563.0 612.3"/><path d="M1587.2 614.9C1586.7 618.1 1586.7 628.0 1584.5 633.8C1582.3 639.6 1575.5 647.2 1573.7 649.9"/><path d="M1633.0 609.6C1636.5 609.1 1647.8 608.7 1654.5 606.9C1661.2 605.1 1666.6 598.3 1673.3 598.8C1680.1 599.2 1687.7 606.9 1694.9 609.6C1702.1 612.3 1712.8 614.0 1716.4 614.9"/><path d="M1681.4 561.1C1681.0 564.2 1680.1 573.7 1678.7 579.9C1677.4 586.2 1674.2 595.7 1673.3 598.8"/><path d="M1756.8 612.3C1760.4 611.8 1770.7 610.2 1778.3 609.6C1785.9 608.9 1794.0 608.0 1802.5 608.2C1811.1 608.4 1825.0 610.5 1829.5 610.9"/><path d="M1799.9 569.2C1799.4 572.3 1796.7 581.5 1797.2 588.0C1797.6 594.5 1801.6 604.8 1802.5 608.2"/><path d="M1816.0 612.3C1816.2 616.7 1817.1 634.7 1817.4 639.2"/><path d="M1563.0 678.2C1563.4 680.2 1565.7 686.5 1565.7 690.3C1565.7 694.1 1563.4 699.3 1563.0 701.1"/><path d="M1657.2 674.2C1658.5 676.9 1663.5 684.9 1665.3 690.3C1667.1 695.7 1667.5 703.8 1668.0 706.5"/><path d="M1692.2 675.5C1691.3 678.0 1688.1 685.2 1686.8 690.3C1685.5 695.5 1684.6 703.8 1684.1 706.5"/><path d="M69.3 875.8C69.1 873.5 68.7 866.8 68.0 862.3C67.3 857.8 65.7 851.1 65.3 848.8"/><path d="M170.3 877.1C170.7 874.6 172.1 867.0 173.0 862.3C173.9 857.6 175.2 851.1 175.7 848.8"/><path d="M295.5 873.1C295.2 869.9 294.1 860.1 294.1 854.2C294.1 848.4 295.2 840.8 295.5 838.1"/><path d="M22.2 944.4C25.8 943.9 36.6 941.9 43.8 941.7C50.9 941.5 58.1 943.1 65.3 943.1C72.5 943.1 79.9 941.5 86.8 941.7C93.8 941.9 103.7 943.9 107.0 944.4"/><path d="M62.6 905.4C63.1 908.5 64.8 917.9 65.3 924.2C65.7 930.5 65.5 936.3 65.3 943.1C65.1 949.8 64.4 957.6 64.0 964.6C63.5 971.5 62.8 981.4 62.6 984.8"/><path d="M131.2 943.1C134.6 942.8 144.5 942.2 151.4 941.7C158.4 941.3 165.3 941.0 173.0 940.4C180.6 939.7 189.3 938.3 197.2 937.7C205.0 937.0 216.3 936.5 220.1 936.3"/><path d="M170.3 898.6C171.0 902.0 173.9 911.9 174.3 918.8C174.8 925.8 173.0 932.7 173.0 940.4C173.0 948.0 173.9 957.0 174.3 964.6C174.8 972.2 175.4 982.5 175.7 986.1"/><path d="M249.7 944.4C253.1 943.9 262.9 942.2 269.9 941.7C276.8 941.3 284.2 941.9 291.4 941.7C298.6 941.5 305.5 940.8 312.9 940.4C320.4 939.9 332.0 939.2 335.8 939.0"/><path d="M290.1 898.6C290.3 902.0 291.2 911.6 291.4 918.8C291.6 926.0 291.6 934.1 291.4 941.7C291.2 949.3 290.5 957.2 290.1 964.6C289.6 972.0 288.9 982.5 288.7 986.1"/><path d="M385.6 951.1C387.0 949.8 390.1 945.1 393.7 943.1C397.3 941.0 402.7 939.0 407.2 939.0C411.6 939.0 417.0 941.0 420.6 943.1C424.2 945.1 427.4 949.8 428.7 951.1"/><path d="M68.5 1018.4C68.2 1020.7 67.4 1027.4 66.6 1031.9C65.9 1036.4 64.4 1043.1 64.0 1045.3"/><path d="M175.7 1018.4C175.4 1020.7 175.0 1027.4 174.3 1031.9C173.6 1036.4 172.1 1043.1 171.6 1045.3"/><path d="M291.4 1019.8C291.2 1022.2 290.5 1029.9 290.1 1034.6C289.6 1039.3 288.9 1045.8 288.7 1048.0"/><path d="M490.3 956.5C493.0 955.8 501.1 952.9 506.5 952.5C511.8 952.0 517.2 954.0 522.6 953.8C528.0 953.6 532.9 949.8 538.8 951.1C544.6 952.5 554.5 960.1 557.6 961.9"/><path d="M521.3 921.5C521.5 924.2 522.4 932.3 522.6 937.7C522.8 943.1 522.6 951.1 522.6 953.8"/><path d="M1294.9 953.8C1297.6 953.1 1305.6 949.8 1311.0 949.8C1316.4 949.8 1321.8 953.6 1327.2 953.8C1332.5 954.0 1337.7 950.7 1343.3 951.1C1348.9 951.6 1357.9 955.6 1360.8 956.5"/><path d="M1327.2 924.2C1327.4 926.9 1328.5 935.4 1328.5 940.4C1328.5 945.3 1326.9 946.6 1327.2 953.8C1327.4 961.0 1329.4 978.5 1329.9 983.4"/><path d="M1198.0 908.1C1198.9 902.7 1201.1 885.6 1203.3 875.8C1205.6 865.9 1208.7 848.8 1211.4 848.8C1214.1 848.8 1216.3 866.8 1219.5 875.8C1222.6 884.7 1228.5 898.2 1230.3 902.7"/><path d="M1557.6 871.7C1557.8 868.8 1558.5 860.3 1558.9 854.2C1559.4 848.2 1560.1 838.5 1560.3 835.4"/><path d="M1673.3 873.1C1673.8 870.4 1674.9 861.8 1676.0 856.9C1677.2 852.0 1679.4 845.7 1680.1 843.5"/><path d="M1783.7 875.8C1783.5 873.1 1783.0 865.0 1782.4 859.6C1781.7 854.2 1780.1 846.1 1779.7 843.5"/><path d="M1423.0 953.8C1424.8 952.5 1429.7 947.5 1433.8 945.7C1437.8 943.9 1442.7 942.6 1447.2 943.1C1451.7 943.5 1457.5 946.2 1460.7 948.4C1463.8 950.7 1465.2 955.2 1466.1 956.5"/><path d="M1511.8 945.7C1515.4 946.0 1527.1 948.0 1533.4 947.1C1539.6 946.2 1542.3 942.4 1549.5 940.4C1556.7 938.3 1567.5 935.9 1576.4 935.0C1585.4 934.1 1598.9 935.0 1603.3 935.0"/><path d="M1549.5 940.4C1548.6 943.9 1545.5 954.7 1544.1 961.9C1542.8 969.1 1541.9 979.8 1541.4 983.4"/><path d="M1549.5 940.4C1551.3 937.7 1556.2 929.1 1560.3 924.2C1564.3 919.3 1571.5 913.0 1573.7 910.8"/><path d="M1576.4 935.0C1578.2 938.1 1584.5 947.5 1587.2 953.8C1589.9 960.1 1591.7 969.5 1592.6 972.7"/><path d="M1628.9 945.7C1632.7 945.5 1644.8 945.1 1651.8 944.4C1658.8 943.7 1663.5 942.6 1670.6 941.7C1677.8 940.8 1686.3 939.2 1694.9 939.0C1703.4 938.8 1717.3 940.1 1721.8 940.4"/><path d="M1665.3 901.3C1665.9 904.7 1668.4 914.8 1669.3 921.5C1670.2 928.2 1669.5 934.5 1670.6 941.7C1671.8 948.9 1674.7 957.4 1676.0 964.6C1677.4 971.8 1678.3 981.4 1678.7 984.8"/><path d="M1743.3 943.1C1746.9 942.8 1757.7 941.9 1764.9 941.7C1772.0 941.5 1779.2 941.7 1786.4 941.7C1793.6 941.7 1800.8 941.5 1807.9 941.7C1815.1 941.9 1825.9 942.8 1829.5 943.1"/><path d="M1785.0 904.0C1785.3 907.4 1786.2 917.9 1786.4 924.2C1786.6 930.5 1786.4 935.4 1786.4 941.7C1786.4 948.0 1786.4 954.7 1786.4 961.9C1786.4 969.1 1786.4 981.0 1786.4 984.8"/><path d="M1560.3 1019.8C1560.1 1022.2 1559.4 1029.9 1558.9 1034.6C1558.5 1039.3 1557.8 1045.8 1557.6 1048.0"/><path d="M1670.6 1022.5C1670.6 1024.9 1670.9 1032.6 1670.6 1037.3C1670.4 1042.0 1669.5 1048.5 1669.3 1050.7"/><path d="M1785.0 1021.1C1784.8 1023.4 1784.4 1030.1 1783.7 1034.6C1783.0 1039.1 1781.5 1045.8 1781.0 1048.0"/></g><g fill="none" stroke="#9a7222" stroke-width="2.4" stroke-linecap="round" opacity=".55" filter="url(#b1)"><path d="M38.4 379.4C38.6 385.5 39.7 403.4 39.7 415.7C39.7 428.1 38.6 447.1 38.4 453.4"/><path d="M152.8 361.9C153.9 366.8 157.0 381.6 159.5 391.5C162.0 401.4 166.2 416.2 167.6 421.1"/><path d="M171.6 361.9C171.4 367.3 171.0 384.3 170.3 394.2C169.6 404.1 171.2 411.3 167.6 421.1C164.0 431.0 151.9 448.0 148.7 453.4"/><path d="M307.6 395.6C303.5 402.5 290.5 426.7 283.3 437.3C276.2 447.8 267.6 455.2 264.5 458.8"/><path d="M507.8 325.6C507.6 333.4 506.9 357.6 506.5 372.7C506.0 387.7 505.1 402.7 505.1 415.7C505.1 428.8 506.2 444.9 506.5 450.7"/><path d="M1343.3 325.6C1343.8 333.4 1345.1 357.6 1346.0 372.7C1346.9 387.7 1347.8 402.7 1348.7 415.7C1349.6 428.8 1350.9 444.9 1351.4 450.7"/><path d="M1573.7 395.6C1571.5 401.6 1564.8 420.5 1560.3 431.9C1555.8 443.3 1549.1 458.8 1546.8 464.2"/><path d="M1680.1 357.9C1678.9 363.9 1674.9 381.9 1673.3 394.2C1671.8 406.5 1671.1 425.6 1670.6 431.9"/><path d="M1697.6 363.3C1697.1 369.3 1696.7 387.3 1694.9 399.6C1693.1 411.9 1688.1 431.0 1686.8 437.3"/><path d="M1809.3 372.7C1808.6 379.4 1806.4 399.6 1805.2 413.1C1804.1 426.5 1802.8 442.2 1802.5 453.4C1802.3 464.6 1803.7 475.9 1803.9 480.3"/><path d="M51.8 1112.6C51.2 1116.2 50.5 1127.0 47.8 1134.2C45.1 1141.4 39.9 1150.1 35.7 1155.7C31.4 1161.3 24.5 1165.8 22.2 1167.8"/><path d="M1791.8 1091.1C1793.6 1096.5 1798.1 1113.1 1802.5 1123.4C1807.0 1133.7 1814.2 1145.2 1818.7 1153.0C1823.2 1160.9 1827.7 1167.6 1829.5 1170.5"/></g><g fill="none"><path d="M882.7 965.5L888 959H896.5V970.7L903.2 978" stroke="#000" stroke-width="1.8"/><path d="M883.5 964.5L888.8 958H897.3V969.7L904 977" stroke="#fff" stroke-width="1.7"/><path d="M907 973.800L929.600 997L923.8 1003L901 979.800Z" fill="#fff" stroke="#000" stroke-width="1.5"/><path d="M905.5 978.5L925.5 998.800" stroke="#000" stroke-width="1.1"/></g></svg></div><div class="abs" style="left:0;top:0;width:2px;height:2040px;background:#8a8a92"></div><div class="abs" style="left:1865px;top:165px;width:161px;height:1549px;background:#f2f2f2"></div><div class="hd" style="left:1865px;top:165px;width:161px"></div><div class="t" style="left:1868px;top:168px;font-size:16.2px;color:#111;word-spacing:1.5px">Procedure B...</div><div class="abs" style="left:2033px;top:165px;width:257px;height:1549px;background:#f0f0f0"></div><div class="hd" style="left:2033px;top:165px;width:257px"></div><div class="t" style="left:2036px;top:168px;font-size:16.3px;color:#111">Procedure Codes</div><svg class="abs" style="left:1979px;top:169px" width="12" height="16" viewBox="0 0 12 16"><path d="M3 1.5H9M4 1.5V8M7.5 1.5V8M8.8 1.5V8M1.5 8.5H10.5M6 9V15" stroke="#1c3a8a" stroke-width="1.6" fill="none"/></svg><svg class="abs" style="left:2003px;top:170px" width="14" height="14" viewBox="0 0 14 14"><path d="M2 2L12 12M12 2L2 12" stroke="#1c3a8a" stroke-width="3" fill="none"/></svg><svg class="abs" style="left:2244px;top:169px" width="12" height="16" viewBox="0 0 12 16"><path d="M3 1.5H9M4 1.5V8M7.5 1.5V8M8.8 1.5V8M1.5 8.5H10.5M6 9V15" stroke="#1c3a8a" stroke-width="1.6" fill="none"/></svg><svg class="abs" style="left:2269px;top:170px" width="14" height="14" viewBox="0 0 14 14"><path d="M2 2L12 12M12 2L2 12" stroke="#1c3a8a" stroke-width="3" fill="none"/></svg><svg class="abs" style="left:1870.2px;top:201.9px;overflow:visible" width="32" height="32" viewBox="0 0 32 32"><ellipse cx="19" cy="28.5" rx="11" ry="2" fill="#000" opacity=".12"/><path d="M4 9C6 5,12 3,16 4C21 3,27 5,28 9C30 14,30 21,27 25C23 29,18 27,15 28C10 29,6 28,4 25C2 21,2 14,4 9Z" fill="#eeeee8" stroke="#8a8a8a" stroke-width=".9"/><path d="M3 9.500C8 13,12 15.500,16 15.500C20 15.500,24 13,29 9.500C30.500 14,30.500 21,28 25C24 21.500,20 19.500,16 19.500C12 19.500,8 21.500,4 25C1.500 21,1.500 14,3 9.500Z" fill="#1414e6"/><path d="M9 8C12 6,20 6,23 8C20 10.500,12 10.500,9 8Z" fill="#d4d4cc"/></svg><svg class="abs" style="left:1919.2px;top:201.9px;overflow:visible" width="32" height="32" viewBox="0 0 32 32"><ellipse cx="19" cy="28.5" rx="11" ry="2" fill="#000" opacity=".12"/><path d="M4 9C6 5,12 3,16 4C21 3,27 5,28 9C30 14,30 21,27 25C23 29,18 27,15 28C10 29,6 28,4 25C2 21,2 14,4 9Z" fill="#eeeee8" stroke="#8a8a8a" stroke-width=".9"/><path d="M3 9.500C8 13,12 15.500,16 15.500C20 15.500,24 13,29 9.500C30.500 14,30.500 21,28 25C24 21.500,20 19.500,16 19.500C12 19.500,8 21.500,4 25C1.500 21,1.500 14,3 9.500Z" fill="#1414e6"/><path d="M9 8C12 6,20 6,23 8C20 10.500,12 10.500,9 8Z" fill="#d4d4cc"/><text x="25" y="3" font-family="Liberation Sans" font-weight="bold" font-size="7.5" fill="#111" text-anchor="middle">MOD</text></svg><svg class="abs" style="left:1969.0px;top:201.9px;overflow:visible" width="32" height="32" viewBox="0 0 32 32"><text x="16" y="20" font-family="Liberation Sans" font-size="11.5" fill="#333" text-anchor="middle" textLength="36" lengthAdjust="spacingAndGlyphs">xxRCC</text></svg><svg class="abs" style="left:1870.2px;top:250.8px;overflow:visible" width="32" height="32" viewBox="0 0 32 32"><ellipse cx="19" cy="28.5" rx="11" ry="2" fill="#000" opacity=".12"/><path d="M4 9C6 5,12 3,16 4C21 3,27 5,28 9C30 14,30 21,27 25C23 29,18 27,15 28C10 29,6 28,4 25C2 21,2 14,4 9Z" fill="#eeeee8" stroke="#8a8a8a" stroke-width=".9"/><path d="M3 9.500C8 13,12 15.500,16 15.500C20 15.500,24 13,29 9.500C30.500 14,30.500 21,28 25C24 21.500,20 19.500,16 19.500C12 19.500,8 21.500,4 25C1.500 21,1.500 14,3 9.500Z" fill="#2a3ae0"/><path d="M3 21L9 12M5.500 24L13 14.500M11 21L15 15.500M17 19.500L21 14.500M20 20.500L26 12M24.500 22.500L29.500 14.500" stroke="#fff" stroke-width="1.1"/><path d="M9 8C12 6,20 6,23 8C20 10.500,12 10.500,9 8Z" fill="#d4d4cc"/></svg><svg class="abs" style="left:1919.2px;top:250.8px;overflow:visible" width="32" height="32" viewBox="0 0 32 32"><ellipse cx="17" cy="29.5" rx="11" ry="1.8" fill="#000" opacity=".13"/><path d="M11 3C13 1,15 3,15 8L14 28C13 30,11 30,11 28Z M21 3C19 1,17 3,17 8L18 28C19 30,21 30,21 28Z" fill="#e8e8e8" stroke="#5a5a5a" stroke-width=".8"/><path d="M13 4L13 27M19 4L19 27" stroke="#1a2ac8" stroke-width="2.4"/></svg><svg class="abs" style="left:1969.0px;top:250.8px;overflow:visible" width="32" height="32" viewBox="0 0 32 32"><ellipse cx="17" cy="29.5" rx="11" ry="1.8" fill="#000" opacity=".13"/><ellipse cx="9" cy="7" rx="4.5" ry="5.5" fill="#e8e8e8" stroke="#5a5a5a" stroke-width="1.2"/><path d="M7 12L4 30M10 12L9 30" stroke="#4a4a4a" stroke-width="1.6"/><path d="M12 18L20 8" stroke="#3a3a3a" stroke-width="1.4"/><path d="M2 30H13" stroke="#6a6a6a" stroke-width="1.2"/><text x="22" y="21" font-family="Liberation Sans" font-weight="bold" font-size="9.5" fill="#111" text-anchor="middle">120</text></svg><svg class="abs" style="left:1870.2px;top:298.3px;overflow:visible" width="32" height="32" viewBox="0 0 32 32"><ellipse cx="17" cy="29.5" rx="11" ry="1.8" fill="#000" opacity=".13"/><ellipse cx="9" cy="7" rx="4.5" ry="5.5" fill="#e8e8e8" stroke="#5a5a5a" stroke-width="1.2"/><path d="M7 12L4 30M10 12L9 30" stroke="#4a4a4a" stroke-width="1.6"/><path d="M12 18L20 8" stroke="#3a3a3a" stroke-width="1.4"/><path d="M2 30H13" stroke="#6a6a6a" stroke-width="1.2"/><text x="22" y="21" font-family="Liberation Sans" font-weight="bold" font-size="9.5" fill="#111" text-anchor="middle">140</text></svg><svg class="abs" style="left:1919.2px;top:298.3px;overflow:visible" width="32" height="32" viewBox="0 0 32 32"><ellipse cx="17" cy="29.5" rx="11" ry="1.8" fill="#000" opacity=".13"/><path transform="translate(2,4) scale(0.85)" d="M9 6C11 3,14 5,16 5C18 5,21 3,23 6C25 10,23 14,22.5 18C22 23,21.5 28,20 28C18.5 28,18.5 20,16 20C13.5 20,13.5 28,12 28C10.5 28,10 23,9.5 18C9 14,7 10,9 6Z" fill="#efe6c0" stroke="#8a7a42" stroke-width="1.18"/><path d="M9 8C12 3,22 3,24 8C24 12,22 14,21 15C18 13,14 13,11 15C9 13,8 11,9 8Z" fill="#2a3ac8"/><path d="M11 12L15 6M14 13L19 5M17.500 13L22 7" stroke="#fff" stroke-width="1"/></svg><svg class="abs" style="left:1969.0px;top:298.3px;overflow:visible" width="32" height="32" viewBox="0 0 32 32"><ellipse cx="17" cy="29.5" rx="11" ry="1.8" fill="#000" opacity=".13"/><ellipse cx="9" cy="7" rx="4.5" ry="5.5" fill="#e8e8e8" stroke="#5a5a5a" stroke-width="1.2"/><path d="M7 12L4 30M10 12L9 30" stroke="#4a4a4a" stroke-width="1.6"/><path d="M12 18L20 8" stroke="#3a3a3a" stroke-width="1.4"/><path d="M2 30H13" stroke="#6a6a6a" stroke-width="1.2"/><text x="22" y="21" font-family="Liberation Sans" font-weight="bold" font-size="9.5" fill="#111" text-anchor="middle">150</text></svg><svg class="abs" style="left:1870.2px;top:345.8px;overflow:visible" width="32" height="32" viewBox="0 0 32 32"><ellipse cx="17" cy="29.5" rx="11" ry="1.8" fill="#000" opacity=".13"/><ellipse cx="9" cy="7" rx="4.5" ry="5.5" fill="#e8e8e8" stroke="#5a5a5a" stroke-width="1.2"/><path d="M7 12L4 30M10 12L9 30" stroke="#4a4a4a" stroke-width="1.6"/><path d="M12 18L20 8" stroke="#3a3a3a" stroke-width="1.4"/><path d="M2 30H13" stroke="#6a6a6a" stroke-width="1.2"/><text x="22" y="21" font-family="Liberation Sans" font-weight="bold" font-size="9.5" fill="#111" text-anchor="middle">160</text></svg><svg class="abs" style="left:1919.2px;top:345.8px;overflow:visible" width="32" height="32" viewBox="0 0 32 32"><ellipse cx="17" cy="29.5" rx="11" ry="1.8" fill="#000" opacity=".13"/><path transform="translate(2,2) scale(0.9)" d="M9 6C11 3,14 5,16 5C18 5,21 3,23 6C25 10,23 14,22.5 18C22 23,21.5 28,20 28C18.5 28,18.5 20,16 20C13.5 20,13.5 28,12 28C10.5 28,10 23,9.5 18C9 14,7 10,9 6Z" fill="#efe6c0" stroke="#8a7a42" stroke-width="1.11"/><path d="M13 16L14.500 26M19 16L18 26" stroke="#1a2ac8" stroke-width="2.2"/><path d="M12 14C14 17,18 17,20 14" stroke="#1a2ac8" stroke-width="1.6" fill="none"/></svg><svg class="abs" style="left:1969.0px;top:345.8px;overflow:visible" width="32" height="32" viewBox="0 0 32 32"><rect x="1" y="1" width="28" height="27" fill="#d0d0d0" stroke="#5a5a5a" stroke-width="1.8"/><rect x="4" y="4" width="22" height="21" fill="#8e8e8e" stroke="#6a6a6a" stroke-width=".8"/><rect x="5" y="5" width="6" height="19" fill="#6a6a6a"/><path transform="translate(2,1) scale(0.85)" d="M9 6C11 3,14 5,16 5C18 5,21 3,23 6C25 10,23 14,22.5 18C22 23,21.5 28,20 28C18.5 28,18.5 20,16 20C13.5 20,13.5 28,12 28C10.5 28,10 23,9.5 18C9 14,7 10,9 6Z" fill="#e8e8e8" stroke="#c8c8c8" stroke-width="1.18"/><circle cx="25" cy="25" r="6" fill="#1a3a9a" stroke="#0a1a5a"/><text x="25" y="28.300" font-family="Liberation Sans" font-weight="bold" font-size="8.5" fill="#fff" text-anchor="middle">P</text></svg><svg class="abs" style="left:1870.2px;top:394.7px;overflow:visible" width="32" height="32" viewBox="0 0 32 32"><rect x="1" y="1" width="28" height="27" fill="#d0d0d0" stroke="#5a5a5a" stroke-width="1.8"/><rect x="4" y="4" width="22" height="21" fill="#8e8e8e" stroke="#6a6a6a" stroke-width=".8"/><rect x="5" y="5" width="6" height="19" fill="#6a6a6a"/><path transform="translate(2,1) scale(0.85)" d="M9 6C11 3,14 5,16 5C18 5,21 3,23 6C25 10,23 14,22.5 18C22 23,21.5 28,20 28C18.5 28,18.5 20,16 20C13.5 20,13.5 28,12 28C10.5 28,10 23,9.5 18C9 14,7 10,9 6Z" fill="#e8e8e8" stroke="#c8c8c8" stroke-width="1.18"/><circle cx="25" cy="25" r="6" fill="#1a3a9a" stroke="#0a1a5a"/><text x="25" y="28.300" font-family="Liberation Sans" font-weight="bold" font-size="8.5" fill="#fff" text-anchor="middle">X</text></svg><svg class="abs" style="left:1919.2px;top:394.7px;overflow:visible" width="32" height="32" viewBox="0 0 32 32"><ellipse cx="17" cy="29.5" rx="11" ry="1.8" fill="#000" opacity=".13"/><ellipse cx="16" cy="16" rx="14" ry="13" fill="#f4f4f4" stroke="#9a9a9a"/><text x="16" y="24.500" font-family="Liberation Sans" font-weight="bold" font-size="24" fill="#1a2ad8" text-anchor="middle">S</text></svg><svg class="abs" style="left:1969.0px;top:394.7px;overflow:visible" width="32" height="32" viewBox="0 0 32 32"><rect x="1" y="1" width="28" height="27" fill="#d0d0d0" stroke="#5a5a5a" stroke-width="1.8"/><rect x="4" y="4" width="22" height="21" fill="#8e8e8e" stroke="#6a6a6a" stroke-width=".8"/><rect x="5" y="5" width="6" height="19" fill="#6a6a6a"/><path transform="translate(2,1) scale(0.85)" d="M9 6C11 3,14 5,16 5C18 5,21 3,23 6C25 10,23 14,22.5 18C22 23,21.5 28,20 28C18.5 28,18.5 20,16 20C13.5 20,13.5 28,12 28C10.5 28,10 23,9.5 18C9 14,7 10,9 6Z" fill="#e8e8e8" stroke="#c8c8c8" stroke-width="1.18"/><circle cx="25" cy="25" r="6" fill="#1a3a9a" stroke="#0a1a5a"/><text x="25" y="28.300" font-family="Liberation Sans" font-weight="bold" font-size="8.5" fill="#fff" text-anchor="middle">x4</text></svg><svg class="abs" style="left:1870.2px;top:442.2px;overflow:visible" width="32" height="32" viewBox="0 0 32 32"><rect x="1" y="1" width="28" height="27" fill="#d0d0d0" stroke="#5a5a5a" stroke-width="1.8"/><rect x="4" y="4" width="22" height="21" fill="#8e8e8e" stroke="#6a6a6a" stroke-width=".8"/><rect x="5" y="5" width="6" height="19" fill="#6a6a6a"/><path transform="translate(2,1) scale(0.85)" d="M9 6C11 3,14 5,16 5C18 5,21 3,23 6C25 10,23 14,22.5 18C22 23,21.5 28,20 28C18.5 28,18.5 20,16 20C13.5 20,13.5 28,12 28C10.5 28,10 23,9.5 18C9 14,7 10,9 6Z" fill="#e8e8e8" stroke="#c8c8c8" stroke-width="1.18"/><circle cx="25" cy="25" r="6" fill="#1a3a9a" stroke="#0a1a5a"/><text x="25" y="28.300" font-family="Liberation Sans" font-weight="bold" font-size="8.5" fill="#fff" text-anchor="middle">x2</text></svg><svg class="abs" style="left:1919.2px;top:442.2px;overflow:visible" width="32" height="32" viewBox="0 0 32 32"><path d="M3 8C8 2,24 2,29 8C31 14,28 21,22 23C18 24,12 24,9 22C4 20,1 14,3 8Z" fill="#e0582a" stroke="#8a2808"/><path d="M6 9C10 6,22 6,26 9L24 14C20 12,12 12,8 14Z" fill="#fbfbf4" stroke="#c8c8b8" stroke-width=".5"/><path d="M24 12L30 15L25 19Z" fill="#2a2a2a"/><path d="M8 16C12 20,20 20,24 16C22 22,10 22,8 16Z" fill="#8a1808"/><text x="16" y="31" font-family="Liberation Sans" font-weight="bold" font-size="7" fill="#fff" stroke="#111" stroke-width="1.6" paint-order="stroke" text-anchor="middle">ADULT</text></svg><svg class="abs" style="left:1969.0px;top:442.2px;overflow:visible" width="32" height="32" viewBox="0 0 32 32"><path d="M3 8C8 2,24 2,29 8C31 14,28 21,22 23C18 24,12 24,9 22C4 20,1 14,3 8Z" fill="#e0582a" stroke="#8a2808"/><path d="M6 9C10 6,22 6,26 9L24 14C20 12,12 12,8 14Z" fill="#fbfbf4" stroke="#c8c8b8" stroke-width=".5"/><path d="M24 12L30 15L25 19Z" fill="#2a2a2a"/><path d="M8 16C12 20,20 20,24 16C22 22,10 22,8 16Z" fill="#8a1808"/><text x="16" y="31" font-family="Liberation Sans" font-weight="bold" font-size="7" fill="#fff" stroke="#111" stroke-width="1.6" paint-order="stroke" text-anchor="middle">CHILD</text></svg><svg class="abs" style="left:1870.2px;top:489.7px;overflow:visible" width="32" height="32" viewBox="0 0 32 32"><text x="16" y="20" font-family="Liberation Sans" font-size="11" fill="#333" text-anchor="middle" textLength="32" lengthAdjust="spacingAndGlyphs">D1208</text></svg><svg class="abs" style="left:1919.2px;top:489.7px;overflow:visible" width="32" height="32" viewBox="0 0 32 32"><ellipse cx="17" cy="29.5" rx="11" ry="1.8" fill="#000" opacity=".13"/><ellipse cx="9" cy="7" rx="4.5" ry="5.5" fill="#e8e8e8" stroke="#5a5a5a" stroke-width="1.2"/><path d="M7 12L4 30M10 12L9 30" stroke="#4a4a4a" stroke-width="1.6"/><path d="M12 18L20 8" stroke="#3a3a3a" stroke-width="1.4"/><path d="M2 30H13" stroke="#6a6a6a" stroke-width="1.2"/><text x="22" y="21" font-family="Liberation Sans" font-weight="bold" font-size="9.5" fill="#c82018" text-anchor="middle">ER</text></svg><svg class="abs" style="left:1969.0px;top:489.7px;overflow:visible" width="32" height="32" viewBox="0 0 32 32"><ellipse cx="17" cy="29.5" rx="11" ry="1.8" fill="#000" opacity=".13"/><path transform="translate(2,3) scale(0.88)" d="M9 6C11 3,14 5,16 5C18 5,21 3,23 6C25 10,23 14,22.5 18C22 23,21.5 28,20 28C18.5 28,18.5 20,16 20C13.5 20,13.5 28,12 28C10.5 28,10 23,9.5 18C9 14,7 10,9 6Z" fill="#efe6c0" stroke="#8a7a42" stroke-width="1.14"/><path d="M5 10C10 5,22 5,27 10L24 13C20 9,12 9,8 13Z" fill="#3a9a3a" stroke="#1a5a1a" stroke-width=".6"/><path d="M3 8L9 9L6 14ZM29 8L23 9L26 14Z" fill="#3a9a3a"/></svg><svg class="abs" style="left:1870.2px;top:538.7px;overflow:visible" width="32" height="32" viewBox="0 0 32 32"><ellipse cx="17" cy="29.5" rx="11" ry="1.8" fill="#000" opacity=".13"/><path d="M2 22C2 10,10 3,17 3C24 3,30 10,30 20C28 24,25 23,24 20C20 24,10 26,4 25C2.500 24.500,2 23.500,2 22Z" fill="#8a4038" stroke="#4a1810" stroke-width=".8"/><path d="M3 22C4 13,9 6,16 6C22 6,27 10,28 18C24 14,8 16,5 25Z" fill="#f4f0e8"/><path d="M7 12L8 22M10.500 9L12 20M14.500 7L15.500 19M18.500 7L19 18M22 8.500L22.500 17M25 11.500L25.500 17" stroke="#a86058" stroke-width="1.3"/></svg><svg class="abs" style="left:1919.2px;top:538.7px;overflow:visible" width="32" height="32" viewBox="0 0 32 32"><ellipse cx="17" cy="29.5" rx="11" ry="1.8" fill="#000" opacity=".13"/><path d="M1 13C3 9,7 11,9 14C14 17,20 16,24 11C25 7,27 4,30 5C31 16,26 29,15 29C7 29,2 22,1 13Z" fill="#a85850" stroke="#4a1810" stroke-width=".8"/><path d="M3 15C8 18,20 19,25 13L27 7L29.500 9C29 17,24 22,16 23C9 23,4 20,3 15Z" fill="#f6f2ea"/><path d="M6 16.500L7 21M9.500 17.500L10 22.500M13 18L13.500 23M16.500 18L16.500 23M20 17L20.500 22M23 15L24 19.500" stroke="#9a5048" stroke-width="1.2"/><path d="M4 12C8 10,18 10,23 10C19 14,9 15,4 12Z" fill="#5a2820"/></svg><svg class="abs" style="left:1969.0px;top:538.7px;overflow:visible" width="32" height="32" viewBox="0 0 32 32"><rect x="2" y="1" width="27" height="30" fill="#f8f8f0" stroke="#3a5a1a" stroke-width="2"/><rect x="5" y="4" width="21" height="24" fill="none" stroke="#a8b898" stroke-width="1"/><text x="15.500" y="22" font-family="Liberation Sans" font-weight="bold" font-size="15" fill="#4a6a1a" text-anchor="middle">W</text></svg><svg class="abs" style="left:1870.2px;top:586.1px;overflow:visible" width="32" height="32" viewBox="0 0 32 32"><path d="M1 10H9M1 15H9M1 20H9M23 10H31M23 15H31M23 20H31" stroke="#14147a" stroke-width="2.2"/><path d="M7 8C12 4,22 4,26 9C28 14,26 22,22 24C16 27,8 25,6 20C4 16,4 11,7 8Z" fill="#16168a"/><path d="M8 18L15 7M11 22L20 7M15 24.500L24 9M20 24L26.500 13" stroke="#fff" stroke-width="1.5"/></svg><svg class="abs" style="left:1919.2px;top:586.1px;overflow:visible" width="32" height="32" viewBox="0 0 32 32"><g transform="translate(1,0)"><path d="M23 10H31M23 15H31M23 20H31" stroke="#14147a" stroke-width="2.2"/><path d="M7 8C12 4,22 4,26 9C28 14,26 22,22 24C16 27,8 25,6 20C4 16,4 11,7 8Z" fill="#16168a"/><path d="M8 18L15 7M11 22L20 7M15 24.500L24 9M20 24L26.500 13" stroke="#fff" stroke-width="1.5"/></g></svg><svg class="abs" style="left:2040px;top:201px" width="27" height="29" viewBox="0 0 27 29"><rect x="1" y="1" width="25" height="27" fill="#fff" stroke="#333" stroke-width="2"/><g fill="#222"><rect x="3" y="4" width="21" height="5"/><rect x="3" y="12" width="21" height="5"/><rect x="3" y="20" width="21" height="5"/></g><g stroke="#eee" stroke-width="1"><path d="M8 5.5H22M8 7.5H22M8 13.5H22M8 15.5H22M8 21.5H22M8 23.5H22"/></g></svg><svg class="abs" style="left:2082px;top:201px" width="27" height="29" viewBox="0 0 27 29"><rect x="1" y="1" width="25" height="27" fill="#fff" stroke="#333" stroke-width="2"/><g fill="#111"><rect x="3" y="7" width="21" height="3"/><rect x="3" y="15" width="21" height="3"/><rect x="3" y="22" width="21" height="3"/></g></svg><div class="sep" style="left:2120px;top:194px;height:40px"></div><svg class="abs" style="left:2128px;top:198px" width="90" height="36" viewBox="0 0 90 36"><path d="M10 8C12 3,17 5,19 5C22 5,26 3,27 8C28 14,25 17,25 22C25 27,24 31,22 31C20 31,21 23,19 23C16 23,17 31,15 31C13 31,12 26,12 22C11 17,8 13,10 8Z" fill="#dcdcdc" stroke="#b4b4b4"/><path d="M8 22L13 29L20 14" stroke="#a8a8a8" stroke-width="3" fill="none"/><path d="M50 24L72 4L82 12L60 33Z" fill="#a9a9a9" stroke="#909090"/><path d="M50 24L60 33L56 34L48 28Z" fill="#8f8f8f"/></svg><div class="abs" style="left:2033px;top:240px;width:135px;height:34px;background:#fff"></div><div class="abs" style="left:2177px;top:245px;width:25px;height:24px;background:#585858;border:1px solid #3c3c3c;border-radius:2px"></div><svg class="abs" style="left:2177px;top:245px" width="25" height="24" viewBox="0 0 25 24"><path d="M6.5 6L18.5 18M18.5 6L6.5 18" stroke="#fff" stroke-width="3"/></svg><div class="abs tree" style="left:2035px;top:278px;width:255px;height:1434px;background:linear-gradient(90deg,#eeeeee,#e9e9e9 45%,#e3e3e3);border-top:3.400px solid #7c7c7c"></div><div class="abs" style="left:2039.5px;top:283.5px;width:250.5px;height:20px;background:linear-gradient(90deg,#dedede,#e0e0e0 40%,#e4e4e4 62%,#e3e3e3)"></div><div class="pm p" style="left:2046.7px;top:286.2px"></div><div class="t" style="left:2070.8px;top:285.5px;font-size:16px;font-weight:bold;color:#0a0a12;letter-spacing:.66px">Diagnostic</div><div class="abs" style="left:2039.5px;top:309.0px;width:250.5px;height:20px;background:linear-gradient(90deg,#dedede,#e0e0e0 40%,#e4e4e4 62%,#e3e3e3)"></div><div class="pm p" style="left:2046.7px;top:311.7px"></div><div class="t" style="left:2070.8px;top:311.0px;font-size:16px;font-weight:bold;color:#0a0a12;letter-spacing:.66px">Preventive</div><div class="abs" style="left:2039.5px;top:334.5px;width:250.5px;height:20px;background:linear-gradient(90deg,#dedede,#e0e0e0 40%,#e4e4e4 62%,#e3e3e3)"></div><div class="pm p" style="left:2046.7px;top:337.2px"></div><div class="t" style="left:2070.8px;top:336.5px;font-size:16px;font-weight:bold;color:#0a0a12;letter-spacing:.66px">Restorative</div><div class="abs" style="left:2039.5px;top:360.0px;width:250.5px;height:20px;background:linear-gradient(90deg,#dedede,#e0e0e0 40%,#e4e4e4 62%,#e3e3e3)"></div><div class="pm p" style="left:2046.7px;top:362.7px"></div><div class="t" style="left:2070.8px;top:362.0px;font-size:16px;font-weight:bold;color:#0a0a12;letter-spacing:.66px">Endodontics</div><div class="abs" style="left:2039.5px;top:385.5px;width:250.5px;height:20px;background:linear-gradient(90deg,#dedede,#e0e0e0 40%,#e4e4e4 62%,#e3e3e3)"></div><div class="pm p" style="left:2046.7px;top:388.2px"></div><div class="t" style="left:2070.8px;top:387.5px;font-size:16px;font-weight:bold;color:#0a0a12;letter-spacing:.66px">Periodontics</div><div class="abs" style="left:2039.5px;top:411.0px;width:250.5px;height:20px;background:linear-gradient(90deg,#dedede,#e0e0e0 40%,#e4e4e4 62%,#e3e3e3)"></div><div class="pm p" style="left:2046.7px;top:413.7px"></div><div class="t" style="left:2070.8px;top:413.0px;font-size:16px;font-weight:bold;color:#0a0a12;letter-spacing:.66px">Prosth, remov</div><div class="abs" style="left:2039.5px;top:436.5px;width:250.5px;height:20px;background:linear-gradient(90deg,#dedede,#e0e0e0 40%,#e4e4e4 62%,#e3e3e3)"></div><div class="pm p" style="left:2046.7px;top:439.2px"></div><div class="t" style="left:2070.8px;top:438.5px;font-size:16px;font-weight:bold;color:#0a0a12;letter-spacing:.66px">Maxillo Prosth</div><div class="abs" style="left:2039.5px;top:462.0px;width:250.5px;height:20px;background:linear-gradient(90deg,#dedede,#e0e0e0 40%,#e4e4e4 62%,#e3e3e3)"></div><div class="pm p" style="left:2046.7px;top:464.7px"></div><div class="t" style="left:2070.8px;top:464.0px;font-size:16px;font-weight:bold;color:#0a0a12;letter-spacing:.66px">Implant Serv</div><div class="abs" style="left:2039.5px;top:487.5px;width:250.5px;height:20px;background:linear-gradient(90deg,#dedede,#e0e0e0 40%,#e4e4e4 62%,#e3e3e3)"></div><div class="pm p" style="left:2046.7px;top:490.2px"></div><div class="t" style="left:2070.8px;top:489.5px;font-size:16px;font-weight:bold;color:#0a0a12;letter-spacing:.66px">Prostho, fixed</div><div class="abs" style="left:2039.5px;top:513.0px;width:250.5px;height:20px;background:linear-gradient(90deg,#dedede,#e0e0e0 40%,#e4e4e4 62%,#e3e3e3)"></div><div class="pm p" style="left:2046.7px;top:515.7px"></div><div class="t" style="left:2070.8px;top:515.0px;font-size:16px;font-weight:bold;color:#0a0a12;letter-spacing:.66px">Oral Surgery</div><div class="abs" style="left:2039.5px;top:538.5px;width:250.5px;height:20px;background:linear-gradient(90deg,#dedede,#e0e0e0 40%,#e4e4e4 62%,#e3e3e3)"></div><div class="pm p" style="left:2046.7px;top:541.2px"></div><div class="t" style="left:2070.8px;top:540.5px;font-size:16px;font-weight:bold;color:#0a0a12;letter-spacing:.66px">Orthodontics</div><div class="abs" style="left:2039.5px;top:564.0px;width:250.5px;height:20px;background:linear-gradient(90deg,#dedede,#e0e0e0 40%,#e4e4e4 62%,#e3e3e3)"></div><div class="pm p" style="left:2046.7px;top:566.7px"></div><div class="t" style="left:2070.8px;top:566.0px;font-size:16px;font-weight:bold;color:#0a0a12;letter-spacing:.66px">Adjunct Serv</div><div class="abs" style="left:2039.5px;top:589.5px;width:250.5px;height:20px;background:linear-gradient(90deg,#dedede,#e0e0e0 40%,#e4e4e4 62%,#e3e3e3)"></div><div class="pm p" style="left:2046.7px;top:592.2px"></div><div class="t" style="left:2070.8px;top:591.5px;font-size:16px;font-weight:bold;color:#0a0a12;letter-spacing:.66px">Conditions</div><div class="abs" style="left:2039.5px;top:615.0px;width:250.5px;height:20px;background:linear-gradient(90deg,#dedede,#e0e0e0 40%,#e4e4e4 62%,#e3e3e3)"></div><div class="pm p" style="left:2046.7px;top:617.7px"></div><div class="t" style="left:2070.8px;top:617.0px;font-size:16px;font-weight:bold;color:#0a0a12;letter-spacing:.66px">Other</div><div class="abs" style="left:2039.5px;top:640.5px;width:250.5px;height:20px;background:linear-gradient(90deg,#dedede,#e0e0e0 40%,#e4e4e4 62%,#e3e3e3)"></div><div class="pm p" style="left:2046.7px;top:643.2px"></div><div class="t" style="left:2070.8px;top:642.5px;font-size:16px;font-weight:bold;color:#0a0a12;letter-spacing:.66px">Multi-Codes</div><div class="abs" style="left:2039.5px;top:666.0px;width:250.5px;height:20px;background:linear-gradient(90deg,#dedede,#e0e0e0 40%,#e4e4e4 62%,#e3e3e3)"></div><div class="pm p" style="left:2046.7px;top:668.7px"></div><div class="t" style="left:2070.8px;top:668.0px;font-size:16px;font-weight:bold;color:#0a0a12;letter-spacing:.66px">Dental Diagnostics</div><div class="abs" style="left:1859px;top:165px;width:6px;height:1549px;background:linear-gradient(90deg,#b4b4b4 0,#cacaca 1.5px,#c8c8c8 4.3px,#6e6e6e 4.6px,#6e6e6e 6px)"></div><div class="abs" style="left:2025.6px;top:165px;width:7.2px;height:1549px;background:linear-gradient(90deg,#7c7c7c 0,#7c7c7c 1.6px,#d0d0d0 2px,#cbcbcb 4.8px,#6c6c6c 5.2px,#6c6c6c 7.2px)"></div><div class="abs" style="left:2032.8px;top:278px;width:2.6px;height:1434px;background:#7a7a7a"></div><div class="abs" style="left:1865px;top:1711.5px;width:425px;height:2.5px;background:#fbfbfb"></div><div class="abs" style="left:0;top:1714px;width:2290px;height:7px;background:linear-gradient(#d4d4d4 0,#dadada 1px,#d6d6d6 4.6px,#70707a 5.1px,#70707a 6.5px,#8fb2ee 7px)"></div><div class="abs" style="left:2px;top:1711.5px;width:1857px;height:2.5px;background:linear-gradient(rgba(10,20,70,0),rgba(10,20,70,.55))"></div><div class="abs" style="left:2px;top:1720.6px;width:2288px;height:27.4px;background:linear-gradient(#8fb4f3 0,#a3c4f7 30%,#b6d1f9 65%,#bdd6fa 93%,#7f9ccb 95%,#8aa6d2 100%)"></div><div class="t" style="left:5px;top:1725px;font-size:16.5px;font-weight:bold;color:#0a0a14;letter-spacing:-.1px">Clinical Notes</div><svg class="abs" style="left:2245px;top:1725px" width="12" height="16" viewBox="0 0 12 16"><path d="M3 1.5H9M4 1.5V8M7.5 1.5V8M8.8 1.5V8M1.5 8.5H10.5M6 9V15" stroke="#1c3a8a" stroke-width="1.6" fill="none"/></svg><svg class="abs" style="left:2269px;top:1726px" width="14" height="14" viewBox="0 0 14 14"><path d="M2 2L12 12M12 2L2 12" stroke="#1c3a8a" stroke-width="3" fill="none"/></svg><div class="abs" style="left:2px;top:1748px;width:2288px;height:44px;background:linear-gradient(#f4f4f4,#ededed)"></div><div class="abs" style="left:2px;top:1792px;width:2288px;height:248px;background:#f0f0f0"></div><svg class="abs" style="left:7.5px;top:1754.4px;overflow:visible" width="32" height="32" viewBox="0 0 32 32"><rect x="1" y="5" width="24" height="17" fill="#f4f4f4" stroke="#6a6a6a"/><rect x="1" y="5" width="24" height="4" fill="#b8c4d8"/><path d="M9 9V22M4 12V19M6.500 12V19" stroke="#6a6a6a"/><path d="M22 16L24 21L29 19L27 24L31 27L26 28L25 33L21 29L17 31L18 26L14 23L19 22Z" fill="#f8c828" stroke="#c89808" stroke-width=".5"/></svg><svg class="abs" style="left:50.4px;top:1754.4px;overflow:visible" width="32" height="32" viewBox="0 0 32 32"><path d="M9 4H26L22 24H4Z" fill="#dcdcdc"/><path d="M4 24H22L21 28H5Z" fill="#c4c4c4"/></svg><svg class="abs" style="left:91.0px;top:1754.4px;overflow:visible" width="32" height="32" viewBox="0 0 32 32"><rect x="1" y="5" width="24" height="17" fill="#e4e4e4" stroke="#9a9a9a"/><path d="M9 9V22M4 12V19M6.500 12V19M12 12H22M12 15H22" stroke="#a8a8a8"/><path d="M17 17L28 29M28 17L17 29" stroke="#7a7a7a" stroke-width="3"/></svg><svg class="abs" style="left:140.5px;top:1754.4px;overflow:visible" width="32" height="32" viewBox="0 0 32 32"><path d="M3 18L18 2L31 10L16 28Z" fill="#2a6ad0" stroke="#0a2a7a"/><path d="M9 17L17 8L25 13L17 22Z" fill="#f4f4f4"/><path d="M14 24L21 17L25 19.500L18 26.500Z" fill="#d8d8e4"/><path d="M3 18L16 28V31L3 21Z" fill="#1a3a8a"/></svg><svg class="abs" style="left:182.0px;top:1754.4px;overflow:visible" width="32" height="32" viewBox="0 0 32 32"><path d="M4 6H16L20 10V26H4Z" fill="#e4e4e4" stroke="#9a9a9a"/><path d="M11 10H23L27 14V31H11Z" fill="#ececec" stroke="#9a9a9a"/><path d="M8 3C14 0,18 2,18 6L21 5L17 11L12 7L15 6.500C14 4,11 3,8 3Z" fill="#a8a8a8"/></svg><svg class="abs" style="left:226.0px;top:1754.4px;overflow:visible" width="32" height="32" viewBox="0 0 32 32"><rect x="3" y="6" width="20" height="14" fill="#f4f4f4" stroke="#5a5a5a"/><path d="M9 9V20M5 11V17" stroke="#5a5a5a"/><path d="M14 14C20 12,25 16,23 22L27 21L22 28L17 22L20 22.500C21 18,18 16,14 17Z" fill="#e88a28" stroke="#a84a08" stroke-width=".6"/><rect x="10" y="12" width="7" height="6" fill="#c82818"/></svg><svg class="abs" style="left:276.7px;top:1754.4px;overflow:visible" width="32" height="32" viewBox="0 0 32 32"><path d="M4 29L8 20L24 2L28 5L13 24Z" fill="#d8d8d8" stroke="#9a9a9a"/><path d="M4 29L8 20L13 24Z" fill="#a8a8a8"/></svg><svg class="abs" style="left:327.4px;top:1754.4px;overflow:visible" width="32" height="32" viewBox="0 0 32 32"><rect x="1" y="4" width="26" height="20" fill="#e4e4e4" stroke="#9a9a9a"/><rect x="1" y="4" width="26" height="4" fill="#c4c4c4"/><path d="M8 8V24M4 11V20" stroke="#a8a8a8"/><text x="18" y="21" font-family="Liberation Sans" font-weight="bold" font-size="11" fill="#8a8a8a" text-anchor="middle">31</text><path d="M20 22L30 18L27 28Z" fill="#b4b4b4"/></svg><svg class="abs" style="left:369.6px;top:1754.4px;overflow:visible" width="32" height="32" viewBox="0 0 32 32"><circle cx="16" cy="9" r="5" fill="#9a9a9a"/><path d="M8 24C8 15,24 15,24 24Z" fill="#8a8a8a"/><path d="M2 24C6 20,10 26,14 22C18 26,22 20,28 25L26 29H4Z" fill="#a8a8a8"/></svg><svg class="abs" style="left:410.0px;top:1754.4px;overflow:visible" width="32" height="32" viewBox="0 0 32 32"><path d="M8 3H24L27 30H5Z" fill="#dcdcdc" stroke="#a8a8a8"/><text x="13" y="15" font-family="Liberation Sans" font-weight="bold" font-size="13" fill="#8a8a8a" text-anchor="middle">3</text><rect x="16" y="14" width="10" height="13" fill="#ececec" stroke="#a8a8a8"/><path d="M18 18H24M18 21H24M18 24H24" stroke="#a8a8a8"/></svg><svg class="abs" style="left:462.5px;top:1754.4px;overflow:visible" width="32" height="32" viewBox="0 0 32 32"><path d="M10 1H22L24 10H8Z" fill="#f4f4f4" stroke="#6a6a6a"/><path d="M2 13L8 8H25L31 13V27H2Z" fill="#e4cfc8" stroke="#6a5a58"/><path d="M2 13H31V18H2Z" fill="#d0b4b0"/><rect x="6" y="20" width="20" height="8" fill="#f4ece8" stroke="#8a7a78"/><path d="M25 13L31 13V27L27 29Z" fill="#a07878" opacity=".6"/></svg><div class="sep" style="left:131px;top:1750px;height:40px"></div><div class="sep" style="left:266.8px;top:1750px;height:40px"></div><div class="sep" style="left:318px;top:1750px;height:40px"></div><div class="sep" style="left:453px;top:1750px;height:40px"></div><svg class="abs" style="left:1728.3px;top:1797.0px;overflow:visible" width="32" height="32" viewBox="0 0 32 32"><path d="M10 2L16 20M24 4L12 20" stroke="#b4b4b4" stroke-width="2"/><circle cx="9" cy="25" r="4" fill="none" stroke="#b4b4b4" stroke-width="2"/><circle cx="20" cy="25" r="4" fill="none" stroke="#b4b4b4" stroke-width="2"/></svg><svg class="abs" style="left:1763.6px;top:1797.0px;overflow:visible" width="32" height="32" viewBox="0 0 32 32"><path d="M8 4L26 8L20 30L2 25Z" fill="#d4d4d4" stroke="#b4b4b4"/><path d="M12 2L22 4L21 9L11 7Z" fill="#bcbcbc"/><path d="M8 14L20 17M7 18L19 21" stroke="#b8b8b8"/></svg><svg class="abs" style="left:1797.3px;top:1797.0px;overflow:visible" width="32" height="32" viewBox="0 0 32 32"><rect x="4" y="5" width="20" height="25" fill="#b8b8b8"/><rect x="10" y="2" width="8" height="6" fill="#a4a4a4"/><rect x="13" y="15" width="13" height="15" fill="#e4e4e4" stroke="#c4c4c4"/></svg><svg class="abs" style="left:1844.3px;top:1797.0px;overflow:visible" width="32" height="32" viewBox="0 0 32 32"><rect x="1" y="3" width="28" height="20" fill="#dcdcdc" stroke="#b8b8b8"/><rect x="1" y="3" width="28" height="4" fill="#c8c8c8"/><text x="20" y="20" font-family="Liberation Sans" font-weight="bold" font-size="11" fill="#b0b0b0" text-anchor="middle">31</text><path d="M14 22L28 18L24 29Z" fill="#c8c8c8"/></svg><svg class="abs" style="left:1889.9px;top:1797.0px;overflow:visible" width="32" height="32" viewBox="0 0 32 32"><text x="14" y="12" font-family="Liberation Sans" font-weight="bold" font-size="11" fill="#b0b0b0" text-anchor="middle">ABC</text><path d="M4 18L11 26L24 10" stroke="#b4b4b4" stroke-width="4" fill="none"/></svg><svg class="abs" style="left:1938.3px;top:1797.0px;overflow:visible" width="32" height="32" viewBox="0 0 32 32"><text x="3" y="14" font-family="Liberation Sans" font-weight="bold" font-size="14" fill="#b4b4b4">A</text><text x="10" y="29" font-family="Liberation Sans" font-weight="bold" font-size="24" fill="#a8a8a8">A</text></svg><svg class="abs" style="left:2076.7px;top:1797.0px;overflow:visible" width="32" height="32" viewBox="0 0 32 32"><rect x="1" y="3" width="30" height="20" fill="#f4f4f4" stroke="#5a5a5a"/><path d="M9 3V23M4 7V19M12 8H28M12 12H28" stroke="#5a5a5a"/><rect x="15" y="13" width="14" height="16" fill="#f4e4a0" stroke="#8a7a2a"/><rect x="18" y="18" width="8" height="5" fill="#e8b828" stroke="#8a6a0a"/><path d="M19 2C19 0,23 0,23 2V12H19Z" fill="#fbfbfb" stroke="#9a9a9a" stroke-width=".8"/></svg><div class="dds" style="left:1926.5px;top:1811px;border-top-color:#9a9a9a"></div><div class="sep" style="left:1836.8px;top:1795px;height:36px"></div><div class="sep" style="left:1882.4px;top:1795px;height:36px"></div><div class="sep" style="left:2066.8px;top:1795px;height:36px"></div><div class="t" style="left:54px;top:1805px;font-size:17.5px;color:#111">Notes:</div><svg class="abs" style="left:115px;top:1800px" width="27" height="29" viewBox="0 0 27 29"><rect x="1" y="1" width="25" height="27" fill="#fff" stroke="#333" stroke-width="2"/><g fill="#222"><rect x="3" y="4" width="21" height="5"/><rect x="3" y="12" width="21" height="5"/><rect x="3" y="20" width="21" height="5"/></g><g stroke="#eee" stroke-width="1"><path d="M8 5.5H22M8 7.5H22M8 13.5H22M8 15.5H22M8 21.5H22M8 23.5H22"/></g></svg><svg class="abs" style="left:157px;top:1800px" width="27" height="29" viewBox="0 0 27 29"><rect x="1" y="1" width="25" height="27" fill="#fff" stroke="#333" stroke-width="2"/><g fill="#111"><rect x="3" y="7" width="21" height="3"/><rect x="3" y="15" width="21" height="3"/><rect x="3" y="22" width="21" height="3"/></g></svg><svg class="abs" style="left:1986px;top:1799px" width="27" height="29" viewBox="0 0 27 29"><rect x="1" y="1" width="25" height="27" fill="#fff" stroke="#333" stroke-width="2"/><g fill="#222"><rect x="3" y="4" width="21" height="5"/><rect x="3" y="12" width="21" height="5"/><rect x="3" y="20" width="21" height="5"/></g><g stroke="#eee" stroke-width="1"><path d="M8 5.5H22M8 7.5H22M8 13.5H22M8 15.5H22M8 21.5H22M8 23.5H22"/></g></svg><svg class="abs" style="left:2028px;top:1799px" width="27" height="29" viewBox="0 0 27 29"><rect x="1" y="1" width="25" height="27" fill="#fff" stroke="#333" stroke-width="2"/><g fill="#111"><rect x="3" y="7" width="21" height="3"/><rect x="3" y="15" width="21" height="3"/><rect x="3" y="22" width="21" height="3"/></g></svg><div class="t" style="left:267px;top:1803px;font-size:16.5px;color:#111">Note :</div><div class="abs" style="left:3px;top:1834.5px;width:251px;height:206px;background:#fff;border-right:2px solid #747474;border-top:1.5px solid #9c9c9c"></div><div class="abs" style="left:32px;top:1837px;width:82px;height:23px;background:#0a6cd6;outline:1px dotted #fff;outline-offset:-1px"></div><div class="t" style="left:35px;top:1840px;font-size:16.5px;color:#fff">9/10/2024</div><div class="t" style="left:63.5px;top:1864px;font-size:16.4px;color:#111">4:16:28 PM [LT00]</div><div class="t" style="left:35px;top:1888px;font-size:16.5px;color:#111">9/3/2024</div><div class="t" style="left:35px;top:1912px;font-size:16.5px;color:#111">8/27/2024</div><div class="abs" style="left:18px;top:1855px;width:0;height:58px;border-left:1px dotted #909090"></div><div class="abs" style="left:24px;top:1848px;width:8px;height:0;border-top:1px dotted #909090"></div><div class="abs" style="left:46px;top:1860px;width:0;height:11px;border-left:1px dotted #909090"></div><div class="abs" style="left:46px;top:1871px;width:14px;height:0;border-top:1px dotted #909090"></div><div class="abs" style="left:24px;top:1896px;width:8px;height:0;border-top:1px dotted #909090"></div><div class="abs" style="left:24px;top:1920px;width:8px;height:0;border-top:1px dotted #909090"></div><div class="abs" style="left:12px;top:1842.5px;width:11px;height:11px;border:1px solid #8a8a8a;background:#fff"><div class="abs" style="left:2px;top:4px;width:5px;height:1px;background:#333"></div></div><div class="abs" style="left:12px;top:1890.5px;width:11px;height:11px;border:1px solid #8a8a8a;background:#fff"><div class="abs" style="left:2px;top:4px;width:5px;height:1px;background:#333"></div><div class="abs" style="left:4px;top:2px;width:1px;height:5px;background:#333"></div></div><div class="abs" style="left:12px;top:1914.5px;width:11px;height:11px;border:1px solid #8a8a8a;background:#fff"><div class="abs" style="left:2px;top:4px;width:5px;height:1px;background:#333"></div><div class="abs" style="left:4px;top:2px;width:1px;height:5px;background:#333"></div></div><div class="abs" style="left:259px;top:1833px;width:1714px;height:207px;background:#e3e3e3;border-top:3px solid #7d7d7d;border-left:3px solid #8d8d8d"></div><div class="abs" style="left:1980px;top:1836px;width:310px;height:204px;background:linear-gradient(90deg,#eeeeee,#e8e8e8 50%,#e3e3e3);border-top:2px solid #8a8a8a;border-left:3px solid #858585"></div><div class="abs" style="left:2262px;top:1838px;width:28px;height:202px;background:#f0f0f0"></div><div class="abs" style="left:2275px;top:1863px;width:3px;height:57px;background:#8a8a8a;border-radius:2px"></div><div class="abs" style="left:1985px;top:1840.3px;width:276px;height:20px;background:linear-gradient(90deg,#dedede,#e0e0e0 40%,#e4e4e4 62%,#e3e3e3)"></div><div class="pm p" style="left:1992.5px;top:1843.0px"></div><div class="t" style="left:2016.8px;top:1842.3px;font-size:16px;font-weight:bold;color:#0a0a12;letter-spacing:.82px">Administrative</div><div class="abs" style="left:1985px;top:1865.8px;width:276px;height:20px;background:linear-gradient(90deg,#dedede,#e0e0e0 40%,#e4e4e4 62%,#e3e3e3)"></div><div class="pm p" style="left:1992.5px;top:1868.5px"></div><div class="t" style="left:2016.8px;top:1867.8px;font-size:16px;font-weight:bold;color:#0a0a12;letter-spacing:.82px">Anesthetics</div><div class="abs" style="left:1985px;top:1891.3px;width:276px;height:20px;background:linear-gradient(90deg,#dedede,#e0e0e0 40%,#e4e4e4 62%,#e3e3e3)"></div><div class="pm p" style="left:1992.5px;top:1894.0px"></div><div class="t" style="left:2016.8px;top:1893.3px;font-size:16px;font-weight:bold;color:#0a0a12;letter-spacing:.82px">Clinical Exams</div><div class="abs" style="left:1985px;top:1916.8px;width:276px;height:20px;background:linear-gradient(90deg,#dedede,#e0e0e0 40%,#e4e4e4 62%,#e3e3e3)"></div><div class="pm p" style="left:1992.5px;top:1919.5px"></div><div class="t" style="left:2016.8px;top:1918.8px;font-size:16px;font-weight:bold;color:#0a0a12;letter-spacing:.82px">Endodontics</div><div class="abs" style="left:1985px;top:1942.3px;width:276px;height:20px;background:linear-gradient(90deg,#dedede,#e0e0e0 40%,#e4e4e4 62%,#e3e3e3)"></div><div class="pm p" style="left:1992.5px;top:1945.0px"></div><div class="t" style="left:2016.8px;top:1944.3px;font-size:16px;font-weight:bold;color:#0a0a12;letter-spacing:.82px">Fixed Prosthetics</div><div class="abs" style="left:1985px;top:1967.8px;width:276px;height:20px;background:linear-gradient(90deg,#dedede,#e0e0e0 40%,#e4e4e4 62%,#e3e3e3)"></div><div class="pm p" style="left:1992.5px;top:1970.5px"></div><div class="t" style="left:2016.8px;top:1969.8px;font-size:16px;font-weight:bold;color:#0a0a12;letter-spacing:.82px">Hygiene</div><div class="abs" style="left:1985px;top:1993.3px;width:276px;height:20px;background:linear-gradient(90deg,#dedede,#e0e0e0 40%,#e4e4e4 62%,#e3e3e3)"></div><div class="pm" style="left:1992.5px;top:1996.0px"></div><div class="t" style="left:2016.8px;top:1995.3px;font-size:16px;font-weight:bold;color:#0a0a12;letter-spacing:.82px">Health History</div><div class="abs" style="left:1985px;top:2019px;width:276px;height:21px;background:#f3f3f3"></div><div class="t" style="left:2013px;top:2023px;font-size:16.5px;color:#222">Antibiotic Pre-Med Contrain</div><div class="abs" style="left:2180px;top:1828px;width:60px;height:119px;border-radius:30px;background:#383b43"></div><svg class="abs" style="left:2190px;top:1840px" width="40" height="40" viewBox="0 0 40 40"><g fill="none" stroke="#12b488" stroke-width="2.6" stroke-linejoin="round" stroke-linecap="round"><path d="M6 33L9 24L26 7C28 5,31 5,33 7C35 9,35 12,33 14L16 31Z"/><path d="M24 9L31 16"/></g><path d="M6 33L8.5 25.5L14.5 31.5Z" fill="#12b488"/><path d="M27 6C29 4,32 4.5,34 6.5C35.5 8,36 11,34 13L27 6Z" fill="#12b488"/></svg><svg class="abs" style="left:2194px;top:1898px" width="32" height="40" viewBox="0 0 32 40"><g fill="none" stroke="#12b488" stroke-width="2.4" stroke-linejoin="round"><path d="M4 6C4 4,5 3,7 3H20L28 11V33C28 35,27 36,25 36H7C5 36,4 35,4 33Z"/><path d="M19 3V12H28"/></g><g stroke="#12b488" stroke-width="1.8"><path d="M9 17H23M9 21.5H23M9 26H23M9 30.5H23"/></g></svg><div class="abs" style="left:2174px;top:1967px;width:72px;height:72px;border-radius:36px;background:#383b43"></div><svg class="abs" style="left:2186px;top:1982px" width="48" height="46" viewBox="0 0 48 46"><path d="M5.500 9.500C8 5,13 3.500,24 3.500C35 3.500,40 5,42.500 9.500C42.500 20,41 30,38.500 39.500C34 41,31 35.500,24 35.500C17 35.500,14 41,9.500 39.500C7 30,5.500 20,5.500 9.500Z" fill="none" stroke="#12b488" stroke-width="3.4" stroke-linejoin="round"/><text x="24" y="27.500" font-family="Liberation Sans" font-weight="bold" font-size="20.500" fill="#fff" text-anchor="middle">AI</text></svg></body></html>
